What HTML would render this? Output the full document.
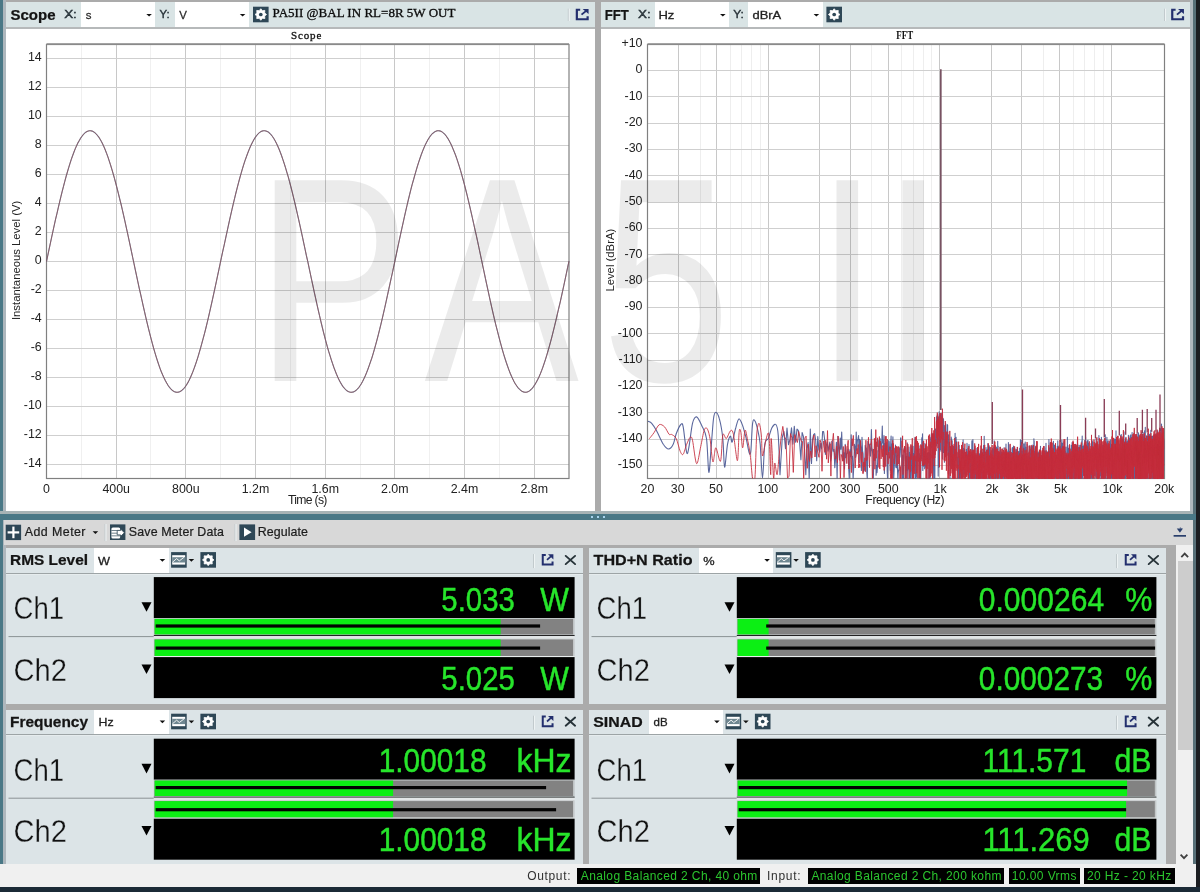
<!DOCTYPE html>
<html lang="en"><head><meta charset="utf-8"><title>Audio Analyzer - PA5II</title>
<style>
html,body{margin:0;padding:0}
body{width:1200px;height:892px;overflow:hidden;position:relative;background:#ababab;font-family:"Liberation Sans",sans-serif;color:#111}
.abs{position:absolute}
.hdr{background:#d9e4e5}
.mp{background:#dce4e7}
.ax{font-family:"Liberation Sans",sans-serif;font-size:12.4px;fill:#222}
.axl{font-family:"Liberation Sans",sans-serif;font-size:11.5px;fill:#222}
.axs{font-family:"Liberation Sans",sans-serif;font-size:11.3px;fill:#222}
svg text{white-space:pre}
</style></head>
<body>
<div class="abs" style="left:0;top:0;width:3px;height:887px;background:#4a7886"></div>
<div class="abs" style="left:3px;top:0;width:3px;height:865px;background:#aeb7bd"></div>
<div class="abs" style="left:1190px;top:0;width:3.3px;height:513px;background:#b0b8be"></div>
<div class="abs" style="left:1193.2px;top:0;width:3px;height:887px;background:#587078"></div>
<div class="abs" style="left:1195.6px;top:0;width:4.4px;height:892px;background:#1b1d21"></div>
<div class="abs" style="left:6px;top:2px;width:589px;height:509.5px;background:#fff"></div>
<div class="abs hdr" style="left:6px;top:2px;width:589px;height:25px"></div>
<div class="abs" style="left:6px;top:27px;width:589px;height:1.5px;background:#b6b9ba"></div>
<div class="abs" style="left:601px;top:2px;width:589px;height:509.5px;background:#fff"></div>
<div class="abs hdr" style="left:601px;top:2px;width:589px;height:25px"></div>
<div class="abs" style="left:601px;top:27px;width:589px;height:1.5px;background:#b6b9ba"></div>
<div class="abs" style="left:81px;top:2px;width:74px;height:25px;background:#fff"></div>
<div class="abs" style="left:175px;top:2px;width:74px;height:25px;background:#fff"></div>
<div class="abs" style="left:654.5px;top:2px;width:74.20000000000005px;height:25px;background:#fff"></div>
<div class="abs" style="left:748px;top:2px;width:74.5px;height:25px;background:#fff"></div>
<div class="abs" style="left:0;top:511.3px;width:1193px;height:2.4px;background:#a7b3b5"></div>
<div class="abs" style="left:0;top:513.6px;width:1196px;height:6.6px;background:#4a7886"></div>
<div class="abs" style="left:591.2px;top:515.6px;width:2.2px;height:2.2px;background:#a9d4ee"></div>
<div class="abs" style="left:597.2px;top:515.6px;width:2.2px;height:2.2px;background:#a9d4ee"></div>
<div class="abs" style="left:603.2px;top:515.6px;width:2.2px;height:2.2px;background:#a9d4ee"></div>
<div class="abs" style="left:3.5px;top:520.2px;width:1189.5px;height:24.8px;background:#d8d8d8"></div>
<div class="abs mp" style="left:6px;top:547.6px;width:577px;height:156.1px"></div>
<div class="abs" style="left:94px;top:547.6px;width:74.6px;height:25.2px;background:#fff"></div>
<div class="abs" style="left:6px;top:572.8000000000001px;width:577px;height:1px;background:#9da4a6"></div>
<div class="abs" style="left:6px;top:573.8000000000001px;width:577px;height:1px;background:#e6ecee"></div>
<div class="abs mp" style="left:589px;top:547.6px;width:577px;height:156.1px"></div>
<div class="abs" style="left:698.7px;top:547.6px;width:74.6px;height:25.2px;background:#fff"></div>
<div class="abs" style="left:589px;top:572.8000000000001px;width:577px;height:1px;background:#9da4a6"></div>
<div class="abs" style="left:589px;top:573.8000000000001px;width:577px;height:1px;background:#e6ecee"></div>
<div class="abs mp" style="left:6px;top:709.6px;width:577px;height:154.9px"></div>
<div class="abs" style="left:94px;top:709.6px;width:74.6px;height:24.8px;background:#fff"></div>
<div class="abs" style="left:6px;top:734.2px;width:577px;height:1px;background:#9da4a6"></div>
<div class="abs" style="left:6px;top:735.2px;width:577px;height:1px;background:#e6ecee"></div>
<div class="abs mp" style="left:589px;top:709.6px;width:577px;height:154.9px"></div>
<div class="abs" style="left:648.5px;top:709.6px;width:74.6px;height:24.8px;background:#fff"></div>
<div class="abs" style="left:589px;top:734.2px;width:577px;height:1px;background:#9da4a6"></div>
<div class="abs" style="left:589px;top:735.2px;width:577px;height:1px;background:#e6ecee"></div>
<div class="abs" style="left:1176.2px;top:545px;width:16.8px;height:320px;background:#f0f0f0"></div>
<div class="abs" style="left:1177.5px;top:561px;width:15px;height:188.5px;background:#cdcdcd"></div>
<div class="abs" style="left:0;top:864.4px;width:1195.5px;height:22.2px;background:#f0f0f0"></div>
<div class="abs" style="left:0;top:886.6px;width:1200px;height:5.4px;background:#1b2a36"></div>
<div class="abs" style="left:577.3px;top:867.6px;width:183.1px;height:16.6px;background:#000"></div>
<div class="abs" style="left:807.6px;top:867.6px;width:196.0px;height:16.6px;background:#000"></div>
<div class="abs" style="left:1008.9px;top:867.6px;width:71.4px;height:16.6px;background:#000"></div>
<div class="abs" style="left:1084.1px;top:867.6px;width:90.9px;height:16.6px;background:#000"></div>
<svg class="abs" style="left:0;top:0;will-change:transform" width="1200" height="892" viewBox="0 0 1200 892">
<line x1="81.5" y1="44.5" x2="81.5" y2="478.5" stroke="#f0f0f0" stroke-width="1"/>
<line x1="116.5" y1="44.5" x2="116.5" y2="478.5" stroke="#c8c8c8" stroke-width="1"/>
<line x1="150.5" y1="44.5" x2="150.5" y2="478.5" stroke="#f0f0f0" stroke-width="1"/>
<line x1="185.5" y1="44.5" x2="185.5" y2="478.5" stroke="#c8c8c8" stroke-width="1"/>
<line x1="220.5" y1="44.5" x2="220.5" y2="478.5" stroke="#f0f0f0" stroke-width="1"/>
<line x1="255.5" y1="44.5" x2="255.5" y2="478.5" stroke="#c8c8c8" stroke-width="1"/>
<line x1="290.5" y1="44.5" x2="290.5" y2="478.5" stroke="#f0f0f0" stroke-width="1"/>
<line x1="325.5" y1="44.5" x2="325.5" y2="478.5" stroke="#c8c8c8" stroke-width="1"/>
<line x1="360.5" y1="44.5" x2="360.5" y2="478.5" stroke="#f0f0f0" stroke-width="1"/>
<line x1="394.5" y1="44.5" x2="394.5" y2="478.5" stroke="#c8c8c8" stroke-width="1"/>
<line x1="429.5" y1="44.5" x2="429.5" y2="478.5" stroke="#f0f0f0" stroke-width="1"/>
<line x1="464.5" y1="44.5" x2="464.5" y2="478.5" stroke="#c8c8c8" stroke-width="1"/>
<line x1="499.5" y1="44.5" x2="499.5" y2="478.5" stroke="#f0f0f0" stroke-width="1"/>
<line x1="534.5" y1="44.5" x2="534.5" y2="478.5" stroke="#c8c8c8" stroke-width="1"/>
<line x1="46.5" y1="464.5" x2="569.0" y2="464.5" stroke="#cfcfcf" stroke-width="1"/>
<line x1="46.5" y1="435.5" x2="569.0" y2="435.5" stroke="#cfcfcf" stroke-width="1"/>
<line x1="46.5" y1="406.5" x2="569.0" y2="406.5" stroke="#cfcfcf" stroke-width="1"/>
<line x1="46.5" y1="377.5" x2="569.0" y2="377.5" stroke="#cfcfcf" stroke-width="1"/>
<line x1="46.5" y1="348.5" x2="569.0" y2="348.5" stroke="#cfcfcf" stroke-width="1"/>
<line x1="46.5" y1="319.5" x2="569.0" y2="319.5" stroke="#cfcfcf" stroke-width="1"/>
<line x1="46.5" y1="290.5" x2="569.0" y2="290.5" stroke="#cfcfcf" stroke-width="1"/>
<line x1="46.5" y1="261.5" x2="569.0" y2="261.5" stroke="#cfcfcf" stroke-width="1"/>
<line x1="46.5" y1="232.5" x2="569.0" y2="232.5" stroke="#cfcfcf" stroke-width="1"/>
<line x1="46.5" y1="203.5" x2="569.0" y2="203.5" stroke="#cfcfcf" stroke-width="1"/>
<line x1="46.5" y1="174.5" x2="569.0" y2="174.5" stroke="#cfcfcf" stroke-width="1"/>
<line x1="46.5" y1="145.5" x2="569.0" y2="145.5" stroke="#cfcfcf" stroke-width="1"/>
<line x1="46.5" y1="116.5" x2="569.0" y2="116.5" stroke="#cfcfcf" stroke-width="1"/>
<line x1="46.5" y1="87.5" x2="569.0" y2="87.5" stroke="#cfcfcf" stroke-width="1"/>
<line x1="46.5" y1="58.5" x2="569.0" y2="58.5" stroke="#cfcfcf" stroke-width="1"/>
<rect x="46.5" y="44.5" width="522.5" height="434.0" fill="none" stroke="#808080" stroke-width="1.2"/>
<line x1="46.5" y1="44.1" x2="569.0" y2="44.1" stroke="#8a8a8a" stroke-width="1.6"/>
<text x="41.7" y="467.4" text-anchor="end" class="ax">-14</text>
<text x="41.7" y="438.4" text-anchor="end" class="ax">-12</text>
<text x="41.7" y="409.4" text-anchor="end" class="ax">-10</text>
<text x="41.7" y="380.4" text-anchor="end" class="ax">-8</text>
<text x="41.7" y="351.4" text-anchor="end" class="ax">-6</text>
<text x="41.7" y="322.4" text-anchor="end" class="ax">-4</text>
<text x="41.7" y="293.4" text-anchor="end" class="ax">-2</text>
<text x="41.7" y="264.4" text-anchor="end" class="ax">0</text>
<text x="41.7" y="235.4" text-anchor="end" class="ax">2</text>
<text x="41.7" y="206.4" text-anchor="end" class="ax">4</text>
<text x="41.7" y="177.4" text-anchor="end" class="ax">6</text>
<text x="41.7" y="148.4" text-anchor="end" class="ax">8</text>
<text x="41.7" y="119.4" text-anchor="end" class="ax">10</text>
<text x="41.7" y="90.4" text-anchor="end" class="ax">12</text>
<text x="41.7" y="61.4" text-anchor="end" class="ax">14</text>
<text x="46.5" y="492.8" text-anchor="middle" class="ax">0</text>
<text x="116.2" y="492.8" text-anchor="middle" class="ax">400u</text>
<text x="185.8" y="492.8" text-anchor="middle" class="ax">800u</text>
<text x="255.5" y="492.8" text-anchor="middle" class="ax">1.2m</text>
<text x="325.2" y="492.8" text-anchor="middle" class="ax">1.6m</text>
<text x="394.8" y="492.8" text-anchor="middle" class="ax">2.0m</text>
<text x="464.5" y="492.8" text-anchor="middle" class="ax">2.4m</text>
<text x="534.2" y="492.8" text-anchor="middle" class="ax">2.8m</text>
<text x="288.06" y="504.3" font-family="Liberation Sans, sans-serif" font-size="12.2" fill="#222" letter-spacing="-0.707">Time (s)</text>
<text transform="translate(19.6,260.4) rotate(-90)" text-anchor="middle" class="axs">Instantaneous Level (V)</text>
<text x="290.99" y="38.7" font-family="Liberation Serif, serif" font-size="11" fill="#111" letter-spacing="0.876" stroke="#111" stroke-width="0.3">Scope</text>
<polyline points="46.5,261.5 47.8,255.3 49.1,249.2 50.4,243.1 51.7,237.0 53.0,231.0 54.3,225.0 55.6,219.1 57.0,213.3 58.3,207.7 59.6,202.1 60.9,196.7 62.2,191.4 63.5,186.3 64.8,181.3 66.1,176.5 67.4,172.0 68.7,167.6 70.0,163.4 71.3,159.4 72.6,155.7 73.9,152.2 75.2,148.9 76.5,145.9 77.8,143.1 79.2,140.7 80.5,138.4 81.8,136.5 83.1,134.8 84.4,133.4 85.7,132.3 87.0,131.5 88.3,131.0 89.6,130.7 90.9,130.8 92.2,131.1 93.5,131.7 94.8,132.7 96.1,133.9 97.4,135.4 98.8,137.1 100.1,139.2 101.4,141.5 102.7,144.1 104.0,146.9 105.3,150.0 106.6,153.4 107.9,156.9 109.2,160.8 110.5,164.8 111.8,169.1 113.1,173.5 114.4,178.2 115.7,183.0 117.0,188.0 118.3,193.2 119.6,198.5 121.0,204.0 122.3,209.6 123.6,215.3 124.9,221.1 126.2,227.1 127.5,233.0 128.8,239.1 130.1,245.2 131.4,251.3 132.7,257.5 134.0,263.6 135.3,269.8 136.6,275.9 137.9,282.0 139.2,288.1 140.6,294.1 141.9,300.0 143.2,305.9 144.5,311.6 145.8,317.3 147.1,322.8 148.4,328.2 149.7,333.4 151.0,338.4 152.3,343.3 153.6,348.1 154.9,352.6 156.2,356.9 157.5,361.0 158.8,364.9 160.1,368.6 161.4,372.0 162.8,375.2 164.1,378.1 165.4,380.7 166.7,383.1 168.0,385.3 169.3,387.1 170.6,388.7 171.9,390.0 173.2,391.0 174.5,391.7 175.8,392.1 177.1,392.3 178.4,392.1 179.7,391.7 181.0,391.0 182.3,390.0 183.7,388.6 185.0,387.1 186.3,385.2 187.6,383.1 188.9,380.7 190.2,378.0 191.5,375.0 192.8,371.9 194.1,368.4 195.4,364.8 196.7,360.9 198.0,356.8 199.3,352.4 200.6,347.9 201.9,343.2 203.2,338.3 204.6,333.2 205.9,328.0 207.2,322.6 208.5,317.1 209.8,311.4 211.1,305.7 212.4,299.8 213.7,293.9 215.0,287.9 216.3,281.8 217.6,275.7 218.9,269.6 220.2,263.4 221.5,257.2 222.8,251.1 224.2,245.0 225.5,238.9 226.8,232.8 228.1,226.8 229.4,220.9 230.7,215.1 232.0,209.4 233.3,203.8 234.6,198.4 235.9,193.0 237.2,187.9 238.5,182.8 239.8,178.0 241.1,173.4 242.4,168.9 243.7,164.7 245.0,160.6 246.4,156.8 247.7,153.2 249.0,149.9 250.3,146.8 251.6,144.0 252.9,141.4 254.2,139.1 255.5,137.1 256.8,135.3 258.1,133.8 259.4,132.6 260.7,131.7 262.0,131.1 263.3,130.8 264.6,130.7 265.9,131.0 267.3,131.5 268.6,132.3 269.9,133.5 271.2,134.9 272.5,136.5 273.8,138.5 275.1,140.7 276.4,143.2 277.7,146.0 279.0,149.0 280.3,152.3 281.6,155.8 282.9,159.6 284.2,163.5 285.5,167.7 286.8,172.1 288.2,176.7 289.5,181.5 290.8,186.5 292.1,191.6 293.4,196.9 294.7,202.3 296.0,207.9 297.3,213.6 298.6,219.3 299.9,225.2 301.2,231.2 302.5,237.2 303.8,243.3 305.1,249.4 306.4,255.6 307.8,261.7 309.1,267.9 310.4,274.0 311.7,280.2 313.0,286.2 314.3,292.3 315.6,298.2 316.9,304.1 318.2,309.9 319.5,315.5 320.8,321.1 322.1,326.5 323.4,331.8 324.7,336.9 326.0,341.8 327.3,346.6 328.6,351.2 330.0,355.6 331.3,359.8 332.6,363.7 333.9,367.5 335.2,370.9 336.5,374.2 337.8,377.2 339.1,379.9 340.4,382.4 341.7,384.6 343.0,386.6 344.3,388.2 345.6,389.6 346.9,390.7 348.2,391.5 349.5,392.0 350.9,392.3 352.2,392.2 353.5,391.9 354.8,391.2 356.1,390.3 357.4,389.1 358.7,387.6 360.0,385.8 361.3,383.8 362.6,381.4 363.9,378.8 365.2,376.0 366.5,372.9 367.8,369.5 369.1,365.9 370.4,362.1 371.8,358.1 373.1,353.8 374.4,349.3 375.7,344.7 377.0,339.8 378.3,334.8 379.6,329.6 380.9,324.3 382.2,318.8 383.5,313.2 384.8,307.5 386.1,301.6 387.4,295.7 388.7,289.7 390.0,283.7 391.3,277.6 392.7,271.5 394.0,265.3 395.3,259.1 396.6,253.0 397.9,246.9 399.2,240.7 400.5,234.7 401.8,228.7 403.1,222.8 404.4,216.9 405.7,211.2 407.0,205.5 408.3,200.0 409.6,194.7 410.9,189.4 412.2,184.4 413.6,179.5 414.9,174.8 416.2,170.3 417.5,165.9 418.8,161.8 420.1,158.0 421.4,154.3 422.7,150.9 424.0,147.7 425.3,144.8 426.6,142.2 427.9,139.8 429.2,137.7 430.5,135.8 431.8,134.2 433.2,133.0 434.5,132.0 435.8,131.3 437.1,130.8 438.4,130.7 439.7,130.9 441.0,131.3 442.3,132.1 443.6,133.1 444.9,134.4 446.2,136.0 447.5,137.9 448.8,140.0 450.1,142.4 451.4,145.1 452.7,148.1 454.0,151.3 455.4,154.7 456.7,158.4 458.0,162.3 459.3,166.4 460.6,170.7 461.9,175.3 463.2,180.0 464.5,184.9 465.8,190.0 467.1,195.2 468.4,200.6 469.7,206.1 471.0,211.8 472.3,217.5 473.6,223.4 474.9,229.3 476.3,235.3 477.6,241.4 478.9,247.5 480.2,253.7 481.5,259.8 482.8,266.0 484.1,272.1 485.4,278.3 486.7,284.4 488.0,290.4 489.3,296.4 490.6,302.3 491.9,308.1 493.2,313.8 494.5,319.4 495.8,324.8 497.2,330.2 498.5,335.3 499.8,340.3 501.1,345.2 502.4,349.8 503.7,354.3 505.0,358.5 506.3,362.5 507.6,366.3 508.9,369.9 510.2,373.2 511.5,376.3 512.8,379.1 514.1,381.7 515.4,384.0 516.8,386.0 518.1,387.8 519.4,389.2 520.7,390.4 522.0,391.3 523.3,391.9 524.6,392.2 525.9,392.3 527.2,392.0 528.5,391.5 529.8,390.6 531.1,389.5 532.4,388.1 533.7,386.4 535.0,384.4 536.3,382.2 537.6,379.7 539.0,376.9 540.3,373.9 541.6,370.6 542.9,367.1 544.2,363.3 545.5,359.3 546.8,355.1 548.1,350.7 549.4,346.1 550.7,341.3 552.0,336.4 553.3,331.2 554.6,325.9 555.9,320.5 557.2,314.9 558.5,309.2 559.9,303.5 561.2,297.6 562.5,291.6 563.8,285.6 565.1,279.5 566.4,273.4 567.7,267.2 569.0,261.1" fill="none" stroke="#66708f" stroke-width="1.1" opacity="0.8"/>
<polyline points="46.5,261.5 47.8,255.3 49.1,249.2 50.4,243.1 51.7,237.0 53.0,231.0 54.3,225.0 55.6,219.1 57.0,213.3 58.3,207.7 59.6,202.1 60.9,196.7 62.2,191.4 63.5,186.3 64.8,181.3 66.1,176.5 67.4,172.0 68.7,167.6 70.0,163.4 71.3,159.4 72.6,155.7 73.9,152.2 75.2,148.9 76.5,145.9 77.8,143.1 79.2,140.7 80.5,138.4 81.8,136.5 83.1,134.8 84.4,133.4 85.7,132.3 87.0,131.5 88.3,131.0 89.6,130.7 90.9,130.8 92.2,131.1 93.5,131.7 94.8,132.7 96.1,133.9 97.4,135.4 98.8,137.1 100.1,139.2 101.4,141.5 102.7,144.1 104.0,146.9 105.3,150.0 106.6,153.4 107.9,156.9 109.2,160.8 110.5,164.8 111.8,169.1 113.1,173.5 114.4,178.2 115.7,183.0 117.0,188.0 118.3,193.2 119.6,198.5 121.0,204.0 122.3,209.6 123.6,215.3 124.9,221.1 126.2,227.1 127.5,233.0 128.8,239.1 130.1,245.2 131.4,251.3 132.7,257.5 134.0,263.6 135.3,269.8 136.6,275.9 137.9,282.0 139.2,288.1 140.6,294.1 141.9,300.0 143.2,305.9 144.5,311.6 145.8,317.3 147.1,322.8 148.4,328.2 149.7,333.4 151.0,338.4 152.3,343.3 153.6,348.1 154.9,352.6 156.2,356.9 157.5,361.0 158.8,364.9 160.1,368.6 161.4,372.0 162.8,375.2 164.1,378.1 165.4,380.7 166.7,383.1 168.0,385.3 169.3,387.1 170.6,388.7 171.9,390.0 173.2,391.0 174.5,391.7 175.8,392.1 177.1,392.3 178.4,392.1 179.7,391.7 181.0,391.0 182.3,390.0 183.7,388.6 185.0,387.1 186.3,385.2 187.6,383.1 188.9,380.7 190.2,378.0 191.5,375.0 192.8,371.9 194.1,368.4 195.4,364.8 196.7,360.9 198.0,356.8 199.3,352.4 200.6,347.9 201.9,343.2 203.2,338.3 204.6,333.2 205.9,328.0 207.2,322.6 208.5,317.1 209.8,311.4 211.1,305.7 212.4,299.8 213.7,293.9 215.0,287.9 216.3,281.8 217.6,275.7 218.9,269.6 220.2,263.4 221.5,257.2 222.8,251.1 224.2,245.0 225.5,238.9 226.8,232.8 228.1,226.8 229.4,220.9 230.7,215.1 232.0,209.4 233.3,203.8 234.6,198.4 235.9,193.0 237.2,187.9 238.5,182.8 239.8,178.0 241.1,173.4 242.4,168.9 243.7,164.7 245.0,160.6 246.4,156.8 247.7,153.2 249.0,149.9 250.3,146.8 251.6,144.0 252.9,141.4 254.2,139.1 255.5,137.1 256.8,135.3 258.1,133.8 259.4,132.6 260.7,131.7 262.0,131.1 263.3,130.8 264.6,130.7 265.9,131.0 267.3,131.5 268.6,132.3 269.9,133.5 271.2,134.9 272.5,136.5 273.8,138.5 275.1,140.7 276.4,143.2 277.7,146.0 279.0,149.0 280.3,152.3 281.6,155.8 282.9,159.6 284.2,163.5 285.5,167.7 286.8,172.1 288.2,176.7 289.5,181.5 290.8,186.5 292.1,191.6 293.4,196.9 294.7,202.3 296.0,207.9 297.3,213.6 298.6,219.3 299.9,225.2 301.2,231.2 302.5,237.2 303.8,243.3 305.1,249.4 306.4,255.6 307.8,261.7 309.1,267.9 310.4,274.0 311.7,280.2 313.0,286.2 314.3,292.3 315.6,298.2 316.9,304.1 318.2,309.9 319.5,315.5 320.8,321.1 322.1,326.5 323.4,331.8 324.7,336.9 326.0,341.8 327.3,346.6 328.6,351.2 330.0,355.6 331.3,359.8 332.6,363.7 333.9,367.5 335.2,370.9 336.5,374.2 337.8,377.2 339.1,379.9 340.4,382.4 341.7,384.6 343.0,386.6 344.3,388.2 345.6,389.6 346.9,390.7 348.2,391.5 349.5,392.0 350.9,392.3 352.2,392.2 353.5,391.9 354.8,391.2 356.1,390.3 357.4,389.1 358.7,387.6 360.0,385.8 361.3,383.8 362.6,381.4 363.9,378.8 365.2,376.0 366.5,372.9 367.8,369.5 369.1,365.9 370.4,362.1 371.8,358.1 373.1,353.8 374.4,349.3 375.7,344.7 377.0,339.8 378.3,334.8 379.6,329.6 380.9,324.3 382.2,318.8 383.5,313.2 384.8,307.5 386.1,301.6 387.4,295.7 388.7,289.7 390.0,283.7 391.3,277.6 392.7,271.5 394.0,265.3 395.3,259.1 396.6,253.0 397.9,246.9 399.2,240.7 400.5,234.7 401.8,228.7 403.1,222.8 404.4,216.9 405.7,211.2 407.0,205.5 408.3,200.0 409.6,194.7 410.9,189.4 412.2,184.4 413.6,179.5 414.9,174.8 416.2,170.3 417.5,165.9 418.8,161.8 420.1,158.0 421.4,154.3 422.7,150.9 424.0,147.7 425.3,144.8 426.6,142.2 427.9,139.8 429.2,137.7 430.5,135.8 431.8,134.2 433.2,133.0 434.5,132.0 435.8,131.3 437.1,130.8 438.4,130.7 439.7,130.9 441.0,131.3 442.3,132.1 443.6,133.1 444.9,134.4 446.2,136.0 447.5,137.9 448.8,140.0 450.1,142.4 451.4,145.1 452.7,148.1 454.0,151.3 455.4,154.7 456.7,158.4 458.0,162.3 459.3,166.4 460.6,170.7 461.9,175.3 463.2,180.0 464.5,184.9 465.8,190.0 467.1,195.2 468.4,200.6 469.7,206.1 471.0,211.8 472.3,217.5 473.6,223.4 474.9,229.3 476.3,235.3 477.6,241.4 478.9,247.5 480.2,253.7 481.5,259.8 482.8,266.0 484.1,272.1 485.4,278.3 486.7,284.4 488.0,290.4 489.3,296.4 490.6,302.3 491.9,308.1 493.2,313.8 494.5,319.4 495.8,324.8 497.2,330.2 498.5,335.3 499.8,340.3 501.1,345.2 502.4,349.8 503.7,354.3 505.0,358.5 506.3,362.5 507.6,366.3 508.9,369.9 510.2,373.2 511.5,376.3 512.8,379.1 514.1,381.7 515.4,384.0 516.8,386.0 518.1,387.8 519.4,389.2 520.7,390.4 522.0,391.3 523.3,391.9 524.6,392.2 525.9,392.3 527.2,392.0 528.5,391.5 529.8,390.6 531.1,389.5 532.4,388.1 533.7,386.4 535.0,384.4 536.3,382.2 537.6,379.7 539.0,376.9 540.3,373.9 541.6,370.6 542.9,367.1 544.2,363.3 545.5,359.3 546.8,355.1 548.1,350.7 549.4,346.1 550.7,341.3 552.0,336.4 553.3,331.2 554.6,325.9 555.9,320.5 557.2,314.9 558.5,309.2 559.9,303.5 561.2,297.6 562.5,291.6 563.8,285.6 565.1,279.5 566.4,273.4 567.7,267.2 569.0,261.1" fill="none" stroke="#86525a" stroke-width="1.0" opacity="0.8"/>
<line x1="700.5" y1="44.5" x2="700.5" y2="478.5" stroke="#eeeeee" stroke-width="1"/>
<line x1="730.5" y1="44.5" x2="730.5" y2="478.5" stroke="#eeeeee" stroke-width="1"/>
<line x1="741.5" y1="44.5" x2="741.5" y2="478.5" stroke="#eeeeee" stroke-width="1"/>
<line x1="751.5" y1="44.5" x2="751.5" y2="478.5" stroke="#eeeeee" stroke-width="1"/>
<line x1="760.5" y1="44.5" x2="760.5" y2="478.5" stroke="#eeeeee" stroke-width="1"/>
<line x1="871.5" y1="44.5" x2="871.5" y2="478.5" stroke="#eeeeee" stroke-width="1"/>
<line x1="901.5" y1="44.5" x2="901.5" y2="478.5" stroke="#eeeeee" stroke-width="1"/>
<line x1="913.5" y1="44.5" x2="913.5" y2="478.5" stroke="#eeeeee" stroke-width="1"/>
<line x1="923.5" y1="44.5" x2="923.5" y2="478.5" stroke="#eeeeee" stroke-width="1"/>
<line x1="931.5" y1="44.5" x2="931.5" y2="478.5" stroke="#eeeeee" stroke-width="1"/>
<line x1="1043.5" y1="44.5" x2="1043.5" y2="478.5" stroke="#eeeeee" stroke-width="1"/>
<line x1="1073.5" y1="44.5" x2="1073.5" y2="478.5" stroke="#eeeeee" stroke-width="1"/>
<line x1="1084.5" y1="44.5" x2="1084.5" y2="478.5" stroke="#eeeeee" stroke-width="1"/>
<line x1="1094.5" y1="44.5" x2="1094.5" y2="478.5" stroke="#eeeeee" stroke-width="1"/>
<line x1="1103.5" y1="44.5" x2="1103.5" y2="478.5" stroke="#eeeeee" stroke-width="1"/>
<line x1="678.5" y1="44.5" x2="678.5" y2="478.5" stroke="#c8c8c8" stroke-width="1"/>
<line x1="716.5" y1="44.5" x2="716.5" y2="478.5" stroke="#c8c8c8" stroke-width="1"/>
<line x1="768.5" y1="44.5" x2="768.5" y2="478.5" stroke="#c8c8c8" stroke-width="1"/>
<line x1="819.5" y1="44.5" x2="819.5" y2="478.5" stroke="#c8c8c8" stroke-width="1"/>
<line x1="850.5" y1="44.5" x2="850.5" y2="478.5" stroke="#c8c8c8" stroke-width="1"/>
<line x1="888.5" y1="44.5" x2="888.5" y2="478.5" stroke="#c8c8c8" stroke-width="1"/>
<line x1="939.5" y1="44.5" x2="939.5" y2="478.5" stroke="#c8c8c8" stroke-width="1"/>
<line x1="991.5" y1="44.5" x2="991.5" y2="478.5" stroke="#c8c8c8" stroke-width="1"/>
<line x1="1021.5" y1="44.5" x2="1021.5" y2="478.5" stroke="#c8c8c8" stroke-width="1"/>
<line x1="1059.5" y1="44.5" x2="1059.5" y2="478.5" stroke="#c8c8c8" stroke-width="1"/>
<line x1="1111.5" y1="44.5" x2="1111.5" y2="478.5" stroke="#c8c8c8" stroke-width="1"/>
<line x1="647.5" y1="70.5" x2="1164.5" y2="70.5" stroke="#cfcfcf" stroke-width="1"/>
<line x1="647.5" y1="96.5" x2="1164.5" y2="96.5" stroke="#cfcfcf" stroke-width="1"/>
<line x1="647.5" y1="123.5" x2="1164.5" y2="123.5" stroke="#cfcfcf" stroke-width="1"/>
<line x1="647.5" y1="149.5" x2="1164.5" y2="149.5" stroke="#cfcfcf" stroke-width="1"/>
<line x1="647.5" y1="175.5" x2="1164.5" y2="175.5" stroke="#cfcfcf" stroke-width="1"/>
<line x1="647.5" y1="202.5" x2="1164.5" y2="202.5" stroke="#cfcfcf" stroke-width="1"/>
<line x1="647.5" y1="228.5" x2="1164.5" y2="228.5" stroke="#cfcfcf" stroke-width="1"/>
<line x1="647.5" y1="254.5" x2="1164.5" y2="254.5" stroke="#cfcfcf" stroke-width="1"/>
<line x1="647.5" y1="281.5" x2="1164.5" y2="281.5" stroke="#cfcfcf" stroke-width="1"/>
<line x1="647.5" y1="307.5" x2="1164.5" y2="307.5" stroke="#cfcfcf" stroke-width="1"/>
<line x1="647.5" y1="333.5" x2="1164.5" y2="333.5" stroke="#cfcfcf" stroke-width="1"/>
<line x1="647.5" y1="360.5" x2="1164.5" y2="360.5" stroke="#cfcfcf" stroke-width="1"/>
<line x1="647.5" y1="386.5" x2="1164.5" y2="386.5" stroke="#cfcfcf" stroke-width="1"/>
<line x1="647.5" y1="412.5" x2="1164.5" y2="412.5" stroke="#cfcfcf" stroke-width="1"/>
<line x1="647.5" y1="439.5" x2="1164.5" y2="439.5" stroke="#cfcfcf" stroke-width="1"/>
<line x1="647.5" y1="465.5" x2="1164.5" y2="465.5" stroke="#cfcfcf" stroke-width="1"/>
<rect x="647.5" y="44.5" width="517.0" height="434.0" fill="none" stroke="#808080" stroke-width="1.2"/>
<line x1="647.5" y1="44.1" x2="1164.5" y2="44.1" stroke="#8a8a8a" stroke-width="1.6"/>
<text x="642.5" y="47.0" text-anchor="end" class="ax">+10</text>
<text x="642.5" y="73.3" text-anchor="end" class="ax">0</text>
<text x="642.5" y="99.6" text-anchor="end" class="ax">-10</text>
<text x="642.5" y="126.0" text-anchor="end" class="ax">-20</text>
<text x="642.5" y="152.3" text-anchor="end" class="ax">-30</text>
<text x="642.5" y="178.6" text-anchor="end" class="ax">-40</text>
<text x="642.5" y="205.0" text-anchor="end" class="ax">-50</text>
<text x="642.5" y="231.3" text-anchor="end" class="ax">-60</text>
<text x="642.5" y="257.6" text-anchor="end" class="ax">-70</text>
<text x="642.5" y="284.0" text-anchor="end" class="ax">-80</text>
<text x="642.5" y="310.3" text-anchor="end" class="ax">-90</text>
<text x="642.5" y="336.6" text-anchor="end" class="ax">-100</text>
<text x="642.5" y="363.0" text-anchor="end" class="ax">-110</text>
<text x="642.5" y="389.3" text-anchor="end" class="ax">-120</text>
<text x="642.5" y="415.6" text-anchor="end" class="ax">-130</text>
<text x="642.5" y="442.0" text-anchor="end" class="ax">-140</text>
<text x="642.5" y="468.3" text-anchor="end" class="ax">-150</text>
<text x="647.4" y="492.8" text-anchor="middle" class="ax">20</text>
<text x="677.7" y="492.8" text-anchor="middle" class="ax">30</text>
<text x="716.0" y="492.8" text-anchor="middle" class="ax">50</text>
<text x="767.8" y="492.8" text-anchor="middle" class="ax">100</text>
<text x="819.7" y="492.8" text-anchor="middle" class="ax">200</text>
<text x="850.0" y="492.8" text-anchor="middle" class="ax">300</text>
<text x="888.3" y="492.8" text-anchor="middle" class="ax">500</text>
<text x="940.1" y="492.8" text-anchor="middle" class="ax">1k</text>
<text x="992.0" y="492.8" text-anchor="middle" class="ax">2k</text>
<text x="1022.3" y="492.8" text-anchor="middle" class="ax">3k</text>
<text x="1060.6" y="492.8" text-anchor="middle" class="ax">5k</text>
<text x="1112.4" y="492.8" text-anchor="middle" class="ax">10k</text>
<text x="1164.3" y="492.8" text-anchor="middle" class="ax">20k</text>
<text x="865.32" y="504.2" font-family="Liberation Sans, sans-serif" font-size="12.2" fill="#222" letter-spacing="-0.358">Frequency (Hz)</text>
<text transform="translate(614.3,260.2) rotate(-90)" text-anchor="middle" class="axs">Level (dBrA)</text>
<text transform="translate(896.27,38.5) scale(0.7714,1)" font-family="Liberation Serif, serif" font-size="11.6" font-weight="bold" fill="#111">FFT</text>
<clipPath id="fc"><rect x="647.5" y="44.5" width="518.0" height="434.0"/></clipPath>
<g clip-path="url(#fc)" fill="none" stroke-linejoin="round"><path d="M647.9 421.2C648.5 421.6 650.3 421.9 651.7 423.3C653.0 424.8 654.5 427.0 656.3 430.3C658.2 433.7 661.4 441.3 663.3 444.3C665.3 447.3 667.0 449.0 668.6 449.0C670.2 449.0 672.0 446.8 673.2 444.3C674.5 441.9 675.0 437.0 676.2 433.8C677.4 430.7 679.7 425.6 680.8 424.5C682.0 423.4 682.2 422.4 683.2 426.8C684.1 431.3 685.7 449.3 686.7 452.5C687.6 455.7 688.1 451.3 689.0 446.7C689.9 442.0 691.3 428.1 692.5 423.3C693.7 418.6 695.1 416.5 696.6 416.9C698.1 417.3 700.2 422.2 701.8 425.7C703.4 429.1 705.4 431.0 706.5 438.5C707.6 446.0 708.1 471.0 708.8 472.3C709.6 473.6 710.4 455.3 711.2 446.7C711.9 438.1 712.8 424.2 713.5 418.7C714.2 413.2 714.9 412.2 715.8 412.2C716.8 412.2 718.2 414.5 719.3 418.7C720.5 422.9 722.0 430.8 722.8 438.5C723.7 446.2 723.8 466.1 724.6 467.1C725.3 468.0 726.6 449.3 727.5 444.3C728.4 439.4 729.7 436.5 730.4 436.2C731.2 435.8 731.3 443.3 732.2 442.0C733.0 440.7 734.6 431.7 735.7 428.0C736.7 424.3 737.8 419.3 738.9 418.9C740.1 418.5 741.5 422.5 742.7 425.7C743.8 428.8 745.1 434.2 746.2 438.5C747.2 442.8 748.3 450.4 749.1 452.5C749.8 454.6 750.3 456.0 750.8 451.3C751.4 446.7 751.9 428.2 752.6 423.3C753.2 418.4 754.1 419.6 754.9 420.8C755.8 421.9 757.0 426.6 757.8 430.3C758.7 434.1 759.4 436.7 760.2 444.3C760.9 452.0 761.8 478.2 762.5 478.2C763.2 478.2 763.9 450.7 764.8 444.3C765.8 438.0 767.2 441.1 768.3 438.5C769.5 435.9 770.6 430.2 771.8 428.0C773.0 425.8 774.9 423.4 775.9 424.5C776.9 425.6 777.6 427.0 778.2 435.0C778.9 443.0 779.7 468.3 780.0 474.7L782.3 437.2 783.9 431.5 785.5 448.6 787 428.1 788.5 444.7 790 439.4 791.5 427.7 792.9 444.3 794.3 426.4 795.6 442.2 797 429.1 798.3 430.4 799.6 442.4 800.9 459.7 802.1 432.5 803.4 436.4 804.6 449.9 805.8 474.8 806.9 448.3 808.1 442.5 809.2 479.5 810.3 429 811.5 463.5 812.5 439.7 813.6 434.7 814.7 433.7 815.7 440.6 816.7 460.8 817.8 436.6 818.8 449.8 819.7 452.1 820.7 443.2 821.7 449 822.6 431.6 823.6 431.5 824.5 438.3 825.4 454.5 826.3 445.6 827.2 442.1 828.1 451.1 828.9 446.7 829.8 442 830.7 461 831.5 456.1 832.3 440.5 833.2 451.3 834 449.6 834.8 467.7 835.6 458 836.4 442.4 837.1 479.5 837.9 436.4 838.7 446.7 839.4 459.9 840.2 438.1 840.9 449.2 841.7 432.1 842.4 456 843.1 460.7 843.8 452.5 844.5 468.9 845.2 444.2 845.9 457.6 846.6 453.6 847.3 453.1 848 449 848.6 466.3 849.3 479.2 849.9 449.8 850.6 456.8 851.2 434.8 851.9 458.6 852.5 456.3 853.1 479.5 853.8 465.5 854.4 444.4 855 447.6 855.6 457.5 856.2 432 856.8 450.2 857.4 440.7 858 438.7 858.6 435.6 859.2 462.8 859.7 439.4 860.3 443.9 860.9 448.5 861.4 470.5 862 437.3 862.5 450.5 863.1 453.9 863.6 471.9 864.2 466.6 864.7 470.2 865.2 445.4 865.8 449.8 866.3 448.1 866.8 472.4 867.3 479.5 867.9 441.3 868.4 442.3 868.9 444.3 869.4 444.5 869.9 452.5 870.4 456.1 870.9 445.6 871.4 429.5 871.9 450.6 872.3 449.1 872.8 455.6 873.3 479.5 873.8 460.6 874.3 454 874.7 457.7 875.2 460.1 875.7 437.2 876.1 475.2 876.6 465.5 877 472.6 877.5 466.7 877.9 450.5 878.4 450.8 878.8 440.5 879.3 458.9 879.7 438.3 880.1 438.6 880.6 444.9 881 443.3 881.4 449.3 881.9 437.8 882.3 426 882.7 443 883.1 440.9 883.6 450.3 884 435.6 884.4 473.5 884.8 458.8 885.2 443.2 885.6 447 886 450 886.4 450.6 886.8 442.3 887.2 471.5 887.6 479.5 888 454 888.4 454.6 888.8 440.7 889.2 441.6 889.5 450.3 889.9 447.9 890.3 470.3 890.7 444.4 891.1 436.1 891.4 479.5 891.8 456.5 892.2 443.9 892.6 457.1 892.9 436.8 893.3 456.7 893.7 479.5 894 473.5 894.4 463.3 894.7 448.3 895.1 451.7 895.5 445.1 895.8 467.3 896.2 457.1 896.5 467.8 896.9 450.8 897.2 447.3 897.5 469.9 897.9 479.5 898.2 473.1 898.6 469.7 898.9 470.6 899.3 465.9 899.6 447.7 899.9 457.1 900.3 452 900.6 437.9 900.9 437.8 901.3 449.7 901.6 449.1 901.9 464 902.2 479.5 902.6 455.1 902.9 479.5 903.2 479.5 903.5 479.5 903.8 452.6 904.1 448.1 904.5 448.3 904.8 447.3 905.1 447.6 905.4 461.5 905.7 478.7 906 473 906.3 456.6 906.6 462.8 906.9 470.2 907.2 442.8 907.5 463.2 907.8 479.5 908.1 469.3 908.4 467.5 908.7 456.8 909 447.1 909.3 469.8 909.6 452.3 909.9 470.6 910.2 479.5 910.5 454.4 910.8 454.6 911.1 479.5 911.4 466.5 911.6 447.1 911.9 445.3 912.2 446.4 912.5 479.5 912.8 471.3 913.1 446.2 913.3 472.7 913.6 479.5 913.9 463.7 914.2 453.3 914.4 459.7 914.7 445.7 915 437.3 915.3 479.5 915.5 463.5 915.8 459 916.1 479.5 916.3 456 916.6 476.7 916.9 472.9 917.1 448.9 917.4 450.3 917.7 451.6 917.9 449.9 918.2 461.1 918.5 450.5 918.7 455.5 919 445.8 919.2 479.5 919.5 453.5 919.8 456.7 920 460.9 920.3 479.5 920.5 455.5 920.8 479.5 921 458 921.3 459 921.5 458.6 921.8 437.8 922 455.8 922.3 447.4 922.5 433.9 922.8 470.5 923 446.8 923.3 456.5 923.5 466.1 923.7 459.1 924 451.6 924.2 457.6 924.5 458.8 924.7 468.7 924.9 443.2 925.2 458.5 925.4 448.3 925.7 449.1 925.9 467.3 926.1 456.1 926.4 457.7 926.6 466 926.8 478.4 927.1 453.2 927.3 458.8 927.5 454.7 927.8 454.7 928 461.3 928.2 452.2 928.4 454.6 928.7 452.5 928.9 479.5 929.1 460.2 929.3 471.3 929.6 479.5 929.8 444 930 453.3 930.2 479.2 930.5 466.3 930.7 438.1 930.9 437.1 931.1 447.5 931.3 433.8 931.6 440.3 931.8 433 932 454 932.2 459.3 932.4 468 932.6 435.1 932.9 454.3 933.1 451.3 933.3 433.2 933.5 464.1 933.7 478.8 933.9 434.6 934.1 473.4 934.4 439.3 934.6 441.6 934.8 479.5 935 456.2 935.2 429.4 935.4 437.7 935.6 439.9 935.8 433.8 936 428.5 936.2 432.1 936.4 445.9 936.6 416.8 936.8 438 937 433.7 937.2 415 937.4 429.2 937.6 438.3 937.8 433.8 938 417.1 938.2 476.1 938.4 443.9 938.6 467.5 938.8 417.1 939 422.6 939.2 411.8 939.4 440.5 939.6 421 939.8 415.4 940 424.7 940.2 449.6 940.4 440.3 940.6 418.4 940.8 415.1 941 451.3 941.2 430.2 941.4 435.9 941.6 414.6 941.8 413.2 941.9 437.1 942.1 428.1 942.3 415.9 942.5 458.9 942.7 437 942.9 445.8 943.1 418.7 943.3 450.9 943.5 418.7 943.6 452.5 943.8 433.9 944 430.8 944.2 438.2 944.4 462.2 944.6 430.1 944.7 425.6 944.9 439.4 945.1 430.7 945.3 426.2 945.5 428.9 945.7 423.7 945.8 431.4 946 435.5 946.2 435.7 946.4 452.9 946.6 436.2 946.7 443.3 946.9 433.3 947.1 439.4 947.3 424.6 947.4 437.2 947.6 425 947.8 455.2 948 448.1 948.1 436.8 948.3 446.4 948.5 474.3 948.7 434.7 948.8 462.7 949 446.7 949.2 449.1 949.4 465 949.5 446.6 949.7 450.7 949.9 457.8 950 479.5 950.2 446.5 950.4 467.1 950.6 460.1 950.7 457.4 950.9 449.9 951.1 448.4 951.2 437.1 951.4 441.5 951.6 438.8 951.7 464.1 951.9 447 952.1 444.1 952.2 440.8 952.4 471.5 952.6 474.3 952.7 462.5 952.9 449.5 953.1 448.5 953.2 450.4 953.4 455.9 953.5 446.2 953.7 455.9 953.9 450.4 954 479.5 954.2 479.5 954.3 460.1 954.5 450.6 954.7 479.5 954.8 453.1 955 454.8 955.1 433.3 955.3 455.9 955.5 459 955.6 460.1 955.8 450.6 955.9 460.5 956.1 437.2 956.3 453.1 956.4 446.5 956.6 457.7 956.7 443.6 956.9 441.7 957 455.1 957.2 452.9 957.3 464.5 957.5 462.6 957.7 471.8 957.8 467.6 958 470.3 958.1 479.5 958.3 458.6 958.4 456.7 958.6 479.5 958.7 450.9 958.9 471.2 959 467.7 959.2 445.4 959.3 478.2 959.5 479.5 959.6 467.4 959.8 472.2 959.9 476.8 960.1 451.1 960.2 463.9 960.4 463.3 960.5 478.6 960.7 476.6 960.8 478.1 961 466.3 961.1 479.5 961.3 470.3 961.4 470.8 961.6 455 961.7 445.2 961.8 451.5 962 459.3 962.1 450.3 962.3 479.3 962.4 465.8 962.6 468.4 962.7 468.4 962.9 470.7 963 463.6 963.1 439.9 963.3 476.8 963.4 474 963.6 464.2 963.7 465.3 963.9 470 964 448.5 964.1 473.6 964.3 456.3 964.4 449.1 964.6 456.8 964.7 473.3 964.8 454.8 965 473.8 965.1 479.5 965.3 464.1 965.4 460.6 965.5 463.7 965.7 471.3 965.8 475.4 965.9 468.6 966.1 469.6 966.2 449.5 966.4 452.9 966.5 456.7 966.6 474.2 966.8 458.3 966.9 466.8 967 443.4 967.2 448.6 967.3 457.2 967.4 470.9 967.6 471.8 967.7 471.1 967.9 458 968 465.2 968.1 463.5 968.3 463.5 968.4 451.8 968.5 479.5 968.7 455 968.8 479.5 968.9 479.5 969 444.5 969.2 463.3 969.3 479 969.4 479.5 969.6 463.1 969.7 457.4 969.8 455.4 970 479.5 970.1 455.5 970.2 467.5 970.4 452.9 970.5 465.5 970.6 479.5 970.7 452.5 970.9 479.1 971 465.1 971.1 479.5 971.3 472.5 971.4 456.2 971.5 479.5 971.6 464.3 971.8 445.7 971.9 440.8 972 464.5 972.2 463.2 972.3 458.6 972.4 452.9 972.5 459.9 972.7 459 972.8 479.5 972.9 439.5 973 474.9 973.2 479.5 973.3 452.1 973.4 479.5 973.5 473.1 973.7 479.5 973.8 458.2 973.9 460.8 974 461.5 974.2 479.5 974.3 468 974.4 460.5 974.5 462.6 974.6 457.8 974.8 448 974.9 451.2 975 479.5 975.1 458.1 975.3 479.5 975.4 456.9 975.5 457.5 975.6 465.3 975.7 454.9 975.9 460.9 976 479.5 976.1 479.5 976.2 478.7 976.3 469.6 976.5 479.5 976.6 479.5 976.7 466.6 976.8 473.4 976.9 448.2 977.1 474.1 977.2 463.3 977.3 475.1 977.4 470.2 977.5 458.2 977.6 448.1 977.8 479.5 977.9 452.5 978 464 978.1 460 978.2 458.6 978.3 474.4 978.5 479.5 978.6 457.4 978.7 470.7 978.8 458.7 978.9 466.9 979 461.6 979.2 454.1 979.3 453.9 979.4 455.6 979.5 479.5 979.6 464.9 979.7 456.1 979.8 479.5 980 479.5 980.1 463.4 980.2 453.1 980.3 455.1 980.4 450.8 980.5 460 980.6 450.8 980.8 456.7 980.9 457.4 981 467.4 981.1 479.5 981.2 475 981.3 462.2 981.4 462.3 981.5 465.8 981.7 461.1 981.8 459.9 981.9 449.1 982 458 982.1 479.5 982.2 452.5 982.3 465.1 982.4 469.7 982.5 479.5 982.7 456 982.8 457.8 982.9 457.1 983 461.8 983.1 463.3 983.2 479.5 983.3 479.5 983.4 479.5 983.5 445.5 983.6 446.7 983.7 473.1 983.9 479.5 984 464.2 984.1 468.1 984.2 436.2 984.3 461.6 984.4 479.5 984.5 479.5 984.6 479.5 984.7 479.5 984.8 457.1 984.9 451.8 985 453.7 985.1 465.8 985.2 471.9 985.4 479.5 985.5 473.7 985.6 470.4 985.7 475.9 985.8 463.7 985.9 466.8 986 447.5 986.1 477 986.2 456.6 986.3 479.5 986.4 470.4 986.5 458.9 986.6 452.7 986.7 457.2 986.8 470 986.9 472.6 987 452 987.1 449.8 987.2 465.9 987.3 468 987.4 461.5 987.5 456.3 987.7 468.6 987.8 443.6 987.9 458.9 988 463.8 988.1 479.5 988.2 470.3 988.3 479.5 988.4 464.3 988.5 456.7 988.6 457.1 988.7 479.5 988.8 472.9 988.9 459.1 989 445.6 989.1 465.1 989.2 471.6 989.3 462.6 989.4 457.5 989.5 471.3 989.6 479.5 989.7 456.4 989.8 447 989.9 460 990 462.6 990.1 472 990.2 455.5 990.3 477.9 990.4 474.6 990.5 465.3 990.6 455.7 990.7 479.5 990.8 459.2 990.9 479.5 991 456.6 991.1 456.3 991.2 475.8 991.3 458.7 991.4 479.5 991.5 465 991.6 455.1 991.7 456.4 991.8 462.5 991.9 471.3 992 479.5 992 453.5 992.1 461.8 992.2 456 992.3 479.5 992.4 453.3 992.5 448.6 992.6 449.2 992.7 461.8 992.8 479.5 992.9 479.5 993 474.4 993.1 479.5 993.2 479.5 993.3 459.8 993.4 455 993.5 479.5 993.6 475.1 993.7 446.9 993.8 471.2 993.9 461.4 994 461.2 994.1 459.9 994.2 454.5 994.2 440.8 994.3 458.3 994.4 460.5 994.5 479.5 994.6 452.6 994.7 479.5 994.8 455.9 994.9 460.7 995 479.5 995.1 479.5 995.2 463.1 995.3 448.4 995.4 464.4 995.5 461.2 995.6 479.5 995.6 455.4 995.7 460.9 995.8 479.5 995.9 446.7 996 462.4 996.1 479 996.2 476.2 996.3 447.7 996.4 447.2 996.5 449.4 996.6 479.5 996.7 457.6 996.7 475.2 996.8 479.5 996.9 460.2 997 458.1 997.1 479.5 997.2 469.4 997.3 457.7 997.4 473.6 997.5 459.5 997.6 458.2 997.7 441.4 997.7 475.6 997.8 479.5 997.9 470.1 998 479.5 998.1 446.1 998.2 456.8 998.3 464.5 998.4 479.5 998.5 479.5 998.5 461.7 998.6 457.4 998.7 463 998.8 465.1 998.9 479.5 999 455 999.1 478.4 999.2 474.8 999.3 479.5 999.3 476.6 999.4 469.1 999.5 459.9 999.6 459.6 999.7 460.9 999.8 477.2 999.9 450.5 1000 455.6 1000 475.5 1000.1 457.3 1000.2 449.6 1000.3 447.2 1000.4 467.1 1000.5 459.8 1000.6 479.5 1000.6 479.5 1000.7 479.5 1000.8 457.9 1000.9 450.8 1001 451.4 1001.1 465.3 1001.2 473.4 1001.3 463.6 1001.3 456.9 1001.4 462.7 1001.5 469.6 1001.6 471.8 1001.7 475.3 1001.8 479.5 1001.8 471.4 1001.9 452.6 1002 479.5 1002.1 458.8 1002.2 467.6 1002.3 461.3 1002.4 474.8 1002.4 455.7 1002.5 457.3 1002.6 457.3 1002.7 454 1002.8 479.5 1002.9 468 1002.9 459.9 1003 462 1003.1 479.5 1003.2 465.6 1003.3 456.8 1003.4 478.9 1003.4 470.9 1003.5 479.5 1003.6 451.7 1003.7 464.5 1003.8 479.5 1003.9 479.5 1003.9 479.5 1004 447.8 1004.1 458.9 1004.2 452.5 1004.3 455.4 1004.4 479.5 1004.4 468.2 1004.5 479.5 1004.6 461.3 1004.7 479.5 1004.8 463.7 1004.8 457.8 1004.9 477 1005 479.5 1005.1 451.9 1005.2 468.7 1005.3 469.6 1005.3 456.4 1005.4 461.2 1005.5 453.5 1005.6 455.9 1005.7 457.6 1005.7 468.9 1005.8 470.9 1005.9 455.9 1006 444.1 1006.1 459.9 1006.1 472 1006.2 455.2 1006.3 459.5 1006.4 455.9 1006.5 478.1 1006.5 467 1006.6 449.6 1006.7 451.7 1006.8 462.1 1006.9 467.1 1006.9 470.4 1007 451.2 1007.1 454.4 1007.2 472.8 1007.3 462.5 1007.3 458.6 1007.4 459.3 1007.5 479.5 1007.6 459.5 1007.7 467.7 1007.7 460.9 1007.8 462.7 1007.9 479.5 1008 479.5 1008 461.1 1008.1 455.7 1008.2 474.4 1008.3 455.9 1008.4 442.5 1008.4 479.5 1008.5 463 1008.6 479.5 1008.7 462.4 1008.7 479.5 1008.8 464.2 1008.9 454.4 1009 444.8 1009.1 467.2 1009.1 470.5 1009.2 479.5 1009.3 451.1 1009.4 469.8 1009.4 461.3 1009.5 465.6 1009.6 453.7 1009.7 458.6 1009.8 466.1 1009.8 479.5 1009.9 452.1 1010 465.1 1010.1 478.7 1010.1 479.5 1010.2 455.7 1010.3 452.9 1010.4 479.5 1010.5 479.5 1010.5 464.8 1010.6 448.9 1010.7 479.5 1010.8 461.8 1010.8 479.5 1010.9 469.6 1011 479.5 1011.1 454.3 1011.1 477.5 1011.2 456.5 1011.3 462.3 1011.4 479.5 1011.5 479.5 1011.5 455.1 1011.6 456.4 1011.7 462.2 1011.8 465.9 1011.8 461.6 1011.9 452.7 1012 457.3 1012.1 474.1 1012.2 479.5 1012.2 447.9 1012.3 467.5 1012.4 475.8 1012.5 447.6 1012.5 479.5 1012.6 452.4 1012.7 468.8 1012.8 467 1012.9 469.8 1012.9 459.2 1013 462.7 1013.1 468.2 1013.2 462.9 1013.2 471.1 1013.3 463.6 1013.4 463.3 1013.5 446 1013.5 469.5 1013.6 464.9 1013.7 456.9 1013.8 476.1 1013.9 477 1013.9 463.9 1014 454.9 1014.1 464.4 1014.2 451.9 1014.2 452.9 1014.3 463 1014.4 451.1 1014.5 463.4 1014.6 465.6 1014.6 447.8 1014.7 470.1 1014.8 450.6 1014.9 474.4 1014.9 476.8 1015 465.6 1015.1 448.8 1015.2 465.4 1015.3 461.3 1015.3 479.5 1015.4 453.1 1015.5 479.5 1015.6 479.5 1015.6 474.3 1015.7 479.2 1015.8 455.3 1015.9 479.5 1016 464.9 1016 479.5 1016.1 479.5 1016.2 454.3 1016.3 477.4 1016.3 479.5 1016.4 449.5 1016.5 460.5 1016.6 475.6 1016.6 454 1016.7 479.5 1016.8 458.1 1016.9 479.2 1017 453.4 1017 465.2 1017.1 479.5 1017.2 455.8 1017.3 457.6 1017.3 465.4 1017.4 459.4 1017.5 447.3 1017.6 454.9 1017.7 454.1 1017.7 479.5 1017.8 471.8 1017.9 479.5 1018 454.3 1018 477.2 1018.1 452.1 1018.2 466.2 1018.3 470 1018.4 460.7 1018.4 479.5 1018.5 467 1018.6 467.9 1018.7 479.5 1018.7 451.6 1018.8 479.5 1018.9 469.7 1019 461.7 1019 477.9 1019.1 457.6 1019.2 479.5 1019.3 467.7 1019.4 460.7 1019.4 475.9 1019.5 463.2 1019.6 454.6 1019.7 474.8 1019.7 448.2 1019.8 479.4 1019.9 457.3 1020 470.1 1020.1 479.5 1020.1 468 1020.2 471.1 1020.3 459.1 1020.4 439.8 1020.4 446.9 1020.5 453.5 1020.6 469.1 1020.7 462.9 1020.8 465.5 1020.8 479.5 1020.9 452.8 1021 456.3 1021.1 470.6 1021.1 445.5 1021.2 440.4 1021.3 460.4 1021.4 451.6 1021.4 460.5 1021.5 456.2 1021.6 467.9 1021.7 468.1 1021.8 455.5 1021.8 469.4 1021.9 464.2 1022 452.8 1022.1 479.5 1022.1 456.8 1022.2 453.4 1022.3 451 1022.4 469.9 1022.5 479.5 1022.5 476.8 1022.6 461.8 1022.7 457.5 1022.8 443.7 1022.8 470.2 1022.9 467.1 1023 460.2 1023.1 470.2 1023.2 463.1 1023.2 479.5 1023.3 474.1 1023.4 457 1023.5 479.5 1023.5 447.7 1023.6 466 1023.7 461.9 1023.8 456.6 1023.8 448.8 1023.9 476.6 1024 443.8 1024.1 466.6 1024.2 479.5 1024.2 453.1 1024.3 455.3 1024.4 468.7 1024.5 465.1 1024.5 470 1024.6 478.7 1024.7 454.3 1024.8 458.9 1024.9 458.6 1024.9 448 1025 479.5 1025.1 476.8 1025.2 473.2 1025.2 442.1 1025.3 479.5 1025.4 474.7 1025.5 463.7 1025.6 474.5 1025.6 463.3 1025.7 456.1 1025.8 451.4 1025.9 456.3 1025.9 447.2 1026 459.6 1026.1 474.9 1026.2 472.2 1026.2 479.5 1026.3 473 1026.4 457.4 1026.5 466.6 1026.6 462.8 1026.6 477.1 1026.7 465.6 1026.8 457.4 1026.9 469.9 1026.9 479.5 1027 455.8 1027.1 479.5 1027.2 444.2 1027.3 457.2 1027.3 456.4 1027.4 474.5 1027.5 479.5 1027.6 474.6 1027.6 459.3 1027.7 479.5 1027.8 459.4 1027.9 456.5 1028 479.5 1028 469.4 1028.1 472 1028.2 470.8 1028.3 479.5 1028.3 463.8 1028.4 479.5 1028.5 472.2 1028.6 479.5 1028.6 462.7 1028.7 473.5 1028.8 467.2 1028.9 458.7 1029 455.5 1029 469.1 1029.1 449.8 1029.2 479.5 1029.3 453 1029.3 445.8 1029.4 451.3 1029.5 479.5 1029.6 459.8 1029.7 452.9 1029.7 446 1029.8 447.3 1029.9 472 1030 469.5 1030 472.2 1030.1 474.1 1030.2 449 1030.3 467.8 1030.4 460.4 1030.4 478.8 1030.5 479 1030.6 479.5 1030.7 449 1030.7 479.5 1030.8 479.5 1030.9 479.5 1031 451.3 1031.1 455.2 1031.1 451.5 1031.2 446.6 1031.3 479.5 1031.4 478.4 1031.4 469.5 1031.5 479.3 1031.6 469.3 1031.7 457.9 1031.7 450.9 1031.8 450.8 1031.9 475.1 1032 455.2 1032.1 458.9 1032.1 462.2 1032.2 445 1032.3 456.9 1032.4 457.7 1032.4 472.9 1032.5 460.4 1032.6 458.9 1032.7 479.5 1032.8 464.7 1032.8 479.5 1032.9 468.8 1033 446.2 1033.1 461.8 1033.1 462.5 1033.2 475.9 1033.3 459.7 1033.4 472.4 1033.5 465.8 1033.5 455.5 1033.6 479.5 1033.7 450.4 1033.8 478.9 1033.8 453.8 1033.9 438.7 1034 455 1034.1 475.3 1034.1 479.5 1034.2 441 1034.3 464.2 1034.4 464.3 1034.5 477.3 1034.5 454.3 1034.6 464.4 1034.7 459.7 1034.8 479.5 1034.8 456.9 1034.9 479.5 1035 457.7 1035.1 455.4 1035.2 472.1 1035.2 464.5 1035.3 451.3 1035.4 469.4 1035.5 449.8 1035.5 476.7 1035.6 472 1035.7 476.6 1035.8 469 1035.9 459.9 1035.9 461.3 1036 461.1 1036.1 479.5 1036.2 450 1036.2 479.5 1036.3 445.4 1036.4 455.1 1036.5 457 1036.5 479.5 1036.6 464.5 1036.7 460.6 1036.8 479.5 1036.9 456 1036.9 463.2 1037 465.5 1037.1 474.7 1037.2 474.7 1037.2 469.7 1037.3 459.6 1037.4 459 1037.5 453.1 1037.6 479.5 1037.6 470.4 1037.7 474.1 1037.8 453.7 1037.9 462.4 1037.9 475.8 1038 467.1 1038.1 451.9 1038.2 463.2 1038.3 479.5 1038.3 456.1 1038.4 454.5 1038.5 458.1 1038.6 472.1 1038.6 479.5 1038.7 453.1 1038.8 453.1 1038.9 456.4 1038.9 458.9 1039 465.1 1039.1 453.3 1039.2 458.9 1039.3 454.3 1039.3 479.5 1039.4 473.3 1039.5 450.7 1039.6 479.5 1039.6 450.7 1039.7 460.7 1039.8 479.5 1039.9 477 1040 473.5 1040 462.2 1040.1 454.6 1040.2 469.3 1040.3 450.9 1040.3 454.9 1040.4 460.8 1040.5 446.2 1040.6 461.1 1040.7 476.7 1040.7 471.6 1040.8 464.3 1040.9 469 1041 463.1 1041 452.5 1041.1 467.9 1041.2 461.3 1041.3 473.9 1041.3 479.5 1041.4 462 1041.5 466.8 1041.6 474.3 1041.7 461.8 1041.7 455.6 1041.8 472.9 1041.9 479.5 1042 475.7 1042 471.9 1042.1 479.5 1042.2 470.9 1042.3 469.4 1042.4 462.8 1042.4 458.3 1042.5 468.8 1042.6 450.4 1042.7 461.7 1042.7 476.1 1042.8 472.5 1042.9 468.9 1043 456.3 1043.1 461.8 1043.1 462.8 1043.2 468.5 1043.3 461.3 1043.4 470.7 1043.4 479.5 1043.5 454 1043.6 469.8 1043.7 475.8 1043.7 460.7 1043.8 463.9 1043.9 479.5 1044 446.5 1044.1 465.7 1044.1 453.1 1044.2 476 1044.3 479.5 1044.4 464.8 1044.4 450.5 1044.5 466.7 1044.6 465.6 1044.7 472.6 1044.8 464.6 1044.8 469.2 1044.9 479.1 1045 464.9 1045.1 461.3 1045.1 479.5 1045.2 454.9 1045.3 471 1045.4 460.7 1045.5 474.9 1045.5 451.5 1045.6 479.5 1045.7 459.6 1045.8 447.9 1045.8 457 1045.9 460.9 1046 443.2 1046.1 461.5 1046.1 461.6 1046.2 471.6 1046.3 459.4 1046.4 456.7 1046.5 455.3 1046.5 473.7 1046.6 479.5 1046.7 465 1046.8 455.1 1046.8 477.2 1046.9 460.7 1047 454.9 1047.1 451.7 1047.2 475.6 1047.2 477.7 1047.3 468.9 1047.4 463.1 1047.5 466.2 1047.5 455.3 1047.6 479.5 1047.7 459.4 1047.8 469 1047.9 478.3 1047.9 478.1 1048 463 1048.1 457.6 1048.2 465.7 1048.2 451.5 1048.3 479.3 1048.4 459.4 1048.5 479.5 1048.6 456.7 1048.6 460.1 1048.7 456.2 1048.8 461.7 1048.9 453.9 1048.9 439.5 1049 472.6 1049.1 457.1 1049.2 455.9 1049.2 457.8 1049.3 463.3 1049.4 461.7 1049.5 468.9 1049.6 469.8 1049.6 459.6 1049.7 479.5 1049.8 479.5 1049.9 447.8 1049.9 478.9 1050 479.5 1050.1 476 1050.2 452.1 1050.3 479.1 1050.3 468.7 1050.4 443.4 1050.5 442.7 1050.6 479.5 1050.6 469.6 1050.7 456 1050.8 450.3 1050.9 452.1 1051 455.5 1051 475.5 1051.1 459.1 1051.2 452.5 1051.3 479.5 1051.3 476.4 1051.4 453.1 1051.5 479.5 1051.6 467.7 1051.6 475.7 1051.7 470.1 1051.8 479.5 1051.9 476.1 1052 479.5 1052 454.2 1052.1 471.2 1052.2 464.9 1052.3 473.5 1052.3 461.9 1052.4 479.5 1052.5 465.8 1052.6 456.4 1052.7 455.4 1052.7 451.9 1052.8 463.7 1052.9 447.8 1053 462.8 1053 452.1 1053.1 463.6 1053.2 463.8 1053.3 465.2 1053.4 479.5 1053.4 441.2 1053.5 479.5 1053.6 462.8 1053.7 466 1053.7 469.9 1053.8 479.5 1053.9 459.9 1054 461.2 1054 479.5 1054.1 448.8 1054.2 468.7 1054.3 468.7 1054.4 445.1 1054.4 467.7 1054.5 470.6 1054.6 479.5 1054.7 458.5 1054.7 479.5 1054.8 464.2 1054.9 463.3 1055 479.5 1055.1 445.7 1055.1 472.3 1055.2 468.2 1055.3 458.7 1055.4 479.5 1055.4 459.5 1055.5 463 1055.6 464.6 1055.7 475 1055.8 454.5 1055.8 461.7 1055.9 461.3 1056 465.6 1056.1 478.5 1056.1 457.2 1056.2 478.6 1056.3 460.7 1056.4 463.9 1056.4 456.5 1056.5 464 1056.6 479.5 1056.7 469.4 1056.8 476.2 1056.8 458.4 1056.9 458 1057 457.4 1057.1 466.7 1057.1 468.6 1057.2 475.7 1057.3 446.2 1057.4 472.4 1057.5 479.5 1057.5 465.2 1057.6 446.9 1057.7 457.4 1057.8 440.9 1057.8 453.7 1057.9 479.5 1058 467.5 1058.1 469.5 1058.2 476 1058.2 479.5 1058.3 467.6 1058.4 467.8 1058.5 468.2 1058.5 471.1 1058.6 467 1058.7 470.4 1058.8 454.5 1058.8 469.8 1058.9 462.3 1059 474.4 1059.1 450 1059.2 453.3 1059.2 445.8 1059.3 475.1 1059.4 479.5 1059.5 469.3 1059.5 459.5 1059.6 478.1 1059.7 475.8 1059.8 465.7 1059.9 456 1059.9 457.4 1060 461.1 1060.1 457.9 1060.2 461.4 1060.2 468.7 1060.3 479.5 1060.4 447.2 1060.5 465.9 1060.6 446 1060.6 450.8 1060.7 477.2 1060.8 466.2 1060.9 479.5 1060.9 461.8 1061 442.8 1061.1 460 1061.2 466.7 1061.2 479.5 1061.3 479.5 1061.4 462.7 1061.5 460.7 1061.6 449.9 1061.6 468.7 1061.7 454.3 1061.8 452 1061.9 442.9 1061.9 440.1 1062 470.3 1062.1 450.7 1062.2 479.5 1062.3 449.1 1062.3 479.5 1062.4 451 1062.5 443.3 1062.6 471.9 1062.6 455.2 1062.7 472.6 1062.8 453.3 1062.9 446.6 1063 474.7 1063 471.6 1063.1 479.5 1063.2 472.3 1063.3 448.7 1063.3 467.9 1063.4 471.3 1063.5 462 1063.6 479.5 1063.7 455.5 1063.7 479.5 1063.8 471.6 1063.9 441.9 1064 442.6 1064 468.7 1064.1 477.3 1064.2 448.4 1064.3 457.2 1064.3 472.2 1064.4 452.3 1064.5 479.5 1064.6 462.7 1064.7 447.1 1064.7 458.9 1064.8 465.7 1064.9 461.1 1065 469.7 1065 451.4 1065.1 475.9 1065.2 458.7 1065.3 468.3 1065.4 467.7 1065.4 460.4 1065.5 459.4 1065.6 475.1 1065.7 479.5 1065.7 475 1065.8 465.3 1065.9 456.4 1066 447 1066.1 479.5 1066.1 470.7 1066.2 477.8 1066.3 457.6 1066.4 466.6 1066.4 479.5 1066.5 478 1066.6 466.4 1066.7 456.9 1066.7 460.6 1066.8 479.5 1066.9 459 1067 469.8 1067.1 466.4 1067.1 479.5 1067.2 476.3 1067.3 456 1067.4 437.4 1067.4 455.3 1067.5 460.3 1067.6 465.8 1067.7 476.8 1067.8 479.5 1067.8 445.4 1067.9 478 1068 476.5 1068.1 479.5 1068.1 465.2 1068.2 455.6 1068.3 479.4 1068.4 476.1 1068.5 469.6 1068.5 479.5 1068.6 457.8 1068.7 448.2 1068.8 464.5 1068.8 475.5 1068.9 453 1069 472.7 1069.1 479.5 1069.1 454.2 1069.2 466.4 1069.3 469.2 1069.4 461.5 1069.5 453.2 1069.5 454.8 1069.6 472.7 1069.7 475 1069.8 461.2 1069.8 448.2 1069.9 475.9 1070 473.8 1070.1 454 1070.2 465.2 1070.2 479.5 1070.3 479.5 1070.4 463.2 1070.5 461.7 1070.5 465.6 1070.6 452.4 1070.7 452.5 1070.8 452.1 1070.9 470.1 1070.9 458.1 1071 464.6 1071.1 459.3 1071.2 463 1071.2 450.8 1071.3 445.2 1071.4 479.5 1071.5 458.4 1071.5 448.9 1071.6 467.1 1071.7 474.5 1071.8 451 1071.9 465.7 1071.9 457.4 1072 462.9 1072.1 442.6 1072.2 444.1 1072.2 479.5 1072.3 479.5 1072.4 461.8 1072.5 464.5 1072.6 454.7 1072.6 473.9 1072.7 459.8 1072.8 479.5 1072.9 473.2 1072.9 476.4 1073 479.5 1073.1 454.4 1073.2 444.4 1073.3 452.5 1073.3 451.8 1073.4 447.5 1073.5 445.5 1073.6 464.1 1073.6 479.5 1073.7 460.7 1073.8 479.5 1073.9 479.5 1073.9 446.3 1074 465.5 1074.1 458.8 1074.2 449.2 1074.3 479.5 1074.3 454.3 1074.4 464.2 1074.5 467.1 1074.6 479.5 1074.6 468.2 1074.7 458.6 1074.8 460.3 1074.9 450.8 1075 479.5 1075 479.5 1075.1 453.1 1075.2 444.2 1075.3 454.2 1075.3 457.2 1075.4 479.5 1075.5 479.5 1075.6 477.4 1075.7 444.9 1075.7 474 1075.8 469.9 1075.9 467.1 1076 479.5 1076 445.5 1076.1 450.1 1076.2 472.1 1076.3 479.5 1076.3 468.4 1076.4 455.4 1076.5 464.9 1076.6 472.2 1076.7 448.3 1076.7 456.2 1076.8 454 1076.9 449.1 1077 461.1 1077 450.9 1077.1 453.4 1077.2 449.9 1077.3 468.3 1077.4 440.6 1077.4 470.1 1077.5 451.8 1077.6 443.7 1077.7 479.5 1077.7 452.7 1077.8 479.5 1077.9 479.5 1078 479.5 1078.1 449.7 1078.1 459.9 1078.2 447.7 1078.3 479.5 1078.4 477.5 1078.4 466.1 1078.5 460 1078.6 456.5 1078.7 476 1078.8 460.8 1078.8 466.1 1078.9 449.7 1079 452.6 1079.1 445.2 1079.1 469.7 1079.2 463.3 1079.3 449.7 1079.4 479.5 1079.4 454 1079.5 458.6 1079.6 450.1 1079.7 454.2 1079.8 477.1 1079.8 456.2 1079.9 450.6 1080 461.1 1080.1 455.6 1080.1 479.5 1080.2 448.3 1080.3 479.5 1080.4 445.1 1080.5 479.5 1080.5 467.5 1080.6 452.1 1080.7 460.6 1080.8 454.5 1080.8 453.6 1080.9 451.7 1081 457 1081.1 479.5 1081.2 479.5 1081.2 479.5 1081.3 447.4 1081.4 454.6 1081.5 479.5 1081.5 445 1081.6 470 1081.7 454.7 1081.8 479.5 1081.8 440.7 1081.9 474.6 1082 456.1 1082.1 449.2 1082.2 436 1082.2 476.3 1082.3 462 1082.4 450.9 1082.5 459 1082.5 479.5 1082.6 452.1 1082.7 463.5 1082.8 449 1082.9 450.7 1082.9 472.2 1083 469.2 1083.1 451.3 1083.2 446.2 1083.2 446.6 1083.3 464.8 1083.4 460.8 1083.5 453.8 1083.6 451.5 1083.6 464.9 1083.7 468.9 1083.8 474.7 1083.9 463.8 1083.9 451.4 1084 445.3 1084.1 470.1 1084.2 458 1084.2 469.5 1084.3 444.5 1084.4 474.5 1084.5 455.6 1084.6 476.8 1084.6 478.7 1084.7 460.6 1084.8 440.3 1084.9 479.5 1084.9 460 1085 479.3 1085.1 453.4 1085.2 450.6 1085.3 475.9 1085.3 456.5 1085.4 449.8 1085.5 456.6 1085.6 464 1085.6 437.3 1085.7 461.4 1085.8 458.9 1085.9 461.2 1086 447.9 1086 469 1086.1 474.7 1086.2 478.6 1086.3 455 1086.3 468.8 1086.4 456.9 1086.5 470.7 1086.6 444.7 1086.6 479.2 1086.7 479.5 1086.8 460.4 1086.9 461 1087 461.6 1087 461.8 1087.1 440.9 1087.2 479.5 1087.3 451.7 1087.3 450.3 1087.4 446.9 1087.5 452.6 1087.6 474.6 1087.7 442 1087.7 446.6 1087.8 468 1087.9 450.7 1088 440.3 1088 463.9 1088.1 463.1 1088.2 461.2 1088.3 468.1 1088.4 446.8 1088.4 478.7 1088.5 468.8 1088.6 443.3 1088.7 447.7 1088.7 460.2 1088.8 460.4 1088.9 453.4 1089 447.6 1089 457.3 1089.1 448.3 1089.2 463.5 1089.3 477.8 1089.4 448.7 1089.4 462.8 1089.5 470.2 1089.6 449.3 1089.7 475 1089.7 479.5 1089.8 456.7 1089.9 457.7 1090 476 1090.1 461.1 1090.1 456.9 1090.2 479.5 1090.3 471.7 1090.4 455.1 1090.4 451.9 1090.5 454.9 1090.6 458.1 1090.7 479.5 1090.8 473.4 1090.8 479.5 1090.9 474.1 1091 476.5 1091.1 443.6 1091.1 460.7 1091.2 479.5 1091.3 479.5 1091.4 452.1 1091.4 457.6 1091.5 464.8 1091.6 455.7 1091.7 461.1 1091.8 444.6 1091.8 457.9 1091.9 460.2 1092 440.3 1092.1 448 1092.1 479.5 1092.2 471.5 1092.3 479.5 1092.4 464.7 1092.4 473.5 1092.5 479.5 1092.6 479.5 1092.7 441.8 1092.7 465 1092.8 452.5 1092.9 466.5 1093 452.7 1093 461.3 1093.1 479.5 1093.2 464.1 1093.3 451.9 1093.3 460.5 1093.4 457.7 1093.5 479.5 1093.6 453.1 1093.6 453.7 1093.7 465.1 1093.8 447 1093.9 463.1 1093.9 479.5 1094 460.2 1094.1 452.4 1094.2 458.6 1094.2 460.9 1094.3 448.1 1094.4 447.1 1094.4 447.4 1094.5 453.2 1094.6 456.7 1094.7 453 1094.7 451.5 1094.8 445.3 1094.9 461.2 1095 475.4 1095 463.5 1095.1 462 1095.2 465.1 1095.3 450 1095.3 467.7 1095.4 458.3 1095.5 461.2 1095.5 463.6 1095.6 458.6 1095.7 453.6 1095.8 451.4 1095.8 450.7 1095.9 460 1096 455.8 1096.1 462.5 1096.1 438.3 1096.2 454.8 1096.3 477.1 1096.3 451.2 1096.4 461.4 1096.5 459.2 1096.6 452.7 1096.6 479.5 1096.7 453 1096.8 470.7 1096.8 448.3 1096.9 443.8 1097 477.9 1097.1 457.5 1097.1 443.5 1097.2 455.8 1097.3 457.4 1097.3 468.7 1097.4 446.1 1097.5 450.6 1097.5 479.5 1097.6 468.8 1097.7 448 1097.8 454.2 1097.8 454.6 1097.9 465.8 1098 463.4 1098 475.9 1098.1 473.7 1098.2 459.9 1098.3 468.7 1098.3 469 1098.4 469.8 1098.5 458.4 1098.5 471.3 1098.6 467.2 1098.7 479.5 1098.7 446.7 1098.8 477.6 1098.9 435.6 1098.9 470.1 1099 462.1 1099.1 459.1 1099.2 479.5 1099.2 461.6 1099.3 456.5 1099.4 471.1 1099.4 477.7 1099.5 462.9 1099.6 455.3 1099.6 457.6 1099.7 457.7 1099.8 467.8 1099.8 452.5 1099.9 455.6 1100 460.9 1100 455.4 1100.1 453.4 1100.2 471.2 1100.3 475.6 1100.3 459 1100.4 457.2 1100.5 448.8 1100.5 452.8 1100.6 447.3 1100.7 461.6 1100.7 461.8 1100.8 444.6 1100.9 479.5 1100.9 453.4 1101 475 1101.1 474.6 1101.1 479.5 1101.2 449.4 1101.3 456.6 1101.3 479.5 1101.4 437.4 1101.5 442 1101.5 461.1 1101.6 458.8 1101.7 479.5 1101.7 470.2 1101.8 460.2 1101.9 479.5 1101.9 459.4 1102 459.4 1102.1 465.8 1102.1 455.3 1102.2 454.3 1102.3 462.1 1102.3 454.1 1102.4 479.5 1102.5 465.3 1102.5 459.6 1102.6 445 1102.7 454.8 1102.7 455.6 1102.8 460.8 1102.9 461.3 1102.9 478 1103 479.5 1103.1 458.3 1103.1 456.8 1103.2 463.1 1103.3 479.5 1103.3 453.7 1103.4 459.7 1103.5 472.7 1103.5 448 1103.6 452.9 1103.6 479.5 1103.7 473.4 1103.8 459 1103.8 445.4 1103.9 479.5 1104 465.8 1104 472.9 1104.1 479.5 1104.2 478.8 1104.2 456 1104.3 447.3 1104.4 451.9 1104.4 458.9 1104.5 458.7 1104.6 448.5 1104.6 448.3 1104.7 463.2 1104.7 462.1 1104.8 453.9 1104.9 479.5 1104.9 463.4 1105 441.1 1105.1 455.6 1105.1 470.7 1105.2 452.4 1105.3 465.6 1105.3 434.7 1105.4 452.3 1105.4 474.4 1105.5 461.4 1105.6 464.6 1105.6 448.7 1105.7 458.3 1105.8 460.2 1105.8 451 1105.9 463.7 1106 459.4 1106 479.5 1106.1 460.9 1106.1 455.5 1106.2 445.6 1106.3 447.1 1106.3 468.9 1106.4 444.9 1106.5 444.6 1106.5 447.6 1106.6 459.1 1106.6 472.8 1106.7 462.3 1106.8 471.7 1106.8 442.4 1106.9 437.2 1107 469.5 1107 452.7 1107.1 466.6 1107.1 453.6 1107.2 447.5 1107.3 450.8 1107.3 444.5 1107.4 479.5 1107.5 461 1107.5 453.4 1107.6 456.6 1107.6 454.5 1107.7 441.8 1107.8 478.6 1107.8 461 1107.9 479.5 1107.9 456.2 1108 462.4 1108.1 450.2 1108.1 440.9 1108.2 479.5 1108.3 475.1 1108.3 452.3 1108.4 479.5 1108.4 472.1 1108.5 451.9 1108.6 461.7 1108.6 479.5 1108.7 457.9 1108.7 479.5 1108.8 449.9 1108.9 454.5 1108.9 466.5 1109 449.1 1109 452 1109.1 476.9 1109.2 457.5 1109.2 470.5 1109.3 449.9 1109.3 447.4 1109.4 453.5 1109.5 447.9 1109.5 479.5 1109.6 451.4 1109.6 460.1 1109.7 444.9 1109.8 459.1 1109.8 454.3 1109.9 454.8 1109.9 442.3 1110 445.3 1110.1 472.6 1110.1 453.2 1110.2 449.8 1110.2 447.9 1110.3 451 1110.4 449.5 1110.4 439.8 1110.5 463.9 1110.5 452.8 1110.6 446.6 1110.7 465.7 1110.7 443.7 1110.8 450.5 1110.8 473.2 1110.9 445.4 1111 456 1111 473.3 1111.1 471.1 1111.1 446.6 1111.2 453.1 1111.2 466.4 1111.3 453.9 1111.4 479.5 1111.4 448.4 1111.5 479.5 1111.5 457.9 1111.6 449 1111.7 456.2 1111.7 445.4 1111.8 465.6 1111.8 450.1 1111.9 479.2 1111.9 460.7 1112 453.5 1112.1 449.6 1112.1 461.5 1112.2 448.5 1112.2 476.2 1112.3 445 1112.4 458.1 1112.4 459.1 1112.5 450.4 1112.5 468.9 1112.6 454 1112.6 463.4 1112.7 459.9 1112.8 451.6 1112.8 454.1 1112.9 443.1 1112.9 447.1 1113 474.2 1113 451.9 1113.1 463.5 1113.2 444.3 1113.2 459.7 1113.3 453.1 1113.3 457.5 1113.4 451.1 1113.4 441.9 1113.5 451.6 1113.6 448.8 1113.6 445 1113.7 465.9 1113.7 450.6 1113.8 454.4 1113.8 479.5 1113.9 468.9 1114 477.1 1114 475 1114.1 445.2 1114.1 450.4 1114.2 438.8 1114.2 464.1 1114.3 463.4 1114.4 452.7 1114.4 454.6 1114.5 463.2 1114.5 465 1114.6 449.4 1114.6 473.7 1114.7 452.7 1114.7 462 1114.8 447.1 1114.9 444.4 1114.9 479.5 1115 466.6 1115 465.5 1115.1 439.8 1115.1 439.8 1115.2 446.3 1115.3 447.6 1115.3 451.1 1115.4 453.5 1115.4 439.7 1115.5 451.3 1115.5 462.2 1115.6 446.9 1115.6 473 1115.7 459.7 1115.8 465.6 1115.8 449.5 1115.9 455.1 1115.9 464.1 1116 452.5 1116 430.9 1116.1 472.6 1116.1 468.7 1116.2 450.5 1116.2 439.9 1116.3 474.1 1116.4 461 1116.4 440.2 1116.5 449.1 1116.5 444 1116.6 469.6 1116.6 447.9 1116.7 479.5 1116.7 467.2 1116.8 442.7 1116.8 464.5 1116.9 453.7 1117 467 1117 472 1117.1 450.2 1117.1 442.9 1117.2 479.5 1117.2 454.6 1117.3 479.5 1117.3 464.3 1117.4 466.5 1117.4 472.1 1117.5 461.6 1117.6 455.5 1117.6 440.6 1117.7 464.6 1117.7 454.7 1117.8 457.4 1117.8 479.5 1117.9 444.6 1117.9 467.7 1118 439.8 1118 464.7 1118.1 470.3 1118.1 449.4 1118.2 458.5 1118.3 479.5 1118.3 461.9 1118.4 458.4 1118.4 449 1118.5 440.9 1118.5 452.4 1118.6 454.1 1118.6 447.3 1118.7 450.9 1118.7 444.8 1118.8 464.8 1118.8 463.2 1118.9 448.6 1118.9 448.7 1119 457.4 1119 455.1 1119.1 479.5 1119.2 452.2 1119.2 450.5 1119.3 476.7 1119.3 445 1119.4 459 1119.4 451.6 1119.5 470.8 1119.5 458.5 1119.6 467.4 1119.6 446 1119.7 462.9 1119.7 460.2 1119.8 455.5 1119.8 467.7 1119.9 471.9 1119.9 443.7 1120 450.1 1120 452.3 1120.1 447.3 1120.2 440.7 1120.2 449.8 1120.3 447 1120.3 464.4 1120.4 455 1120.4 443.6 1120.5 451.2 1120.5 455.7 1120.6 452.4 1120.6 445.9 1120.7 441.4 1120.7 435.2 1120.8 479.5 1120.8 466.7 1120.9 442.1 1120.9 465.1 1121 479.5 1121 458.8 1121.1 443.3 1121.1 456.3 1121.2 454.5 1121.2 446.6 1121.3 458.1 1121.3 434.5 1121.4 479.5 1121.4 461.8 1121.5 461.1 1121.5 479.5 1121.6 462.1 1121.6 448.7 1121.7 448.5 1121.8 444.6 1121.8 437.8 1121.9 468 1121.9 472.3 1122 450.1 1122 446.4 1122.1 461.5 1122.1 472.8 1122.2 479.5 1122.2 445.7 1122.3 468.5 1122.3 471.6 1122.4 466.1 1122.4 451 1122.5 446.3 1122.5 471.2 1122.6 450.8 1122.6 452.3 1122.7 458.2 1122.7 452.3 1122.8 471.6 1122.8 448.2 1122.9 439 1122.9 458.7 1123 461 1123 470.7 1123.1 464.3 1123.1 478.6 1123.2 479.5 1123.2 456.2 1123.3 456.4 1123.3 445.2 1123.4 450 1123.4 459.2 1123.5 441.6 1123.5 463.4 1123.6 445.4 1123.6 454.5 1123.7 479.5 1123.7 442.1 1123.8 438.8 1123.8 454.4 1123.9 446.4 1123.9 465 1124 431.9 1124 472.2 1124.1 473.3 1124.1 468.4 1124.2 453.9 1124.2 449.4 1124.3 462.2 1124.3 456.8 1124.4 453.7 1124.4 451.2 1124.5 454.3 1124.5 462.4 1124.6 471 1124.6 478.3 1124.7 445.3 1124.7 449.8 1124.8 454.4 1124.8 458.4 1124.8 451.4 1124.9 446.4 1124.9 441.7 1125 450.6 1125 454.9 1125.1 479.5 1125.1 478.8 1125.2 474.1 1125.2 479.5 1125.3 479.5 1125.3 460.4 1125.4 469.8 1125.4 440.1 1125.5 462.7 1125.5 460 1125.6 449.7 1125.6 458.6 1125.7 479.5 1125.7 455.5 1125.8 461.4 1125.8 449.8 1125.9 451.1 1125.9 475.9 1126 437.3 1126 446 1126.1 462.7 1126.1 454.4 1126.2 441.6 1126.2 461.9 1126.3 452 1126.3 458.8 1126.4 453.4 1126.4 457 1126.4 458.2 1126.5 452.7 1126.5 443 1126.6 445.7 1126.6 476.4 1126.7 457.6 1126.7 442.8 1126.8 473.6 1126.8 448.2 1126.9 442 1126.9 457 1127 448.1 1127 455.6 1127.1 457.8 1127.1 447.2 1127.2 458.4 1127.2 442.8 1127.3 456.4 1127.3 459 1127.4 441.1 1127.4 453 1127.4 440.7 1127.5 454 1127.5 473.6 1127.6 457.6 1127.6 464.2 1127.7 466.3 1127.7 442.8 1127.8 479.5 1127.8 464.5 1127.9 442.2 1127.9 470.9 1128 452.4 1128 445.2 1128.1 479.5 1128.1 458 1128.2 467.3 1128.2 443.8 1128.2 467.3 1128.3 439.6 1128.3 447.4 1128.4 451.7 1128.4 435.2 1128.5 459.1 1128.5 446.6 1128.6 449.5 1128.6 463.7 1128.7 453.4 1128.7 476 1128.8 460.1 1128.8 474.3 1128.9 457.9 1128.9 479.5 1128.9 474.2 1129 444.9 1129 465.5 1129.1 450.7 1129.1 466.5 1129.2 462.4 1129.2 470.4 1129.3 443 1129.3 451.7 1129.4 465.1 1129.4 479.5 1129.5 464.3 1129.5 438.4 1129.5 459.3 1129.6 441.9 1129.6 457.3 1129.7 468.8 1129.7 442.5 1129.8 479.5 1129.8 462.1 1129.9 447.9 1129.9 445.7 1130 453.9 1130 471.3 1130 458.4 1130.1 442.5 1130.1 435.9 1130.2 442.4 1130.2 468.6 1130.3 445.4 1130.3 457.4 1130.4 448.9 1130.4 462.6 1130.5 451.8 1130.5 443.8 1130.5 474.4 1130.6 456.8 1130.6 462.7 1130.7 469 1130.7 479.5 1130.8 434.7 1130.8 450.5 1130.9 444 1130.9 455.6 1131 474.1 1131 468.5 1131 437.5 1131.1 445.2 1131.1 469.7 1131.2 462.2 1131.2 452 1131.3 454.7 1131.3 444.3 1131.4 471.6 1131.4 452.1 1131.4 474.1 1131.5 459.3 1131.5 440.4 1131.6 450 1131.6 446.4 1131.7 476.3 1131.7 458.5 1131.8 438.2 1131.8 444.7 1131.9 451 1131.9 454.3 1131.9 458 1132 451.8 1132 450.7 1132.1 432.5 1132.1 458.1 1132.2 450.1 1132.2 435.6 1132.3 454 1132.3 479.5 1132.3 438.2 1132.4 443.7 1132.4 461.6 1132.5 448.1 1132.5 448.2 1132.6 455.3 1132.6 447.8 1132.6 457.7 1132.7 456.2 1132.7 479.5 1132.8 479.5 1132.8 437.2 1132.9 457.3 1132.9 466.5 1133 473.9 1133 466.7 1133 460 1133.1 460.1 1133.1 450.9 1133.2 448.3 1133.2 467.9 1133.3 473.9 1133.3 479.5 1133.4 462 1133.4 449 1133.4 466 1133.5 464.7 1133.5 455.5 1133.6 460 1133.6 450.5 1133.7 456.9 1133.7 452.2 1133.7 439.2 1133.8 450 1133.8 449.6 1133.9 479.5 1133.9 454.6 1134 450.9 1134 447 1134 446.7 1134.1 450.4 1134.1 443 1134.2 432.7 1134.2 473.6 1134.3 453.6 1134.3 453.4 1134.3 457.5 1134.4 448.9 1134.4 444.3 1134.5 439.5 1134.5 448.8 1134.6 449 1134.6 463.9 1134.6 456.8 1134.7 479.5 1134.7 450 1134.8 479.5 1134.8 457.9 1134.9 440.3 1134.9 444.6 1134.9 457.8 1135 479.5 1135 450.5 1135.1 466.4 1135.1 452.7 1135.2 473.2 1135.2 439.5 1135.2 454.5 1135.3 476.4 1135.3 447.9 1135.4 447.3 1135.4 435.6 1135.5 444 1135.5 447.6 1135.5 462.8 1135.6 446 1135.6 451.8 1135.7 445.3 1135.7 458.6 1135.8 472.8 1135.8 460.3 1135.8 445.2 1135.9 464.2 1135.9 479.5 1136 458.5 1136 440.1 1136.1 468.5 1136.1 473.8 1136.1 449.9 1136.2 442.8 1136.2 444.8 1136.3 456.1 1136.3 473.8 1136.3 459.9 1136.4 479.5 1136.4 445.7 1136.5 449.4 1136.5 464.9 1136.6 460.3 1136.6 451.8 1136.6 461.5 1136.7 449.7 1136.7 438.6 1136.8 452.1 1136.8 437.7 1136.8 459.3 1136.9 449.6 1136.9 454.6 1137 458.2 1137 447.1 1137.1 453.6 1137.1 433.9 1137.1 479.5 1137.2 457 1137.2 479.5 1137.3 438.5 1137.3 458.8 1137.3 463.5 1137.4 449.4 1137.4 440.7 1137.5 443.5 1137.5 442.9 1137.6 465.7 1137.6 440.5 1137.6 468.6 1137.7 452.3 1137.7 456 1137.8 457.8 1137.8 456.6 1137.8 460.5 1137.9 458.3 1137.9 449.4 1138 464.3 1138 447 1138 462.8 1138.1 465.5 1138.1 466.2 1138.2 448.7 1138.2 466 1138.3 479.5 1138.3 453.1 1138.3 447.6 1138.4 455.4 1138.4 479.5 1138.5 442.4 1138.5 432.7 1138.5 453.8 1138.6 460.3 1138.6 466 1138.7 450.3 1138.7 479.5 1138.7 445.9 1138.8 465 1138.8 440.4 1138.9 435.8 1138.9 442.4 1138.9 438.6 1139 454.6 1139 456.4 1139.1 444.3 1139.1 479.5 1139.1 450.3 1139.2 443 1139.2 444.1 1139.3 464 1139.3 479 1139.3 443.5 1139.4 435.9 1139.4 466.1 1139.5 446.3 1139.5 479.5 1139.5 454.5 1139.6 459.4 1139.6 449.6 1139.7 467.5 1139.7 453.2 1139.7 448.9 1139.8 476.5 1139.8 441.1 1139.9 463.7 1139.9 438.8 1139.9 459.7 1140 451.3 1140 472.3 1140.1 438.4 1140.1 456.6 1140.1 451.6 1140.2 478.5 1140.2 479.5 1140.3 459 1140.3 445.6 1140.3 446.6 1140.4 446.9 1140.4 452.3 1140.5 445.9 1140.5 444.9 1140.5 464.9 1140.6 459.5 1140.6 448 1140.7 479.5 1140.7 445.3 1140.7 456.8 1140.8 443.1 1140.8 472.1 1140.9 472.6 1140.9 447 1140.9 464.5 1141 468.9 1141 447.5 1141.1 449 1141.1 453.9 1141.1 474.8 1141.2 443.3 1141.2 461.1 1141.3 457.7 1141.3 452.8 1141.3 457 1141.4 473.9 1141.4 445 1141.5 474 1141.5 449.9 1141.5 466 1141.6 472 1141.6 444 1141.6 472.1 1141.7 479.5 1141.7 447.9 1141.8 435.1 1141.8 441.1 1141.8 479.5 1141.9 432.4 1141.9 477.3 1142 442.8 1142 463.6 1142 440.4 1142.1 443.4 1142.1 461 1142.2 440 1142.2 449.1 1142.2 478.2 1142.3 462.6 1142.3 473.7 1142.3 479.5 1142.4 436 1142.4 445.7 1142.5 466.6 1142.5 461.3 1142.5 436.4 1142.6 454.3 1142.6 445.6 1142.7 451.9 1142.7 440.7 1142.7 434.3 1142.8 479.5 1142.8 448.3 1142.8 473.3 1142.9 441.4 1142.9 453.7 1143 442 1143 451.8 1143 443.7 1143.1 461 1143.1 442.5 1143.2 463.5 1143.2 454.1 1143.2 441 1143.3 449.4 1143.3 454 1143.3 478.1 1143.4 449.3 1143.4 445 1143.5 479.5 1143.5 473.7 1143.5 463.2 1143.6 446.9 1143.6 443.6 1143.7 446.6 1143.7 438.6 1143.7 436.7 1143.8 454.3 1143.8 451.1 1143.8 455.9 1143.9 449.7 1143.9 432.5 1144 461.1 1144 459.6 1144 455.5 1144.1 455.6 1144.1 461.1 1144.1 479.5 1144.2 472.7 1144.2 462.4 1144.3 450.8 1144.3 448.2 1144.3 451.4 1144.4 479.5 1144.4 450.4 1144.4 450.3 1144.5 451.1 1144.5 442.1 1144.6 479.5 1144.6 430.8 1144.6 457.7 1144.7 479.1 1144.7 446.1 1144.7 457.8 1144.8 450 1144.8 445.7 1144.9 444.2 1144.9 440.9 1144.9 469.9 1145 465.9 1145 476.5 1145 437.1 1145.1 461.2 1145.1 448.3 1145.2 459.2 1145.2 455.5 1145.2 448 1145.3 479.5 1145.3 427.4 1145.3 463.7 1145.4 470.7 1145.4 454.2 1145.5 457 1145.5 479.5 1145.5 445.4 1145.6 458.4 1145.6 463.5 1145.6 450 1145.7 462 1145.7 450.4 1145.8 454.7 1145.8 457.8 1145.8 460.4 1145.9 448.2 1145.9 458.4 1145.9 455.2 1146 444.9 1146 457.7 1146 446.3 1146.1 476.4 1146.1 452.9 1146.2 462.4 1146.2 454.5 1146.2 453 1146.3 444.8 1146.3 441.9 1146.3 479.1 1146.4 454.7 1146.4 454.5 1146.4 454.6 1146.5 467.6 1146.5 445.4 1146.6 443.1 1146.6 468.1 1146.6 452.4 1146.7 458.7 1146.7 468.5 1146.7 474.5 1146.8 471.8 1146.8 436.4 1146.9 449.9 1146.9 468.9 1146.9 467.8 1147 441 1147 442.3 1147 445.8 1147.1 440.1 1147.1 449.1 1147.1 466.8 1147.2 454.3 1147.2 452.1 1147.3 439.3 1147.3 450.3 1147.3 479.5 1147.4 461 1147.4 452 1147.4 452.9 1147.5 466.5 1147.5 464.1 1147.5 442.1 1147.6 460.3 1147.6 449.4 1147.6 454.3 1147.7 445.2 1147.7 449.5 1147.8 448.5 1147.8 449.8 1147.8 433.4 1147.9 444 1147.9 456 1147.9 437.4 1148 443.1 1148 462 1148 446.4 1148.1 448 1148.1 445.3 1148.2 468.9 1148.2 439.3 1148.2 458.4 1148.3 470.9 1148.3 443.9 1148.3 451 1148.4 466 1148.4 457.7 1148.4 449.4 1148.5 436.3 1148.5 451.6 1148.5 449.3 1148.6 461.7 1148.6 447 1148.7 450.5 1148.7 458.8 1148.7 467.1 1148.8 448.8 1148.8 449.8 1148.8 456.2 1148.9 478.4 1148.9 443.5 1148.9 479.5 1149 461.6 1149 449.4 1149 459.5 1149.1 448 1149.1 438.1 1149.1 463.8 1149.2 449.6 1149.2 454.3 1149.3 453.3 1149.3 475.1 1149.3 463.8 1149.4 434.3 1149.4 456.6 1149.4 452.2 1149.5 452.1 1149.5 469.1 1149.5 450.6 1149.6 452.5 1149.6 473.8 1149.6 451.4 1149.7 453.1 1149.7 453.7 1149.7 468 1149.8 459.6 1149.8 462.9 1149.9 450.2 1149.9 435.8 1149.9 460 1150 455.1 1150 464.4 1150 464.5 1150.1 440.4 1150.1 444.4 1150.1 438.3 1150.2 467.4 1150.2 439.6 1150.2 438.9 1150.3 463.5 1150.3 455.5 1150.3 436.9 1150.4 460 1150.4 461.4 1150.4 452.7 1150.5 436.9 1150.5 460.4 1150.5 450.6 1150.6 456.1 1150.6 479.5 1150.7 467.3 1150.7 471.8 1150.7 441.5 1150.8 448 1150.8 453.8 1150.8 430.4 1150.9 479.5 1150.9 446.1 1150.9 445.7 1151 447.3 1151 445.4 1151 470.5 1151.1 455.1 1151.1 453.5 1151.1 450.6 1151.2 436.5 1151.2 447 1151.2 471.2 1151.3 466.3 1151.3 470.3 1151.3 445.5 1151.4 443.6 1151.4 436.6 1151.4 454.4 1151.5 449.1 1151.5 452 1151.5 452.8 1151.6 456 1151.6 448.9 1151.6 466.2 1151.7 443.5 1151.7 477.2 1151.8 455 1151.8 436.5 1151.8 447.2 1151.9 454.2 1151.9 450.2 1151.9 455.3 1152 447.5 1152 445.9 1152 465.8 1152.1 446.5 1152.1 461.2 1152.1 466.2 1152.2 456.3 1152.2 451.6 1152.2 479.5 1152.3 451.3 1152.3 472.2 1152.3 436.9 1152.4 450.9 1152.4 458 1152.4 436.2 1152.5 470.7 1152.5 437.8 1152.5 456.4 1152.6 442.7 1152.6 477.6 1152.6 455.1 1152.7 466 1152.7 452.9 1152.7 459.4 1152.8 459.5 1152.8 446.5 1152.8 443.7 1152.9 468.6 1152.9 441.3 1152.9 476.9 1153 443.6 1153 439.3 1153 439 1153.1 464.9 1153.1 479.5 1153.1 450.2 1153.2 458.8 1153.2 445.3 1153.2 475.2 1153.3 459.9 1153.3 441.6 1153.3 436.7 1153.4 460.3 1153.4 435.5 1153.4 468.4 1153.5 446.4 1153.5 444.4 1153.5 455.7 1153.6 447.2 1153.6 455 1153.6 441.5 1153.7 476 1153.7 447.3 1153.7 468.8 1153.8 441.4 1153.8 465.8 1153.8 479.5 1153.9 449.4 1153.9 434.6 1153.9 449 1154 457.9 1154 444 1154 454.4 1154.1 438.8 1154.1 451.7 1154.1 461.8 1154.2 450.6 1154.2 459.5 1154.2 439.8 1154.3 467.7 1154.3 440.1 1154.3 477.5 1154.4 479.5 1154.4 479.5 1154.4 453.7 1154.5 446.2 1154.5 448 1154.5 462.9 1154.6 452.7 1154.6 478.6 1154.6 438.7 1154.7 452.3 1154.7 470.6 1154.7 456.2 1154.8 454.1 1154.8 438.4 1154.8 440.8 1154.9 445.5 1154.9 473.5 1154.9 469 1155 444 1155 477.7 1155 434.4 1155.1 456.2 1155.1 479.5 1155.1 447.8 1155.2 479.5 1155.2 458.4 1155.2 436 1155.2 447.4 1155.3 451.1 1155.3 444.7 1155.3 462.4 1155.4 442.3 1155.4 464.9 1155.4 446.3 1155.5 437.3 1155.5 454.7 1155.5 438.7 1155.6 454.4 1155.6 464.9 1155.6 456 1155.7 451.4 1155.7 434.5 1155.7 453.1 1155.8 438.8 1155.8 458 1155.8 440.4 1155.9 455.3 1155.9 448 1155.9 448.6 1156 458.6 1156 441.7 1156 441.9 1156.1 479.5 1156.1 447.3 1156.1 468.6 1156.2 471.3 1156.2 452 1156.2 441 1156.3 438.6 1156.3 471.8 1156.3 439.7 1156.3 452.5 1156.4 453.8 1156.4 439.7 1156.4 451.5 1156.5 441.6 1156.5 453.8 1156.5 452.8 1156.6 448.3 1156.6 442.8 1156.6 449.5 1156.7 443 1156.7 440.1 1156.7 444.3 1156.8 471 1156.8 452.6 1156.8 473 1156.9 431.9 1156.9 479.5 1156.9 452.1 1157 464.9 1157 454.9 1157 459.6 1157 443.9 1157.1 462.6 1157.1 441.1 1157.1 445 1157.2 434 1157.2 449.1 1157.2 453.1 1157.3 445.9 1157.3 472.9 1157.3 437.9 1157.4 455.2 1157.4 444 1157.4 455.8 1157.5 464.4 1157.5 460.5 1157.5 436.6 1157.6 444.4 1157.6 455.9 1157.6 479.5 1157.7 435 1157.7 456.6 1157.7 459.7 1157.7 466.4 1157.8 447.4 1157.8 466.1 1157.8 451.2 1157.9 476.8 1157.9 430.9 1157.9 479.5 1158 449.6 1158 449.4 1158 438 1158.1 444.3 1158.1 461.6 1158.1 459 1158.2 440.9 1158.2 447.4 1158.2 440.5 1158.2 442.7 1158.3 443.4 1158.3 447 1158.3 479.5 1158.4 479.5 1158.4 464.8 1158.4 451.7 1158.5 452.2 1158.5 464 1158.5 474.9 1158.6 462.5 1158.6 457.2 1158.6 442.6 1158.7 456.8 1158.7 468.5 1158.7 464.4 1158.7 438.2 1158.8 460.7 1158.8 447.5 1158.8 441.3 1158.9 479.5 1158.9 458.7 1158.9 462.1 1159 440.1 1159 467.2 1159 479.4 1159.1 474.4 1159.1 462.1 1159.1 467.5 1159.1 465.4 1159.2 455.4 1159.2 450.2 1159.2 466.9 1159.3 464.2 1159.3 470.7 1159.3 445.9 1159.4 479.5 1159.4 453.3 1159.4 479.5 1159.5 439.2 1159.5 479.5 1159.5 464.4 1159.5 444.3 1159.6 467.9 1159.6 443.7 1159.6 442.5 1159.7 450.8 1159.7 443.8 1159.7 451.9 1159.8 474.7 1159.8 459.1 1159.8 460.3 1159.9 448.7 1159.9 464.1 1159.9 464.7 1159.9 459 1160 479.5 1160 466.9 1160 449.2 1160.1 437.8 1160.1 457.7 1160.1 467.6 1160.2 447.1 1160.2 455.4 1160.2 467.6 1160.3 464.6 1160.3 428.6 1160.3 451.8 1160.3 431.8 1160.4 438.9 1160.4 465.9 1160.4 449.5 1160.5 455.8 1160.5 450.7 1160.5 446.9 1160.6 442.9 1160.6 447.5 1160.6 468.2 1160.6 456.3 1160.7 445.5 1160.7 437.7 1160.7 444.8 1160.8 459.7 1160.8 450.2 1160.8 458 1160.9 465.5 1160.9 439.3 1160.9 458.9 1160.9 434.6 1161 466.6 1161 441.8 1161 444.8 1161.1 479.5 1161.1 447.7 1161.1 443.2 1161.2 472.4 1161.2 455.9 1161.2 472.8 1161.2 448.6 1161.3 452 1161.3 479.5 1161.3 452.2 1161.4 479.5 1161.4 442 1161.4 467.1 1161.5 441 1161.5 452.9 1161.5 424.1 1161.5 441.4 1161.6 479.5 1161.6 450.5 1161.6 465.5 1161.7 444.1 1161.7 447.3 1161.7 438.3 1161.8 453.7 1161.8 469.6 1161.8 452.4 1161.8 448 1161.9 477.5 1161.9 472.8 1161.9 458.1 1162 436.9 1162 456.3 1162 450.1 1162.1 479.5 1162.1 447.5 1162.1 457.8 1162.1 456.6 1162.2 448 1162.2 452.6 1162.2 458.5 1162.3 474.3 1162.3 451.8 1162.3 447.6 1162.4 479.5 1162.4 435.7 1162.4 467.3 1162.4 458.7 1162.5 453.8 1162.5 450.2 1162.5 462 1162.6 472.4 1162.6 460.8 1162.6 461.9 1162.6 433.8 1162.7 446.3 1162.7 439.8 1162.7 479.5 1162.8 472.4 1162.8 440.1 1162.8 454.9 1162.9 454.5 1162.9 434.8 1162.9 448.4 1162.9 461.7 1163 456.9 1163 444.9 1163 462.5 1163.1 445.2 1163.1 453.3 1163.1 449.3 1163.1 479.5 1163.2 457.2 1163.2 465.1 1163.2 458.3 1163.3 448 1163.3 479.5 1163.3 459.8 1163.4 459 1163.4 444.7 1163.4 440.7 1163.4 454.3 1163.5 466.5 1163.5 464.3 1163.5 446.9 1163.6 439.8 1163.6 452.3 1163.6 470.8 1163.6 440.7 1163.7 461.2 1163.7 441" stroke="#43528f" stroke-width="1.1" opacity="0.88"/>
<path d="M649.3 438.7C650.1 437.8 652.4 434.9 654.0 432.7C655.6 430.4 657.6 425.7 659.2 424.7C660.9 423.8 662.9 425.3 664.5 426.8C666.1 428.4 668.0 433.2 669.2 434.4C670.3 435.6 670.4 433.8 671.5 434.4C672.6 435.1 674.8 435.8 676.2 438.5C677.6 441.2 679.1 448.8 680.2 451.3C681.4 453.9 682.1 455.4 683.2 454.2C684.2 453.1 685.5 447.0 686.7 444.3C687.8 441.6 689.2 438.0 690.2 437.3C691.1 436.7 691.5 436.1 692.5 440.2C693.5 444.4 695.3 462.6 696.6 463.6C697.9 464.6 699.5 452.0 700.7 446.7C701.9 441.3 703.1 433.2 704.2 430.3C705.2 427.4 706.1 427.3 707.1 428.6C708.0 429.9 709.1 433.2 710.0 438.5C710.9 443.8 712.0 460.3 712.9 461.8C713.9 463.3 714.6 447.9 715.8 447.8C717.0 447.7 719.4 463.3 720.5 461.2C721.6 459.2 721.9 438.6 722.8 435.0C723.8 431.4 725.1 439.2 726.3 438.5C727.5 437.8 729.3 431.7 730.4 430.9C731.5 430.2 732.2 429.1 733.3 433.8C734.5 438.6 736.5 461.0 737.4 460.7C738.3 460.3 738.6 436.0 739.2 431.5C739.7 427.0 740.4 430.1 740.9 432.7C741.5 435.3 742.0 448.2 742.7 447.8C743.3 447.5 744.3 431.8 745.0 430.3C745.7 428.8 746.5 434.6 747.3 438.5C748.2 442.4 749.4 448.5 750.2 454.8C751.1 461.2 751.8 474.4 752.6 478.2C753.3 481.9 754.3 485.1 754.9 478.2C755.6 471.3 756.0 443.8 756.7 435.0C757.3 426.2 758.3 423.3 759.0 423.3C759.7 423.3 760.8 429.8 761.3 435.0C761.9 440.2 761.8 455.3 762.5 456.0C763.2 456.7 765.0 443.0 766.0 439.7C767.0 436.3 768.2 429.4 768.9 435.0C769.7 440.6 770.3 474.1 770.7 474.7C771.0 475.2 770.8 437.9 771.2 438.5C771.7 439.1 773.0 474.2 773.6 478.2C774.1 482.1 774.2 463.6 774.8 463.0C775.3 462.4 776.4 475.4 777.1 474.7C777.7 473.9 778.6 460.9 778.8 458.3L781.2 436.7 782.8 426.4 784.4 436.6 786 439.5 787.5 478 789 476.6 790.5 433.6 791.9 437.9 793.3 472.4 794.7 434.5 796.1 438.7 797.4 442.5 798.7 431.4 800 437.2 801.3 441.6 802.5 441.5 803.7 478.8 804.9 438 806.1 436.1 807.3 468.3 808.4 444.2 809.6 461.5 810.7 451 811.8 457.9 812.9 440.5 813.9 435 815 457 816 445.7 817 448.8 818.1 453.2 819 457.3 820 440.1 821 442.9 822 471.3 822.9 448.5 823.8 440.9 824.8 452.4 825.7 440.2 826.6 459.2 827.5 430.6 828.3 462.9 829.2 450.5 830.1 443.7 830.9 476.1 831.8 441.1 832.6 440.5 833.4 433.3 834.2 450.5 835 459.2 835.8 455.6 836.6 446.3 837.4 462.7 838.1 436.1 838.9 443.3 839.7 454.7 840.4 479.5 841.1 454.4 841.9 457 842.6 461.2 843.3 446.5 844 477.7 844.7 459.7 845.4 445.1 846.1 446.8 846.8 463.6 847.5 445.6 848.2 440.3 848.8 469 849.5 451.7 850.1 451.4 850.8 457 851.4 472.6 852.1 438.7 852.7 445.9 853.3 435.4 853.9 448.4 854.6 451.3 855.2 468 855.8 457.5 856.4 454.1 857 448.4 857.6 454.1 858.2 444.5 858.7 467.9 859.3 464 859.9 467.5 860.5 440.4 861 458.3 861.6 462.3 862.2 452.1 862.7 473.5 863.3 473.6 863.8 462 864.3 466.7 864.9 457.8 865.4 471.7 865.9 440.2 866.5 460.4 867 460.4 867.5 456.7 868 445.7 868.5 437.3 869 456.5 869.5 467.6 870 445.8 870.5 443.9 871 444.3 871.5 439.1 872 459.8 872.5 479.5 873 466.4 873.5 449 873.9 461 874.4 438.3 874.9 469.2 875.3 448.1 875.8 429.6 876.3 458.3 876.7 441.8 877.2 446.7 877.6 437.8 878.1 452.2 878.5 455.9 879 467.5 879.4 436.5 879.8 469 880.3 441 880.7 445.5 881.1 458.9 881.6 449.3 882 449.1 882.4 456.8 882.8 445.5 883.3 467.1 883.7 445.3 884.1 470.4 884.5 468.2 884.9 456 885.3 436.3 885.7 466.5 886.1 436.2 886.5 455.1 886.9 452.5 887.3 439.2 887.7 459.7 888.1 463.9 888.5 458.1 888.9 452 889.3 455.7 889.7 458.4 890 446.6 890.4 473.5 890.8 479.5 891.2 468.7 891.6 479.5 891.9 450.2 892.3 479.5 892.7 440.4 893 455 893.4 443.5 893.8 454.3 894.1 462.6 894.5 463.8 894.8 454.4 895.2 450.9 895.6 446 895.9 452.9 896.3 449.2 896.6 446.3 897 465.5 897.3 456.7 897.7 454.2 898 446.6 898.3 464.1 898.7 446.6 899 449 899.4 458.5 899.7 464.1 900 479.5 900.4 466.5 900.7 479.5 901 479.5 901.3 465.3 901.7 465.2 902 440.9 902.3 447.3 902.6 435.8 903 474.6 903.3 465.5 903.6 461.6 903.9 449.5 904.2 452.4 904.6 446 904.9 461.8 905.2 479.5 905.5 451 905.8 440 906.1 446.7 906.4 452.7 906.7 478.7 907 470.6 907.3 455.9 907.6 443.7 907.9 444 908.2 446.1 908.5 469.1 908.8 456.6 909.1 479.5 909.4 479.5 909.7 470.2 910 456.8 910.3 472.1 910.6 445.3 910.9 444.4 911.2 459.9 911.4 458 911.7 448.5 912 450 912.3 438.2 912.6 479.5 912.9 466 913.1 479.5 913.4 479.5 913.7 455.9 914 467.1 914.3 454.3 914.5 471.8 914.8 473.9 915.1 445.9 915.4 437.1 915.6 449 915.9 461.1 916.2 454.3 916.4 436.2 916.7 473.2 917 470.2 917.2 457 917.5 440.9 917.8 478.4 918 459.3 918.3 442.8 918.5 452.6 918.8 462.6 919.1 478 919.3 457.6 919.6 463.1 919.8 448.6 920.1 449.9 920.3 479.5 920.6 454.3 920.8 444.4 921.1 461.1 921.3 445.4 921.6 448.2 921.8 456.4 922.1 460.7 922.3 462.6 922.6 465.5 922.8 455.6 923.1 441.9 923.3 466.1 923.6 440.8 923.8 456.2 924.1 453.9 924.3 463.4 924.5 465.1 924.8 448.4 925 462 925.3 463.7 925.5 455.4 925.7 444.3 926 478.6 926.2 459.2 926.4 439.7 926.7 447.1 926.9 479.5 927.1 446.3 927.4 451.3 927.6 466.7 927.8 468.8 928.1 458.8 928.3 463.3 928.5 435.7 928.7 439.1 929 479.5 929.2 465.7 929.4 434.5 929.6 435 929.9 443.3 930.1 477.1 930.3 441.9 930.5 456.8 930.8 475.9 931 454.7 931.2 473.4 931.4 441.4 931.6 437.1 931.8 428 932.1 458 932.3 433.6 932.5 479.5 932.7 454.3 932.9 435.7 933.1 458.7 933.4 433.8 933.6 444.8 933.8 430.4 934 455.5 934.2 463.2 934.4 466.1 934.6 417 934.8 458 935 442.7 935.3 454.7 935.5 439.9 935.7 443.5 935.9 442 936.1 451.1 936.3 422.7 936.5 420.7 936.7 438.1 936.9 429.4 937.1 432.1 937.3 412.6 937.5 444.1 937.7 414.5 937.9 448.2 938.1 446.4 938.3 430.7 938.5 418.8 938.7 436.4 938.9 421 939.1 427.5 939.3 416 939.5 467.2 939.7 429.7 939.9 422.9 940.1 413 940.3 435.5 940.5 442.4 940.7 442.7 940.9 413.1 941 423.1 941.2 421.7 941.4 439.2 941.6 417.4 941.8 433.3 942 469.8 942.2 441.8 942.4 408.7 942.6 416.7 942.8 419.3 942.9 440.1 943.1 436.9 943.3 434.6 943.5 433.1 943.7 432.1 943.9 439.4 944.1 441.4 944.2 460.3 944.4 446.3 944.6 450.4 944.8 461.3 945 454.2 945.2 447.5 945.3 421.1 945.5 446.9 945.7 457.2 945.9 438.9 946.1 460.7 946.2 431.7 946.4 470.7 946.6 441.1 946.8 451.3 947 436.1 947.1 438.1 947.3 440 947.5 439.7 947.7 431.7 947.8 444.3 948 479.5 948.2 452.6 948.4 473.6 948.5 458.5 948.7 463.7 948.9 479.5 949.1 459.2 949.2 442.3 949.4 441.9 949.6 447.4 949.8 430.9 949.9 442.3 950.1 471.3 950.3 476 950.4 446.6 950.6 463.5 950.8 464.1 950.9 473.4 951.1 465.9 951.3 454.7 951.4 440.5 951.6 469 951.8 448.7 951.9 459.4 952.1 450.9 952.3 456.7 952.4 479.5 952.6 444.9 952.8 457.3 952.9 462 953.1 458.1 953.3 479.5 953.4 454.3 953.6 479.5 953.8 464.9 953.9 479.5 954.1 443.9 954.2 449.2 954.4 451.9 954.6 479.5 954.7 438.1 954.9 451.6 955 467.7 955.2 479.5 955.4 449.2 955.5 457.9 955.7 467 955.8 467.4 956 470.2 956.1 470.7 956.3 452.7 956.5 453.1 956.6 442.1 956.8 468.3 956.9 451.9 957.1 453.7 957.2 479.5 957.4 466.7 957.5 464.8 957.7 467.5 957.9 465.3 958 469.3 958.2 455.9 958.3 446.4 958.5 446.7 958.6 441.7 958.8 458 958.9 450.7 959.1 449.5 959.2 462.5 959.4 479.5 959.5 469.9 959.7 455.7 959.8 474.1 960 452.6 960.1 449.4 960.3 456.9 960.4 460.3 960.6 470.4 960.7 461.5 960.9 472.3 961 449.4 961.2 479.5 961.3 458.5 961.4 478.8 961.6 445.1 961.7 478.6 961.9 455 962 479.5 962.2 476.9 962.3 470.1 962.5 456.8 962.6 442.2 962.8 453.9 962.9 479.5 963 452.8 963.2 469.8 963.3 467 963.5 470 963.6 453.8 963.8 452.3 963.9 450.3 964 479.5 964.2 460.5 964.3 469.7 964.5 466.6 964.6 455.4 964.7 448.6 964.9 443.7 965 479.5 965.2 452 965.3 479.5 965.4 460 965.6 473.1 965.7 452.4 965.9 476.6 966 456.6 966.1 460.2 966.3 465.2 966.4 451.3 966.5 456.5 966.7 477.2 966.8 457.7 966.9 460.7 967.1 475.4 967.2 455.7 967.4 454.7 967.5 455.6 967.6 460.9 967.8 460.3 967.9 469.7 968 463.7 968.2 479.5 968.3 447.9 968.4 470.6 968.6 479.5 968.7 456.2 968.8 446.1 969 462.7 969.1 451.7 969.2 463.4 969.4 472.8 969.5 450.7 969.6 451.8 969.7 464 969.9 454.1 970 456.2 970.1 462.8 970.3 451.9 970.4 449.2 970.5 460.3 970.7 463.7 970.8 479.5 970.9 466.6 971 449.5 971.2 455.9 971.3 474.5 971.4 466.9 971.6 479.5 971.7 479.5 971.8 479.5 971.9 451.6 972.1 479.5 972.2 465.6 972.3 456.5 972.4 454.1 972.6 479.5 972.7 455.6 972.8 450.2 972.9 457.4 973.1 479.5 973.2 463.6 973.3 473.9 973.4 449.7 973.6 463.3 973.7 459.1 973.8 455.4 973.9 470.8 974.1 460.5 974.2 452.1 974.3 479.5 974.4 464.3 974.6 454.5 974.7 443.4 974.8 470.4 974.9 465.4 975 445.7 975.2 463.9 975.3 474.5 975.4 466.1 975.5 456.4 975.7 464.9 975.8 468.6 975.9 470.4 976 453.2 976.1 478.1 976.3 479.5 976.4 474.5 976.5 479.5 976.6 460.7 976.7 479.5 976.9 454.6 977 456.2 977.1 468.4 977.2 479.5 977.3 450.3 977.4 455.9 977.6 447 977.7 463 977.8 453 977.9 455 978 475 978.2 467.8 978.3 479.5 978.4 461.8 978.5 471.6 978.6 443.9 978.7 479.5 978.8 456.5 979 464.2 979.1 465.4 979.2 479.5 979.3 464.7 979.4 479.5 979.5 469.3 979.7 455.9 979.8 479.5 979.9 455.4 980 479.5 980.1 463.6 980.2 456.3 980.3 479.5 980.5 459.4 980.6 462 980.7 460 980.8 471.2 980.9 445.6 981 461 981.1 454 981.2 479.5 981.4 436 981.5 468.8 981.6 457.3 981.7 463.5 981.8 467.1 981.9 473.2 982 453 982.1 456.8 982.2 452.3 982.4 479.5 982.5 453.5 982.6 453 982.7 465.8 982.8 467.8 982.9 479.5 983 448.8 983.1 456.6 983.2 454.2 983.3 468 983.5 463.5 983.6 462.1 983.7 479.5 983.8 471 983.9 479.5 984 479.5 984.1 457.8 984.2 479.5 984.3 462.1 984.4 448.4 984.5 479.5 984.6 451.5 984.7 444.9 984.9 458.4 985 458.4 985.1 479.5 985.2 479.5 985.3 462.5 985.4 466.1 985.5 479.5 985.6 478.5 985.7 470.7 985.8 465.5 985.9 452.1 986 457 986.1 470.9 986.2 468.1 986.3 478.1 986.4 479.5 986.5 479.5 986.6 455.2 986.8 450.1 986.9 479.5 987 467.5 987.1 454.8 987.2 472.3 987.3 457.4 987.4 456.7 987.5 460.9 987.6 465.9 987.7 471.7 987.8 449.9 987.9 474.7 988 469.5 988.1 464.2 988.2 471.5 988.3 478.1 988.4 443.4 988.5 464.3 988.6 471.7 988.7 473.2 988.8 470.5 988.9 454.8 989 479.5 989.1 477.2 989.2 456.6 989.3 462.9 989.4 479.5 989.5 455.8 989.6 462.2 989.7 479.5 989.8 479.5 989.9 456.6 990 474.4 990.1 460.7 990.2 471.1 990.3 476.1 990.4 452.7 990.5 456.3 990.6 456.1 990.7 457.8 990.8 447.2 990.9 453.1 991 462.2 991.1 462.6 991.2 450.3 991.3 468 991.4 479.5 991.5 467.8 991.6 460.6 991.7 473 991.8 463.2 991.9 454.7 992 464.6 992.1 445 992.2 471.7 992.3 454.1 992.4 461.1 992.5 479.5 992.6 476.2 992.7 479.5 992.8 470.3 992.8 470 992.9 473 993 479.5 993.1 455.4 993.2 476.1 993.3 458.9 993.4 457.5 993.5 479.5 993.6 468.7 993.7 479.5 993.8 479.5 993.9 468.3 994 455.5 994.1 444.6 994.2 466.4 994.3 474 994.4 458 994.5 449.8 994.6 441.9 994.6 454.6 994.7 472.6 994.8 441.5 994.9 456.6 995 457.8 995.1 473.3 995.2 479.5 995.3 445.3 995.4 452.2 995.5 479.5 995.6 479.5 995.7 453.7 995.8 460 995.9 466 995.9 459.6 996 462.6 996.1 464.6 996.2 457.6 996.3 448.9 996.4 450.7 996.5 454.2 996.6 451.1 996.7 469.7 996.8 472.7 996.9 457.8 997 477.7 997 474.2 997.1 460.3 997.2 465 997.3 455.2 997.4 479.5 997.5 467.3 997.6 448.6 997.7 453.9 997.8 472.5 997.9 461.6 997.9 473.7 998 456.7 998.1 478.1 998.2 478.4 998.3 451.3 998.4 468.3 998.5 455.3 998.6 473.2 998.7 478.5 998.8 477.7 998.8 456.7 998.9 451.2 999 471.3 999.1 467.5 999.2 453.3 999.3 455.4 999.4 468.1 999.5 452 999.5 470.1 999.6 457.1 999.7 457.7 999.8 462.8 999.9 466.4 1000 474.1 1000.1 446.9 1000.2 474.1 1000.2 456.4 1000.3 458.7 1000.4 470.3 1000.5 472.5 1000.6 469.4 1000.7 479.5 1000.8 455.8 1000.8 459.4 1000.9 471.3 1001 457.7 1001.1 454.1 1001.2 456.6 1001.3 476.6 1001.4 479.5 1001.4 473.7 1001.5 479.5 1001.6 477.9 1001.7 459.3 1001.8 459.5 1001.9 473.9 1002 449 1002 469.2 1002.1 451.1 1002.2 448.5 1002.3 465.8 1002.4 453.9 1002.5 479.5 1002.6 479.5 1002.6 464.1 1002.7 455.6 1002.8 452.5 1002.9 465.6 1003 466.1 1003.1 461 1003.1 473.7 1003.2 466.3 1003.3 476.8 1003.4 451.9 1003.5 450 1003.6 461.8 1003.6 464.8 1003.7 457.5 1003.8 471.6 1003.9 456.5 1004 459.6 1004.1 464.6 1004.1 473.5 1004.2 476.5 1004.3 461.3 1004.4 463.7 1004.5 479.5 1004.5 479.5 1004.6 469.6 1004.7 451.9 1004.8 463.9 1004.9 470.3 1005 458.4 1005 447.6 1005.1 479.5 1005.2 479.5 1005.3 453 1005.4 464.3 1005.4 469.6 1005.5 459.1 1005.6 449.9 1005.7 475.5 1005.8 476.6 1005.8 463.4 1005.9 450.9 1006 462 1006.1 451.4 1006.2 479.5 1006.2 448.8 1006.3 458.7 1006.4 476.4 1006.5 453.3 1006.6 452 1006.6 450.1 1006.7 454.4 1006.8 466.5 1006.9 479.5 1007 454.6 1007 454.8 1007.1 476.3 1007.2 463 1007.3 460.3 1007.4 452.8 1007.4 457.3 1007.5 479.5 1007.6 452.5 1007.7 457.8 1007.8 475 1007.8 479.5 1007.9 479.5 1008 464.5 1008.1 479.5 1008.1 469.1 1008.2 458.8 1008.3 464.3 1008.4 473.8 1008.5 474.7 1008.5 453.1 1008.6 455.6 1008.7 479.5 1008.8 452.1 1008.8 479.3 1008.9 460.3 1009 457.4 1009.1 457.7 1009.2 464.4 1009.2 479.5 1009.3 453.9 1009.4 479.5 1009.5 459.8 1009.5 454.8 1009.6 475.2 1009.7 460.4 1009.8 455.3 1009.9 462.8 1009.9 479.5 1010 479.5 1010.1 468 1010.2 443.9 1010.2 476.2 1010.3 469.1 1010.4 479.5 1010.5 479.5 1010.6 459.9 1010.6 479.5 1010.7 479.5 1010.8 458 1010.9 461.1 1010.9 461.4 1011 460.7 1011.1 461.5 1011.2 452.1 1011.2 456.7 1011.3 479.5 1011.4 462.5 1011.5 470.2 1011.6 479.5 1011.6 475.7 1011.7 457.2 1011.8 479.5 1011.9 478.6 1011.9 479.5 1012 474.3 1012.1 475.7 1012.2 479.2 1012.3 457.5 1012.3 471 1012.4 461.5 1012.5 479.5 1012.6 453.1 1012.6 466.6 1012.7 460.1 1012.8 479.5 1012.9 460.4 1013 479.5 1013 479.5 1013.1 479.5 1013.2 453.3 1013.3 479.5 1013.3 475.1 1013.4 471.9 1013.5 470.8 1013.6 448.4 1013.7 479.5 1013.7 466.9 1013.8 463.8 1013.9 460.2 1014 477.2 1014 477.1 1014.1 479.5 1014.2 456.1 1014.3 460.2 1014.3 457.3 1014.4 451.5 1014.5 459.8 1014.6 446.3 1014.7 478 1014.7 456.6 1014.8 449.9 1014.9 449.7 1015 474.8 1015 455.5 1015.1 464 1015.2 462.1 1015.3 478.3 1015.4 479.5 1015.4 459.2 1015.5 469.9 1015.6 479.5 1015.7 464.2 1015.7 479.5 1015.8 474.4 1015.9 459.3 1016 479.5 1016.1 467.7 1016.1 451.8 1016.2 468.2 1016.3 479.5 1016.4 465.8 1016.4 464.7 1016.5 462.5 1016.6 479.5 1016.7 471.3 1016.7 455.8 1016.8 460.8 1016.9 460.8 1017 479.5 1017.1 472.6 1017.1 452.6 1017.2 479.5 1017.3 447.1 1017.4 468.3 1017.4 463 1017.5 473.6 1017.6 462.9 1017.7 451 1017.8 465.9 1017.8 479.5 1017.9 477.4 1018 460.6 1018.1 456.3 1018.1 474.9 1018.2 478.2 1018.3 456.1 1018.4 479.5 1018.5 479.5 1018.5 463 1018.6 461.3 1018.7 473.2 1018.8 479.5 1018.8 455.5 1018.9 458.8 1019 459.7 1019.1 474.2 1019.1 455 1019.2 466.7 1019.3 465.1 1019.4 471.3 1019.5 453.3 1019.5 479.5 1019.6 479.5 1019.7 467.1 1019.8 477.7 1019.8 454.8 1019.9 479.5 1020 466.8 1020.1 475.6 1020.2 479.5 1020.2 460.7 1020.3 479.5 1020.4 455.7 1020.5 445.7 1020.5 465.1 1020.6 479.5 1020.7 479.5 1020.8 479.5 1020.9 465.4 1020.9 479.5 1021 467.1 1021.1 453.2 1021.2 469.7 1021.2 478.2 1021.3 462.6 1021.4 468.6 1021.5 457.4 1021.5 457.9 1021.6 462.4 1021.7 465.4 1021.8 464 1021.9 450.9 1021.9 442 1022 459.9 1022.1 473.4 1022.2 474.9 1022.2 456.6 1022.3 457.2 1022.4 465.5 1022.5 454.4 1022.6 468.6 1022.6 479.5 1022.7 455.4 1022.8 467.9 1022.9 473.5 1022.9 475 1023 473.1 1023.1 473 1023.2 457.8 1023.3 479.5 1023.3 479.5 1023.4 448.4 1023.5 479.5 1023.6 463.1 1023.6 450.5 1023.7 449.5 1023.8 477.7 1023.9 471.5 1023.9 453.1 1024 463.6 1024.1 469.9 1024.2 479.5 1024.3 459.7 1024.3 475.9 1024.4 456.8 1024.5 455.2 1024.6 453.8 1024.6 462 1024.7 469.1 1024.8 458.7 1024.9 453.8 1025 455.9 1025 450.4 1025.1 455 1025.2 459.1 1025.3 465 1025.3 454.6 1025.4 464.2 1025.5 462.9 1025.6 479.5 1025.7 464.4 1025.7 479.5 1025.8 463.9 1025.9 455.1 1026 468 1026 453.1 1026.1 454.1 1026.2 449.7 1026.3 472.5 1026.3 479.5 1026.4 461.7 1026.5 460.2 1026.6 462.4 1026.7 460.1 1026.7 472 1026.8 461.4 1026.9 453.4 1027 479.5 1027 467.3 1027.1 442.1 1027.2 479.5 1027.3 473.8 1027.4 460.2 1027.4 469.4 1027.5 479.5 1027.6 461.6 1027.7 462.6 1027.7 458.4 1027.8 466.6 1027.9 470.7 1028 474.1 1028.1 479.5 1028.1 453.1 1028.2 460.5 1028.3 479.5 1028.4 477.2 1028.4 467.9 1028.5 471.3 1028.6 459.7 1028.7 479.5 1028.8 466.4 1028.8 461.6 1028.9 454.5 1029 451.7 1029.1 479.5 1029.1 477.7 1029.2 445.8 1029.3 459.1 1029.4 464.1 1029.4 464.6 1029.5 460.4 1029.6 479.5 1029.7 460 1029.8 465.8 1029.8 479.5 1029.9 469.7 1030 463.9 1030.1 459.4 1030.1 461.1 1030.2 468.5 1030.3 476.8 1030.4 457.1 1030.5 460.6 1030.5 461.1 1030.6 460.3 1030.7 479.5 1030.8 466 1030.8 457.6 1030.9 459.4 1031 479.1 1031.1 453.6 1031.2 471.8 1031.2 445.1 1031.3 454.8 1031.4 448.6 1031.5 478 1031.5 453 1031.6 456 1031.7 448.5 1031.8 457.2 1031.8 473.8 1031.9 473.2 1032 479.5 1032.1 479.5 1032.2 466.3 1032.2 479.5 1032.3 450.4 1032.4 479.5 1032.5 462.5 1032.5 454.7 1032.6 474.6 1032.7 479.5 1032.8 461 1032.9 450.5 1032.9 479.5 1033 474.8 1033.1 468 1033.2 479.5 1033.2 446.9 1033.3 448.3 1033.4 452 1033.5 445 1033.6 472.6 1033.6 469.2 1033.7 451.4 1033.8 453.5 1033.9 454.2 1033.9 468.4 1034 470.9 1034.1 479.5 1034.2 460.1 1034.2 479.5 1034.3 462.4 1034.4 461.1 1034.5 456.7 1034.6 456 1034.6 479.5 1034.7 479.5 1034.8 472.4 1034.9 454 1034.9 454.2 1035 453.1 1035.1 459.8 1035.2 473.9 1035.3 448.4 1035.3 465.5 1035.4 471.2 1035.5 446.3 1035.6 462.6 1035.6 476.9 1035.7 467.1 1035.8 462.9 1035.9 479.5 1036 468 1036 459.3 1036.1 461.2 1036.2 479.5 1036.3 479.5 1036.3 479.5 1036.4 466.5 1036.5 452.6 1036.6 453.9 1036.6 460.7 1036.7 471.6 1036.8 441 1036.9 477.5 1037 476.5 1037 464.9 1037.1 441.4 1037.2 477.3 1037.3 461.7 1037.3 470.7 1037.4 466.8 1037.5 473.4 1037.6 461.5 1037.7 479.5 1037.7 479.5 1037.8 479.5 1037.9 468.5 1038 458.6 1038 460.5 1038.1 457.1 1038.2 479.5 1038.3 476.9 1038.4 476.6 1038.4 478.8 1038.5 479.5 1038.6 471.4 1038.7 458.7 1038.7 474.8 1038.8 456.9 1038.9 468.3 1039 453.2 1039 479.5 1039.1 464 1039.2 457.3 1039.3 479.5 1039.4 449.7 1039.4 479.5 1039.5 474.8 1039.6 452.8 1039.7 475 1039.7 466.9 1039.8 479.5 1039.9 467.3 1040 462 1040.1 479.5 1040.1 449.9 1040.2 475.9 1040.3 450.7 1040.4 457.3 1040.4 451.3 1040.5 479.5 1040.6 462.4 1040.7 473.2 1040.8 456.6 1040.8 473.4 1040.9 469.7 1041 450.5 1041.1 464.1 1041.1 472.9 1041.2 455.2 1041.3 469.9 1041.4 457.3 1041.4 460.2 1041.5 479.5 1041.6 479.5 1041.7 479.5 1041.8 461.9 1041.8 466.7 1041.9 477.8 1042 474.8 1042.1 462.8 1042.1 479.5 1042.2 461.1 1042.3 479.5 1042.4 463.4 1042.5 451.4 1042.5 474.3 1042.6 452.5 1042.7 470.9 1042.8 447.8 1042.8 479.5 1042.9 465.6 1043 473.8 1043.1 451.9 1043.2 469.1 1043.2 460.3 1043.3 456.3 1043.4 478.2 1043.5 446 1043.5 463.5 1043.6 449.8 1043.7 479.5 1043.8 479.5 1043.9 446.1 1043.9 463 1044 463.2 1044.1 472.7 1044.2 473.2 1044.2 459.2 1044.3 479.5 1044.4 454 1044.5 452.1 1044.5 478.1 1044.6 451.4 1044.7 454 1044.8 464.2 1044.9 459 1044.9 453.2 1045 479.5 1045.1 463.3 1045.2 476.2 1045.2 456.2 1045.3 479.5 1045.4 455.3 1045.5 479.5 1045.6 468.1 1045.6 479.5 1045.7 475.4 1045.8 468.8 1045.9 465.2 1045.9 479.5 1046 462.3 1046.1 450.3 1046.2 479.5 1046.3 477.4 1046.3 470.9 1046.4 473.9 1046.5 455.6 1046.6 462.9 1046.6 478.6 1046.7 479.5 1046.8 479.5 1046.9 453 1046.9 471 1047 465.9 1047.1 461.1 1047.2 453.3 1047.3 452 1047.3 463.1 1047.4 463.9 1047.5 456.7 1047.6 459.9 1047.6 465.9 1047.7 474.8 1047.8 467.2 1047.9 453 1048 479.5 1048 459.9 1048.1 479.5 1048.2 479.5 1048.3 452.1 1048.3 466.9 1048.4 479.5 1048.5 460.4 1048.6 465.6 1048.7 458.2 1048.7 445.3 1048.8 454.6 1048.9 451.4 1049 457.2 1049 468.6 1049.1 466.2 1049.2 479.5 1049.3 471 1049.3 459.6 1049.4 479.5 1049.5 468.8 1049.6 465.5 1049.7 479.5 1049.7 470.3 1049.8 459.6 1049.9 467.7 1050 457.7 1050 479.5 1050.1 455.9 1050.2 479.5 1050.3 448.2 1050.4 442.3 1050.4 465.8 1050.5 454.5 1050.6 464.2 1050.7 451.1 1050.7 479.5 1050.8 470.2 1050.9 470.8 1051 479.5 1051.1 479.5 1051.1 470.6 1051.2 472.2 1051.3 438.6 1051.4 447.1 1051.4 461.6 1051.5 479.5 1051.6 458 1051.7 466.3 1051.7 442 1051.8 461.2 1051.9 479.5 1052 467 1052.1 478.5 1052.1 442.9 1052.2 454.4 1052.3 453.5 1052.4 479.1 1052.4 450.2 1052.5 479.5 1052.6 456.5 1052.7 479.5 1052.8 464.4 1052.8 458.3 1052.9 479.5 1053 460.8 1053.1 471.4 1053.1 448.3 1053.2 478.9 1053.3 479.5 1053.4 450.6 1053.5 473.7 1053.5 456.6 1053.6 452.3 1053.7 459.5 1053.8 469.8 1053.8 479.5 1053.9 479.5 1054 479.5 1054.1 468.2 1054.1 469.4 1054.2 452.8 1054.3 472.7 1054.4 465.6 1054.5 459.4 1054.5 479.5 1054.6 456.1 1054.7 452 1054.8 452.6 1054.8 452.3 1054.9 466.9 1055 476.8 1055.1 452.7 1055.2 463.9 1055.2 466.4 1055.3 465.9 1055.4 461 1055.5 465.3 1055.5 443.2 1055.6 447.6 1055.7 461.3 1055.8 455.4 1055.9 474.2 1055.9 455.6 1056 478.4 1056.1 455.6 1056.2 449.7 1056.2 463 1056.3 460.2 1056.4 458.6 1056.5 474.6 1056.5 454.9 1056.6 470 1056.7 479.1 1056.8 462.2 1056.9 463.8 1056.9 479.5 1057 467.4 1057.1 453.4 1057.2 448.3 1057.2 449.1 1057.3 458.4 1057.4 449.4 1057.5 469.1 1057.6 461.3 1057.6 457.7 1057.7 464.1 1057.8 479.5 1057.9 455.6 1057.9 452.4 1058 457.5 1058.1 458.1 1058.2 479.5 1058.3 471.6 1058.3 461.4 1058.4 452.8 1058.5 446.6 1058.6 451 1058.6 479.5 1058.7 469 1058.8 452.4 1058.9 468.1 1059 447.5 1059 463.9 1059.1 458.5 1059.2 450 1059.3 473.3 1059.3 472 1059.4 464 1059.5 452.8 1059.6 469.9 1059.6 461.5 1059.7 469.5 1059.8 449.5 1059.9 479.5 1060 439.7 1060 454.8 1060.1 460.4 1060.2 453.9 1060.3 449.3 1060.3 470.6 1060.4 479.5 1060.5 458.4 1060.6 456.2 1060.7 469.9 1060.7 454.7 1060.8 460.4 1060.9 470.6 1061 461.3 1061 452.3 1061.1 448.2 1061.2 465 1061.3 479.5 1061.4 479.5 1061.4 449.8 1061.5 463.6 1061.6 463.1 1061.7 453.6 1061.7 469.7 1061.8 463.3 1061.9 477 1062 456.9 1062 479.5 1062.1 477.4 1062.2 462.6 1062.3 451.5 1062.4 462.9 1062.4 450.9 1062.5 470.3 1062.6 470.9 1062.7 466.1 1062.7 479.5 1062.8 446.2 1062.9 471.7 1063 476.3 1063.1 450.2 1063.1 457.7 1063.2 446.8 1063.3 466.2 1063.4 472 1063.4 458.5 1063.5 470.7 1063.6 459 1063.7 471.4 1063.8 456.2 1063.8 479.5 1063.9 461.2 1064 439.3 1064.1 449 1064.1 472 1064.2 479.5 1064.3 468.1 1064.4 451.9 1064.4 479.5 1064.5 471.5 1064.6 450.1 1064.7 459.3 1064.8 469.5 1064.8 439.2 1064.9 445.7 1065 458.5 1065.1 479.5 1065.1 479.5 1065.2 457.3 1065.3 479.5 1065.4 475.1 1065.5 479.5 1065.5 466.1 1065.6 479.5 1065.7 468.2 1065.8 479.5 1065.8 465.2 1065.9 453.2 1066 463.6 1066.1 462.4 1066.2 457.8 1066.2 458.9 1066.3 463.3 1066.4 466 1066.5 454.1 1066.5 455.9 1066.6 463 1066.7 463 1066.8 460.3 1066.8 468.9 1066.9 452.7 1067 463.9 1067.1 455.8 1067.2 474 1067.2 470.6 1067.3 474.6 1067.4 463.4 1067.5 454.9 1067.5 479.5 1067.6 463.2 1067.7 458.8 1067.8 456.2 1067.9 459.6 1067.9 470.8 1068 477 1068.1 462.2 1068.2 471.8 1068.2 453.5 1068.3 461.2 1068.4 458.2 1068.5 456.6 1068.6 458.2 1068.6 473 1068.7 471.9 1068.8 453.3 1068.9 454.2 1068.9 474.6 1069 468.3 1069.1 469.2 1069.2 467.5 1069.2 469.9 1069.3 455.4 1069.4 446.6 1069.5 458.2 1069.6 444.3 1069.6 479.5 1069.7 463.4 1069.8 468.8 1069.9 479.5 1069.9 475.8 1070 453.9 1070.1 457.4 1070.2 449.2 1070.3 475.2 1070.3 471.9 1070.4 462.1 1070.5 458.3 1070.6 455.2 1070.6 462 1070.7 470.6 1070.8 479.5 1070.9 478.9 1071 479.5 1071 460.4 1071.1 459.9 1071.2 456.5 1071.3 479.5 1071.3 452.1 1071.4 451.2 1071.5 455.4 1071.6 479.5 1071.6 479.1 1071.7 457 1071.8 479 1071.9 479.5 1072 460 1072 452.4 1072.1 473.6 1072.2 458.3 1072.3 449.4 1072.3 479.5 1072.4 460.3 1072.5 459 1072.6 465.5 1072.7 454.5 1072.7 442.5 1072.8 458.7 1072.9 458.4 1073 440.8 1073 458.1 1073.1 472.8 1073.2 456.9 1073.3 468.8 1073.4 466.6 1073.4 452.1 1073.5 442.4 1073.6 468.6 1073.7 466 1073.7 455.6 1073.8 452.5 1073.9 479.1 1074 479.5 1074.1 453.6 1074.1 465 1074.2 464.6 1074.3 456.4 1074.4 444.1 1074.4 456.5 1074.5 467.2 1074.6 465.6 1074.7 462.3 1074.7 449.3 1074.8 452.8 1074.9 456 1075 459.3 1075.1 457.6 1075.1 479.5 1075.2 449 1075.3 479.5 1075.4 453.7 1075.4 479 1075.5 453.7 1075.6 464.9 1075.7 458 1075.8 444.1 1075.8 474.6 1075.9 475.5 1076 454.5 1076.1 473.3 1076.1 461.1 1076.2 479.5 1076.3 445.4 1076.4 458 1076.5 453.1 1076.5 466.2 1076.6 473.4 1076.7 477.7 1076.8 463.4 1076.8 458.1 1076.9 474.7 1077 448.2 1077.1 454.1 1077.1 471.9 1077.2 459.8 1077.3 479.5 1077.4 447.5 1077.5 460.4 1077.5 452.5 1077.6 436.7 1077.7 447.6 1077.8 447.4 1077.8 457.5 1077.9 459.4 1078 461.9 1078.1 454.9 1078.2 469.3 1078.2 462.1 1078.3 479.5 1078.4 450.8 1078.5 461.9 1078.5 461.3 1078.6 457.5 1078.7 479.1 1078.8 452.2 1078.9 479.5 1078.9 457 1079 456.3 1079.1 465.5 1079.2 463.6 1079.2 454.6 1079.3 446.9 1079.4 479.5 1079.5 457.3 1079.5 448.4 1079.6 467.1 1079.7 462.5 1079.8 455.9 1079.9 456 1079.9 477.6 1080 456.3 1080.1 458.7 1080.2 479.5 1080.2 456.9 1080.3 458.2 1080.4 450.3 1080.5 467.3 1080.6 467.4 1080.6 459.6 1080.7 458.3 1080.8 452.8 1080.9 473.6 1080.9 459.9 1081 476.4 1081.1 457.3 1081.2 470.4 1081.3 442.5 1081.3 452.3 1081.4 479.5 1081.5 468 1081.6 467.7 1081.6 461.1 1081.7 460.3 1081.8 451.4 1081.9 450.5 1081.9 466.4 1082 468.5 1082.1 453.5 1082.2 466.3 1082.3 449 1082.3 465.1 1082.4 450.4 1082.5 461.4 1082.6 455.2 1082.6 462.8 1082.7 448.9 1082.8 460.5 1082.9 465.2 1083 448.9 1083 455 1083.1 467.7 1083.2 462.6 1083.3 465.1 1083.3 472.7 1083.4 463.4 1083.5 452.1 1083.6 459.1 1083.7 476 1083.7 463.2 1083.8 471.2 1083.9 456.6 1084 459.2 1084 479.5 1084.1 475.4 1084.2 466.4 1084.3 447.5 1084.3 464.8 1084.4 442.7 1084.5 479.5 1084.6 479.5 1084.7 469.8 1084.7 453.5 1084.8 477.1 1084.9 450.3 1085 475.7 1085 461.5 1085.1 440.3 1085.2 479.5 1085.3 458.8 1085.4 475.8 1085.4 467.8 1085.5 461.8 1085.6 478.4 1085.7 451.2 1085.7 479.5 1085.8 455.6 1085.9 441.7 1086 455.5 1086.1 445.1 1086.1 445.4 1086.2 465.1 1086.3 447.9 1086.4 449.5 1086.4 454.1 1086.5 453.6 1086.6 479.5 1086.7 479.5 1086.7 479 1086.8 479.5 1086.9 458.6 1087 473.3 1087.1 453.6 1087.1 479.5 1087.2 474.2 1087.3 469.7 1087.4 451.8 1087.4 446.3 1087.5 479.5 1087.6 462.3 1087.7 464.4 1087.8 478.1 1087.8 448.7 1087.9 468 1088 459.3 1088.1 472.5 1088.1 459 1088.2 450.7 1088.3 479.5 1088.4 453.5 1088.5 470.2 1088.5 475.5 1088.6 452.4 1088.7 467.7 1088.8 457 1088.8 451.6 1088.9 451.3 1089 479.5 1089.1 456.1 1089.2 460.6 1089.2 460.3 1089.3 441.4 1089.4 470.5 1089.5 470.1 1089.5 479.2 1089.6 455.7 1089.7 451 1089.8 455.4 1089.8 469.4 1089.9 466 1090 457.2 1090.1 461 1090.2 448.8 1090.2 479.5 1090.3 459.3 1090.4 460.4 1090.5 472.3 1090.5 450.4 1090.6 468.8 1090.7 455.5 1090.8 473.9 1090.9 446.1 1090.9 453 1091 465 1091.1 459.5 1091.2 456.2 1091.2 462.8 1091.3 451.1 1091.4 458 1091.5 434.9 1091.5 472.9 1091.6 452.2 1091.7 475.1 1091.8 461.8 1091.9 463.6 1091.9 464.5 1092 447.4 1092.1 471.5 1092.2 453.4 1092.2 477.6 1092.3 472.1 1092.4 466.6 1092.5 473.9 1092.5 457.9 1092.6 466.3 1092.7 479.5 1092.8 449.9 1092.8 446.2 1092.9 457.1 1093 460.2 1093.1 448.3 1093.1 451 1093.2 477.9 1093.3 456.3 1093.4 448.3 1093.4 449.6 1093.5 462.5 1093.6 449.8 1093.7 459 1093.7 461.1 1093.8 457.8 1093.9 459.9 1094 475.3 1094 439.5 1094.1 479.5 1094.2 450.1 1094.3 442 1094.3 470.7 1094.4 462.1 1094.5 461 1094.5 450.7 1094.6 471.5 1094.7 453.6 1094.8 468.5 1094.8 451 1094.9 462.2 1095 465 1095.1 455.6 1095.1 459 1095.2 443.9 1095.3 464.8 1095.3 466.8 1095.4 448.2 1095.5 461.3 1095.6 468.8 1095.6 445.9 1095.7 475.3 1095.8 477.9 1095.9 442.8 1095.9 451.6 1096 445 1096.1 451.7 1096.1 445.1 1096.2 459.2 1096.3 451.6 1096.4 453.2 1096.4 458.2 1096.5 455.4 1096.6 471.7 1096.6 468.1 1096.7 446.4 1096.8 450.6 1096.9 437.3 1096.9 454 1097 446.1 1097.1 466.9 1097.1 471.1 1097.2 479.5 1097.3 450.1 1097.4 441.5 1097.4 469.8 1097.5 456.5 1097.6 479.5 1097.6 455.9 1097.7 453.4 1097.8 444.1 1097.9 479.5 1097.9 459.7 1098 457.4 1098.1 457.3 1098.1 470.4 1098.2 474.4 1098.3 458.5 1098.3 448.8 1098.4 456.3 1098.5 479.5 1098.6 456.3 1098.6 465.1 1098.7 461.2 1098.8 458 1098.8 461.8 1098.9 451.1 1099 461.1 1099 477 1099.1 444.4 1099.2 455 1099.2 478.6 1099.3 479.5 1099.4 438.2 1099.5 463.7 1099.5 463.8 1099.6 475.1 1099.7 458.1 1099.7 446.8 1099.8 452.8 1099.9 467.3 1099.9 468 1100 449.6 1100.1 464.2 1100.1 464.8 1100.2 464.8 1100.3 439.5 1100.3 457.1 1100.4 453.5 1100.5 462.4 1100.5 453.8 1100.6 446.6 1100.7 465.3 1100.7 452.3 1100.8 471.3 1100.9 452.8 1101 460.5 1101 472.4 1101.1 446 1101.2 468 1101.2 443.4 1101.3 479.5 1101.4 439.8 1101.4 467.6 1101.5 454.7 1101.6 448.5 1101.6 455.5 1101.7 458.9 1101.8 456.1 1101.8 446.2 1101.9 459.6 1102 452.5 1102 479.5 1102.1 455.1 1102.2 456.7 1102.2 450.1 1102.3 479.5 1102.4 453.2 1102.4 464.1 1102.5 474 1102.6 455.4 1102.6 469.1 1102.7 451.8 1102.8 445.5 1102.8 441.4 1102.9 457.1 1102.9 477.5 1103 449.2 1103.1 456.8 1103.1 469.5 1103.2 451.6 1103.3 447.3 1103.3 459.3 1103.4 456.3 1103.5 479.5 1103.5 479.5 1103.6 450.3 1103.7 460.7 1103.7 456 1103.8 440.5 1103.9 456.8 1103.9 479.5 1104 452.4 1104.1 461.6 1104.1 466.7 1104.2 442.8 1104.2 479.5 1104.3 445.3 1104.4 452.3 1104.4 466.9 1104.5 438.7 1104.6 454.6 1104.6 446 1104.7 457.7 1104.8 438.1 1104.8 447 1104.9 449.7 1105 443.8 1105 444.3 1105.1 448.7 1105.1 459.1 1105.2 446.4 1105.3 472.8 1105.3 455.8 1105.4 450.6 1105.5 450.2 1105.5 474.2 1105.6 441.4 1105.7 468.1 1105.7 444.6 1105.8 479.5 1105.8 455.5 1105.9 461.8 1106 476.1 1106 444.7 1106.1 442.6 1106.2 465.7 1106.2 461.4 1106.3 466.9 1106.3 451.3 1106.4 458.2 1106.5 448.2 1106.5 456.3 1106.6 451.4 1106.7 461.3 1106.7 451.9 1106.8 451.2 1106.8 463.4 1106.9 443.8 1107 471.3 1107 458.1 1107.1 449.6 1107.2 445.2 1107.2 458.5 1107.3 458.4 1107.3 466.7 1107.4 454.2 1107.5 455.4 1107.5 478.9 1107.6 451 1107.7 479.5 1107.7 478.9 1107.8 479.5 1107.8 479.5 1107.9 450.5 1108 472.1 1108 462.1 1108.1 448.6 1108.1 479.5 1108.2 463.5 1108.3 471.7 1108.3 460.1 1108.4 443.3 1108.5 475.8 1108.5 447.6 1108.6 450.5 1108.6 462.2 1108.7 448.2 1108.8 456.8 1108.8 466.3 1108.9 444.1 1108.9 463.9 1109 444.5 1109.1 457.2 1109.1 463.4 1109.2 465 1109.2 440.7 1109.3 448 1109.4 479.5 1109.4 454.5 1109.5 455.6 1109.5 454 1109.6 465.4 1109.7 467.5 1109.7 463.4 1109.8 454.8 1109.8 460.3 1109.9 458.4 1110 447.9 1110 479.5 1110.1 479.5 1110.1 469.5 1110.2 479.5 1110.3 456.8 1110.3 473.6 1110.4 449.6 1110.4 467.5 1110.5 466.2 1110.6 479.5 1110.6 473.1 1110.7 477.1 1110.7 450.5 1110.8 470 1110.9 457 1110.9 451.9 1111 453.6 1111 470.7 1111.1 473.8 1111.1 473.9 1111.2 464 1111.3 447 1111.3 446.5 1111.4 460.1 1111.4 448.5 1111.5 452.6 1111.6 444.1 1111.6 446.4 1111.7 466.1 1111.7 448.9 1111.8 474.1 1111.9 452.3 1111.9 474.2 1112 451.5 1112 450.3 1112.1 454.3 1112.1 436.5 1112.2 455.6 1112.3 453.8 1112.3 436.6 1112.4 475.2 1112.4 453.7 1112.5 430 1112.5 479.5 1112.6 449 1112.7 449.8 1112.7 438.4 1112.8 443.8 1112.8 465.6 1112.9 460.4 1112.9 457.7 1113 449.5 1113.1 450.8 1113.1 479.5 1113.2 453.5 1113.2 479.5 1113.3 477.6 1113.4 444.9 1113.4 474 1113.5 437.9 1113.5 465.6 1113.6 471.1 1113.6 464.9 1113.7 459.2 1113.7 471.3 1113.8 446.1 1113.9 458.8 1113.9 450.1 1114 454.2 1114 447.5 1114.1 465.4 1114.1 459.9 1114.2 469.1 1114.3 462 1114.3 460.9 1114.4 479.5 1114.4 471.2 1114.5 459.7 1114.5 451.9 1114.6 479.5 1114.7 453.3 1114.7 443.7 1114.8 452.1 1114.8 465.3 1114.9 479.5 1114.9 462.6 1115 463.3 1115 479.5 1115.1 468.9 1115.2 455.6 1115.2 456.1 1115.3 467.9 1115.3 451.5 1115.4 444 1115.4 461.5 1115.5 470.8 1115.5 449.3 1115.6 464.1 1115.7 477.9 1115.7 444.8 1115.8 445.2 1115.8 457 1115.9 452 1115.9 479.5 1116 479.5 1116 455.5 1116.1 469.7 1116.2 461.9 1116.2 446.6 1116.3 479.5 1116.3 446.6 1116.4 442.2 1116.4 455.6 1116.5 437 1116.5 456.5 1116.6 454.3 1116.6 479.5 1116.7 454.4 1116.8 473.7 1116.8 468.9 1116.9 460.1 1116.9 448.8 1117 451 1117 456.8 1117.1 453.8 1117.1 462.4 1117.2 457.3 1117.2 451.5 1117.3 460.8 1117.4 479.5 1117.4 447.5 1117.5 451.9 1117.5 435.9 1117.6 443 1117.6 440.7 1117.7 454.6 1117.7 472.5 1117.8 464.5 1117.8 479.5 1117.9 472.6 1117.9 460 1118 459.8 1118.1 435.9 1118.1 453.3 1118.2 449.4 1118.2 461.2 1118.3 441.3 1118.3 458.4 1118.4 453 1118.4 456.7 1118.5 453.9 1118.5 443.3 1118.6 466 1118.6 469.9 1118.7 460.3 1118.7 443.9 1118.8 460.4 1118.9 475.3 1118.9 479.5 1119 467.4 1119 439.8 1119.1 476.1 1119.1 462.9 1119.2 449.8 1119.2 479.5 1119.3 471.6 1119.3 477.8 1119.4 448.8 1119.4 459.5 1119.5 453 1119.5 450.4 1119.6 467.5 1119.6 460.9 1119.7 451.5 1119.7 458.2 1119.8 479.5 1119.9 459.1 1119.9 479.5 1120 459 1120 479.5 1120.1 438.1 1120.1 455.5 1120.2 458.5 1120.2 465.6 1120.3 479.5 1120.3 461.1 1120.4 456 1120.4 461.5 1120.5 457.8 1120.5 464.5 1120.6 479.5 1120.6 435.9 1120.7 451 1120.7 475.6 1120.8 440.6 1120.8 469 1120.9 438.2 1120.9 462 1121 469.6 1121 448.3 1121.1 452.9 1121.2 447.9 1121.2 464.4 1121.3 457.6 1121.3 460.3 1121.4 451.1 1121.4 459.6 1121.5 479.5 1121.5 468.3 1121.6 479.5 1121.6 448.6 1121.7 457.1 1121.7 452.9 1121.8 451.7 1121.8 469.7 1121.9 446 1121.9 458.5 1122 467.9 1122 479.5 1122.1 436.5 1122.1 449.3 1122.2 456.3 1122.2 479.5 1122.3 445.5 1122.3 472.3 1122.4 453.2 1122.4 458.1 1122.5 479.5 1122.5 440.7 1122.6 451.1 1122.6 445.2 1122.7 444.3 1122.7 450.2 1122.8 464.1 1122.8 459.2 1122.9 443.7 1122.9 469.5 1123 456.7 1123 444.6 1123.1 470.7 1123.1 470.8 1123.2 447.4 1123.2 479.5 1123.3 470 1123.3 447.8 1123.4 430.1 1123.4 474.5 1123.5 471.1 1123.5 442.5 1123.6 467.3 1123.6 467.7 1123.7 461.1 1123.7 471.5 1123.8 479.5 1123.8 450.9 1123.9 471.6 1123.9 479.5 1124 450.4 1124 463.2 1124.1 463.2 1124.1 472.8 1124.2 458.6 1124.2 449.2 1124.3 448.4 1124.3 457.7 1124.4 444.1 1124.4 473.7 1124.5 476.6 1124.5 448.1 1124.6 463.7 1124.6 462.6 1124.7 443.5 1124.7 467.9 1124.8 467.2 1124.8 450.1 1124.9 442.4 1124.9 449.3 1125 467.4 1125 455.1 1125.1 470.2 1125.1 445 1125.2 442.8 1125.2 451.4 1125.3 475.5 1125.3 445.1 1125.4 441 1125.4 466.4 1125.4 442 1125.5 462.3 1125.5 441.5 1125.6 448.1 1125.6 462.1 1125.7 474.8 1125.7 453.2 1125.8 454.5 1125.8 437.7 1125.9 451 1125.9 447.9 1126 468.3 1126 464.3 1126.1 468.1 1126.1 457.1 1126.2 463.6 1126.2 443.6 1126.3 452.4 1126.3 449.5 1126.4 449.1 1126.4 465.5 1126.5 446.9 1126.5 450.5 1126.6 449.1 1126.6 473.8 1126.7 461 1126.7 455.4 1126.7 452.2 1126.8 479.5 1126.8 479.5 1126.9 454.3 1126.9 458.2 1127 473.6 1127 448.2 1127.1 448.3 1127.1 442.4 1127.2 456 1127.2 467 1127.3 444.7 1127.3 453.7 1127.4 479.5 1127.4 455.3 1127.5 452.2 1127.5 471.6 1127.6 476.5 1127.6 452 1127.6 443.3 1127.7 460.8 1127.7 465.4 1127.8 479.5 1127.8 461.7 1127.9 449.8 1127.9 456.3 1128 449.1 1128 454.1 1128.1 454.8 1128.1 478.9 1128.2 478.1 1128.2 479.5 1128.3 455.1 1128.3 479.5 1128.4 443.8 1128.4 479.5 1128.4 460.8 1128.5 474.4 1128.5 453 1128.6 479.5 1128.6 436.7 1128.7 472.2 1128.7 470 1128.8 451.8 1128.8 470.7 1128.9 446.6 1128.9 465.9 1129 454.7 1129 452.9 1129 446 1129.1 468.7 1129.1 464.8 1129.2 441.4 1129.2 479.5 1129.3 446.8 1129.3 451.7 1129.4 453 1129.4 458.3 1129.5 476.1 1129.5 479.5 1129.6 460.4 1129.6 451.4 1129.6 442.3 1129.7 440.2 1129.7 456.3 1129.8 458.5 1129.8 453.9 1129.9 479.5 1129.9 452.9 1130 450.9 1130 453 1130.1 444.9 1130.1 479.5 1130.2 458.8 1130.2 457 1130.2 453.2 1130.3 447.7 1130.3 449.7 1130.4 455.4 1130.4 453.8 1130.5 479.5 1130.5 457.7 1130.6 446.2 1130.6 439.1 1130.7 444.4 1130.7 450.7 1130.7 467.4 1130.8 475.8 1130.8 447.1 1130.9 467.3 1130.9 453.6 1131 456.8 1131 456.6 1131.1 438.2 1131.1 439.9 1131.1 461.6 1131.2 462.6 1131.2 451.7 1131.3 479.5 1131.3 469.8 1131.4 449.2 1131.4 439.9 1131.5 457.3 1131.5 461.1 1131.6 446.6 1131.6 438.2 1131.6 455 1131.7 437.3 1131.7 464.8 1131.8 459.9 1131.8 448.4 1131.9 453.6 1131.9 446.9 1132 445.2 1132 445.1 1132 469.4 1132.1 453.9 1132.1 463.7 1132.2 450.5 1132.2 468.8 1132.3 458.7 1132.3 461 1132.4 451.9 1132.4 457.4 1132.4 445.4 1132.5 479.5 1132.5 461.7 1132.6 456.4 1132.6 460.3 1132.7 441.6 1132.7 450.1 1132.7 446.7 1132.8 471.3 1132.8 434.3 1132.9 453.5 1132.9 473.5 1133 467.2 1133 463.7 1133.1 449 1133.1 446.7 1133.1 463 1133.2 448.9 1133.2 463.9 1133.3 450.5 1133.3 465.9 1133.4 457.7 1133.4 469.2 1133.5 479.5 1133.5 451.4 1133.5 479.5 1133.6 433.5 1133.6 474.3 1133.7 436.6 1133.7 456.7 1133.8 451.6 1133.8 466.3 1133.8 449.3 1133.9 445.8 1133.9 467.1 1134 456.9 1134 465.5 1134.1 454.8 1134.1 437.3 1134.1 466.4 1134.2 446.1 1134.2 454.2 1134.3 427.9 1134.3 447.5 1134.4 461.2 1134.4 465.9 1134.4 460 1134.5 453.3 1134.5 464.3 1134.6 461.3 1134.6 445.7 1134.7 456.3 1134.7 458.5 1134.7 464 1134.8 445.3 1134.8 449.1 1134.9 450.1 1134.9 441.1 1135 450.2 1135 464 1135 457.7 1135.1 444.4 1135.1 464.1 1135.2 442.1 1135.2 465.1 1135.3 443.4 1135.3 441.1 1135.3 447.1 1135.4 455.5 1135.4 447.7 1135.5 474.7 1135.5 479.5 1135.6 448.1 1135.6 465 1135.6 462.4 1135.7 457 1135.7 447.2 1135.8 479.5 1135.8 479.5 1135.9 434 1135.9 449.6 1135.9 449.3 1136 445.2 1136 452.7 1136.1 476.2 1136.1 435.6 1136.1 470.4 1136.2 448.9 1136.2 434 1136.3 476.4 1136.3 447.7 1136.4 445.7 1136.4 441.9 1136.4 450.7 1136.5 442.1 1136.5 444.5 1136.6 446.9 1136.6 457.5 1136.7 453.1 1136.7 448.7 1136.7 455.7 1136.8 466.2 1136.8 463.6 1136.9 449.9 1136.9 478.7 1136.9 467.2 1137 456.9 1137 454 1137.1 449.4 1137.1 442.6 1137.2 474.7 1137.2 458.6 1137.2 441 1137.3 479.5 1137.3 474.8 1137.4 436.6 1137.4 462.4 1137.4 446.4 1137.5 455.9 1137.5 470.1 1137.6 450 1137.6 454.7 1137.6 460.8 1137.7 444.8 1137.7 459.2 1137.8 452.3 1137.8 479.5 1137.9 444.6 1137.9 462.8 1137.9 437.2 1138 447.6 1138 441.8 1138.1 443.1 1138.1 455.6 1138.1 444.1 1138.2 467.3 1138.2 440.8 1138.3 459 1138.3 472.2 1138.3 442.2 1138.4 445.6 1138.4 465.5 1138.5 453.7 1138.5 479.5 1138.5 449.5 1138.6 451.4 1138.6 479.5 1138.7 449.7 1138.7 479.5 1138.8 475.1 1138.8 445 1138.8 456.1 1138.9 479.5 1138.9 441.7 1139 471.1 1139 466 1139 464.6 1139.1 458.1 1139.1 440.8 1139.2 479.5 1139.2 440.9 1139.2 466.5 1139.3 463.2 1139.3 448.8 1139.4 461.4 1139.4 451.7 1139.4 464.6 1139.5 437.3 1139.5 479.5 1139.6 450.8 1139.6 467.7 1139.6 453.6 1139.7 468.3 1139.7 448.2 1139.8 456 1139.8 435.4 1139.8 454.1 1139.9 439.6 1139.9 471.8 1140 461.1 1140 452.1 1140 479.5 1140.1 479.5 1140.1 479.5 1140.2 439.8 1140.2 462.2 1140.2 463.3 1140.3 458.1 1140.3 434 1140.4 479.2 1140.4 452.4 1140.4 457.7 1140.5 468.3 1140.5 447.3 1140.6 435.8 1140.6 479.1 1140.6 447.1 1140.7 436.9 1140.7 442.3 1140.8 479.5 1140.8 463.9 1140.8 445.1 1140.9 442.7 1140.9 475.6 1141 460.4 1141 457.2 1141 442 1141.1 451.6 1141.1 479.5 1141.1 430.2 1141.2 451.7 1141.2 438.1 1141.3 479.5 1141.3 440.8 1141.3 479.5 1141.4 470.2 1141.4 463.4 1141.5 436.9 1141.5 461.7 1141.5 454.1 1141.6 454 1141.6 442.6 1141.7 454.7 1141.7 467.4 1141.7 442 1141.8 473.2 1141.8 451.7 1141.9 446.8 1141.9 446 1141.9 452.9 1142 459.6 1142 456.6 1142 474.6 1142.1 454.6 1142.1 454.6 1142.2 479.5 1142.2 445.1 1142.2 433.9 1142.3 448.8 1142.3 448.3 1142.4 441.6 1142.4 451.6 1142.4 436.1 1142.5 478.5 1142.5 453.7 1142.6 473.4 1142.6 461.6 1142.6 463.2 1142.7 464.7 1142.7 447.9 1142.7 463.1 1142.8 444.7 1142.8 456 1142.9 457.4 1142.9 465.6 1142.9 443.3 1143 449.2 1143 468.7 1143.1 467.4 1143.1 479.5 1143.1 441.2 1143.2 444.8 1143.2 440.7 1143.2 462.8 1143.3 463.9 1143.3 459.4 1143.4 465.8 1143.4 454.6 1143.4 456.2 1143.5 478.4 1143.5 459.4 1143.5 459.7 1143.6 457.1 1143.6 453.8 1143.7 464.5 1143.7 456.5 1143.7 441.6 1143.8 451.6 1143.8 451.5 1143.9 451.8 1143.9 456.1 1143.9 449.6 1144 450.5 1144 451.6 1144 449.9 1144.1 479.5 1144.1 439.8 1144.2 433.7 1144.2 462.6 1144.2 450.6 1144.3 452.3 1144.3 457.2 1144.3 449.7 1144.4 445.7 1144.4 433.4 1144.5 472.7 1144.5 479.5 1144.5 447.2 1144.6 452.8 1144.6 448.4 1144.6 437.8 1144.7 474.6 1144.7 469.4 1144.8 445.7 1144.8 446.1 1144.8 461.4 1144.9 466.7 1144.9 452.9 1144.9 450.3 1145 445.4 1145 466.7 1145.1 471.6 1145.1 471.1 1145.1 440.8 1145.2 457.1 1145.2 479.5 1145.2 462.2 1145.3 452.5 1145.3 442.1 1145.4 437.9 1145.4 463 1145.4 438.4 1145.5 467.4 1145.5 459.9 1145.5 453 1145.6 474.4 1145.6 479.5 1145.7 457.9 1145.7 440.1 1145.7 456.9 1145.8 451.3 1145.8 445.9 1145.8 479.4 1145.9 462.8 1145.9 441.1 1145.9 445.1 1146 448.8 1146 456.3 1146.1 448.2 1146.1 451.8 1146.1 467.6 1146.2 443.5 1146.2 462.3 1146.2 448.4 1146.3 479.5 1146.3 479.5 1146.4 448.3 1146.4 457.4 1146.4 440.5 1146.5 450.9 1146.5 458.1 1146.5 458.7 1146.6 448.7 1146.6 435.6 1146.6 441.1 1146.7 455.8 1146.7 443 1146.8 447.6 1146.8 457.9 1146.8 475.3 1146.9 454.2 1146.9 445.9 1146.9 456.6 1147 446.6 1147 465.5 1147 442.4 1147.1 446.1 1147.1 451.7 1147.2 476.2 1147.2 442.7 1147.2 443.7 1147.3 441.4 1147.3 444.5 1147.3 448.3 1147.4 450.3 1147.4 464.2 1147.4 450.5 1147.5 452.8 1147.5 450.3 1147.6 465 1147.6 475.5 1147.6 451.2 1147.7 478 1147.7 445.7 1147.7 479.5 1147.8 454.4 1147.8 460.4 1147.8 449.8 1147.9 446.3 1147.9 441.4 1147.9 473.4 1148 449.1 1148 461.1 1148.1 452.3 1148.1 454.4 1148.1 444.1 1148.2 443.1 1148.2 448.3 1148.2 460.3 1148.3 455 1148.3 428.7 1148.3 461.6 1148.4 451.3 1148.4 438.1 1148.4 445.9 1148.5 444.3 1148.5 468 1148.6 455.2 1148.6 448 1148.6 445.5 1148.7 446.9 1148.7 446.5 1148.7 448.6 1148.8 465.8 1148.8 465.7 1148.8 461 1148.9 473.3 1148.9 459 1148.9 440.3 1149 436.3 1149 442.5 1149.1 445.8 1149.1 454.4 1149.1 467.9 1149.2 456.4 1149.2 451.1 1149.2 445.2 1149.3 479.5 1149.3 463.6 1149.3 448.4 1149.4 436.3 1149.4 479.5 1149.4 445.6 1149.5 469.8 1149.5 440.5 1149.5 458.9 1149.6 448.8 1149.6 473.6 1149.7 446.9 1149.7 439.7 1149.7 443.7 1149.8 466.7 1149.8 479.5 1149.8 458.5 1149.9 460.1 1149.9 446.4 1149.9 446.1 1150 438.9 1150 479.5 1150 436 1150.1 457.3 1150.1 448.5 1150.1 443.2 1150.2 451.2 1150.2 479.2 1150.2 445.3 1150.3 442.3 1150.3 457.9 1150.3 459 1150.4 453.6 1150.4 442.9 1150.5 472 1150.5 440 1150.5 442.7 1150.6 445 1150.6 453.7 1150.6 452.5 1150.7 455.1 1150.7 462.1 1150.7 474.1 1150.8 452.2 1150.8 435.8 1150.8 468.3 1150.9 433.2 1150.9 447.5 1150.9 441.4 1151 456.8 1151 465 1151 440.8 1151.1 446.7 1151.1 469.9 1151.1 460.3 1151.2 439.9 1151.2 460.2 1151.2 465.8 1151.3 450.2 1151.3 441.9 1151.4 459 1151.4 447.4 1151.4 441 1151.5 442.2 1151.5 450 1151.5 440.7 1151.6 449.5 1151.6 454.9 1151.6 454.9 1151.7 450 1151.7 466.1 1151.7 438.8 1151.8 447.7 1151.8 479.5 1151.8 470.9 1151.9 477.4 1151.9 464 1151.9 454.3 1152 465.3 1152 455.6 1152 440.2 1152.1 445.3 1152.1 439.2 1152.1 471.9 1152.2 447.4 1152.2 450.1 1152.2 454.3 1152.3 439.4 1152.3 460.9 1152.3 465.7 1152.4 465.8 1152.4 472.5 1152.4 447.3 1152.5 441.3 1152.5 463.7 1152.5 460.3 1152.6 448.9 1152.6 448.1 1152.6 441.6 1152.7 468.2 1152.7 451.7 1152.7 466.8 1152.8 447.9 1152.8 447.3 1152.8 453.4 1152.9 462.8 1152.9 472.6 1152.9 448.3 1153 460.3 1153 449.9 1153 470.5 1153.1 463.6 1153.1 454.8 1153.1 448.6 1153.2 445.8 1153.2 472.8 1153.2 466 1153.3 446.8 1153.3 438.4 1153.3 443.1 1153.4 479.5 1153.4 435.3 1153.4 466.5 1153.5 453.9 1153.5 454.7 1153.5 454.2 1153.6 450 1153.6 454.8 1153.6 438.6 1153.7 477.1 1153.7 439.3 1153.7 440.9 1153.8 459.3 1153.8 457.9 1153.8 466.3 1153.9 460.1 1153.9 478.8 1153.9 436.2 1154 431.4 1154 444.5 1154 464.5 1154.1 441.4 1154.1 453.9 1154.1 464 1154.2 441.6 1154.2 453.7 1154.2 474.5 1154.3 462.7 1154.3 449.6 1154.3 452.1 1154.4 445.8 1154.4 479.5 1154.4 464.7 1154.5 459.5 1154.5 446.6 1154.5 461.9 1154.6 452.3 1154.6 465.6 1154.6 448.5 1154.7 472.3 1154.7 459.7 1154.7 451.2 1154.8 454.9 1154.8 466 1154.8 453.7 1154.9 479.5 1154.9 430.3 1154.9 474 1155 461 1155 452.4 1155 469.3 1155.1 441.2 1155.1 447.6 1155.1 461 1155.2 467.3 1155.2 448.7 1155.2 479.5 1155.3 458.1 1155.3 435.6 1155.3 440.1 1155.4 437.7 1155.4 455.1 1155.4 447.1 1155.5 445.1 1155.5 451 1155.5 437.8 1155.6 475.3 1155.6 468.3 1155.6 454.7 1155.6 450.9 1155.7 446.6 1155.7 456.2 1155.7 447.8 1155.8 479.5 1155.8 479.5 1155.8 461.5 1155.9 467.4 1155.9 437.6 1155.9 440 1156 447.7 1156 440.1 1156 450.1 1156.1 479.5 1156.1 468 1156.1 479.5 1156.2 443.7 1156.2 443.7 1156.2 433.3 1156.3 445.4 1156.3 436.3 1156.3 453.5 1156.4 446.3 1156.4 459 1156.4 454.6 1156.5 456 1156.5 446.2 1156.5 461.8 1156.5 459.7 1156.6 460.8 1156.6 451.6 1156.6 451.4 1156.7 445.8 1156.7 435 1156.7 451.4 1156.8 456.6 1156.8 442.4 1156.8 470 1156.9 471.8 1156.9 469.4 1156.9 466.5 1157 452.1 1157 442 1157 445.3 1157.1 461.9 1157.1 479.5 1157.1 439.3 1157.2 429.7 1157.2 447.8 1157.2 447.7 1157.2 455.9 1157.3 439.3 1157.3 468.6 1157.3 447.3 1157.4 475.1 1157.4 447.1 1157.4 446.3 1157.5 441.9 1157.5 479.5 1157.5 455.5 1157.6 467.1 1157.6 436.6 1157.6 453.9 1157.7 461.6 1157.7 479.5 1157.7 479.4 1157.8 438.9 1157.8 448.4 1157.8 479.5 1157.8 453.6 1157.9 479.5 1157.9 444.6 1157.9 433.3 1158 479.5 1158 444.9 1158 454.4 1158.1 448 1158.1 455 1158.1 478.8 1158.2 479.5 1158.2 471.4 1158.2 444.7 1158.3 466.7 1158.3 432.3 1158.3 449.7 1158.3 479.5 1158.4 444.6 1158.4 448.1 1158.4 455.2 1158.5 444 1158.5 460.3 1158.5 457.9 1158.6 438.3 1158.6 476.6 1158.6 437 1158.7 459.8 1158.7 447.5 1158.7 440.5 1158.8 437.4 1158.8 479.5 1158.8 465.2 1158.8 451 1158.9 464.9 1158.9 479.5 1158.9 477.5 1159 453.4 1159 445.2 1159 452.9 1159.1 479.5 1159.1 461.3 1159.1 458.5 1159.2 468.3 1159.2 449.3 1159.2 454.3 1159.2 468.7 1159.3 442.6 1159.3 469.6 1159.3 433.1 1159.4 453.5 1159.4 454.8 1159.4 440.6 1159.5 476.7 1159.5 450.3 1159.5 442 1159.6 449.4 1159.6 455.4 1159.6 449.9 1159.6 427.8 1159.7 438.1 1159.7 460.4 1159.7 439.9 1159.8 444.4 1159.8 465.6 1159.8 469.8 1159.9 471.7 1159.9 441.6 1159.9 429 1160 462.4 1160 455.6 1160 447.9 1160 432.1 1160.1 449.9 1160.1 443.8 1160.1 455.2 1160.2 479.5 1160.2 442.8 1160.2 437.1 1160.3 459.5 1160.3 438.8 1160.3 443.3 1160.4 450.2 1160.4 479.5 1160.4 446.6 1160.4 446.3 1160.5 451.3 1160.5 441.1 1160.5 449 1160.6 459.7 1160.6 446.5 1160.6 464.8 1160.7 441.9 1160.7 438.4 1160.7 456.6 1160.7 450.5 1160.8 476 1160.8 438.6 1160.8 461.9 1160.9 458.3 1160.9 447.9 1160.9 439.6 1161 456 1161 462.5 1161 451.1 1161 451.1 1161.1 459 1161.1 455.9 1161.1 449.6 1161.2 441.9 1161.2 450.8 1161.2 453.7 1161.3 473.1 1161.3 479.5 1161.3 453.9 1161.3 446.6 1161.4 443.2 1161.4 456.7 1161.4 461.4 1161.5 444 1161.5 459.1 1161.5 479.5 1161.6 448.5 1161.6 479.4 1161.6 449.9 1161.6 457.5 1161.7 470 1161.7 442.4 1161.7 447.1 1161.8 479.5 1161.8 436.3 1161.8 445.8 1161.9 451.2 1161.9 461.7 1161.9 456.6 1161.9 477.7 1162 458.2 1162 426.3 1162 436.6 1162.1 434 1162.1 449.7 1162.1 433 1162.2 452.8 1162.2 456.6 1162.2 442.4 1162.2 469 1162.3 449.1 1162.3 479.5 1162.3 447.4 1162.4 456.1 1162.4 453.3 1162.4 444.4 1162.4 463.6 1162.5 428.2 1162.5 443.9 1162.5 446.2 1162.6 471.4 1162.6 451.9 1162.6 434 1162.7 445.5 1162.7 455.7 1162.7 465.4 1162.7 438.6 1162.8 463.5 1162.8 448.3 1162.8 452.6 1162.9 449.3 1162.9 449.8 1162.9 479.5 1162.9 475.9 1163 475.7 1163 461.1 1163 459.4 1163.1 439.9 1163.1 433.8 1163.1 466.9 1163.2 458.2 1163.2 456.5 1163.2 445.9 1163.2 444.4 1163.3 476.1 1163.3 452.9 1163.3 432 1163.4 446.7 1163.4 447 1163.4 436.2 1163.4 479.5 1163.5 473.7 1163.5 465.7 1163.5 428.1 1163.6 449.1 1163.6 438.6 1163.6 460.6 1163.7 465.3 1163.7 464" stroke="#c62e3e" stroke-width="1.0" opacity="0.87"/><path d="M992.3 402.0V443.9M1022.5 389.4V443.7M1060.5 404.9V442.3M1085.6 417.8V439.5M1095.5 428.4V438.3M1104.3 399.1V437.3M1119.3 410.7V435.6M1125.7 423.4V434.8M1137.2 418.1V433.5M1142.4 409.7V432.9M1147.2 408.9V432.4M1151.7 418.1V431.8M1156.0 409.7V431.4M1160.0 394.4V430.9" stroke="#8a3c56" stroke-width="1.3" fill="none"/><path d="M940.8 69.2V410" stroke="#785262" stroke-width="1.7" fill="none"/></g>
<text transform="translate(10.55,20) scale(0.9994,1)" font-family="Liberation Sans, sans-serif" font-size="15" font-weight="bold" fill="#141414" stroke="#141414" stroke-width="0.25">Scope</text>
<text transform="translate(64.16,18.2) scale(1.1402,1)" font-family="Liberation Sans, sans-serif" font-size="11.8" fill="#2a353b" stroke="#2a353b" stroke-width="0.45">X:</text>
<text transform="translate(85.66,18.5) scale(0.9909,1)" font-family="Liberation Sans, sans-serif" font-size="11.6" fill="#2a2a2a" stroke="#2a2a2a" stroke-width="0.25">s</text>
<path d="M146.3 13.9h5.6l-2.8 2.7z" fill="#111"/>
<text transform="translate(159.52,18.2) scale(0.9575,1)" font-family="Liberation Sans, sans-serif" font-size="11.8" fill="#2a353b" stroke="#2a353b" stroke-width="0.45">Y:</text>
<text transform="translate(179.34,18.6) scale(0.9871,1)" font-family="Liberation Sans, sans-serif" font-size="11.6" fill="#2a2a2a" stroke="#2a2a2a" stroke-width="0.25">V</text>
<path d="M239.8 13.9h5.6l-2.8 2.7z" fill="#111"/>
<g transform="translate(253,6.7) scale(0.9750)"><rect width="16" height="16" fill="#2e4756"/><polygon points="8.00,2.10 9.65,4.03 12.17,3.83 11.97,6.35 13.90,8.00 11.97,9.65 12.17,12.17 9.65,11.97 8.00,13.90 6.35,11.97 3.83,12.17 4.03,9.65 2.10,8.00 4.03,6.35 3.83,3.83 6.35,4.03" fill="#fff" stroke="#fff" stroke-width="0.8" stroke-linejoin="round"/><circle cx="8" cy="8" r="1.9" fill="#2e4756"/></g>
<text transform="translate(272.61,17.1) scale(1.0512,1)" font-family="Liberation Serif, serif" font-size="12.4" fill="#0c0c0c" stroke="#0c0c0c" stroke-width="0.3">PA5II @BAL IN RL=8R 5W OUT</text>
<line x1="568.3" y1="8.7" x2="568.3" y2="21" stroke="#c2cacd" stroke-width="1"/><line x1="569.3" y1="8.7" x2="569.3" y2="21" stroke="#eef3f4" stroke-width="1"/>
<g transform="translate(575.8,8.7) scale(1.1,1)" fill="none" stroke="#232f6e" stroke-width="2"><path d="M4 0.95H0.95V10.6H10.75V7.6"/><path d="M5.2 5.9L10 1.6" stroke-width="1.7"/><path d="M6.2 0.3H11.6V5.4Z" fill="#232f6e" stroke="none"/></g>
<text transform="translate(604.74,20) scale(0.8775,1)" font-family="Liberation Sans, sans-serif" font-size="15" font-weight="bold" fill="#141414" stroke="#141414" stroke-width="0.25">FFT</text>
<text transform="translate(638.06,18.2) scale(1.1402,1)" font-family="Liberation Sans, sans-serif" font-size="11.8" fill="#2a353b" stroke="#2a353b" stroke-width="0.45">X:</text>
<text transform="translate(658.46,18.5) scale(1.1231,1)" font-family="Liberation Sans, sans-serif" font-size="11.6" fill="#222" stroke="#222" stroke-width="0.3">Hz</text>
<path d="M720 13.9h5.6l-2.8 2.7z" fill="#111"/>
<text transform="translate(733.30,18.2) scale(1.0125,1)" font-family="Liberation Sans, sans-serif" font-size="11.8" fill="#2a353b" stroke="#2a353b" stroke-width="0.45">Y:</text>
<text transform="translate(752.48,18.5) scale(1.1152,1)" font-family="Liberation Sans, sans-serif" font-size="11.6" fill="#222" stroke="#222" stroke-width="0.3">dBrA</text>
<path d="M813.6 13.9h5.6l-2.8 2.7z" fill="#111"/>
<g transform="translate(826.4,6.7) scale(0.9750)"><rect width="16" height="16" fill="#2e4756"/><polygon points="8.00,2.10 9.65,4.03 12.17,3.83 11.97,6.35 13.90,8.00 11.97,9.65 12.17,12.17 9.65,11.97 8.00,13.90 6.35,11.97 3.83,12.17 4.03,9.65 2.10,8.00 4.03,6.35 3.83,3.83 6.35,4.03" fill="#fff" stroke="#fff" stroke-width="0.8" stroke-linejoin="round"/><circle cx="8" cy="8" r="1.9" fill="#2e4756"/></g>
<line x1="1164.5" y1="8.7" x2="1164.5" y2="21" stroke="#c2cacd" stroke-width="1"/><line x1="1165.5" y1="8.7" x2="1165.5" y2="21" stroke="#eef3f4" stroke-width="1"/>
<g transform="translate(1171.2,8.7) scale(1.1,1)" fill="none" stroke="#232f6e" stroke-width="2"><path d="M4 0.95H0.95V10.6H10.75V7.6"/><path d="M5.2 5.9L10 1.6" stroke-width="1.7"/><path d="M6.2 0.3H11.6V5.4Z" fill="#232f6e" stroke="none"/></g>
<g transform="translate(5.7,524.7)"><rect width="15.4" height="15.4" fill="#2e4756"/><rect x="6.6" y="1.9" width="2.2" height="11.6" fill="#fff"/><rect x="1.9" y="6.6" width="11.6" height="2.2" fill="#fff"/></g>
<text x="24.80" y="536.2" font-family="Liberation Sans, sans-serif" font-size="12.4" fill="#1c1c1c" letter-spacing="0.440" stroke="#1c1c1c" stroke-width="0.22">Add Meter</text>
<path d="M92.6 531.2h5.6l-2.8 2.7z" fill="#111"/>
<line x1="105" y1="524" x2="105" y2="541" stroke="#c2cacd" stroke-width="1"/><line x1="106" y1="524" x2="106" y2="541" stroke="#eef3f4" stroke-width="1"/>
<g transform="translate(110,524.4)"><rect width="15.4" height="15.6" fill="#2e4756"/><rect x="1.4" y="3" width="8.8" height="11" rx="1.5" fill="#fff"/><rect x="1.4" y="5.6" width="8.8" height="0.9" fill="#2e4756" opacity="0.75"/><rect x="1.4" y="8.3" width="8.8" height="0.9" fill="#2e4756" opacity="0.75"/><rect x="1.4" y="11" width="8.8" height="0.9" fill="#2e4756" opacity="0.75"/><path d="M7.2 6H10.6V4.6L14.4 8.3 10.6 12V10.5H7.2Z" fill="#fff" stroke="#2e4756" stroke-width="0.8"/></g>
<text x="128.84" y="536.2" font-family="Liberation Sans, sans-serif" font-size="12.4" fill="#1c1c1c" letter-spacing="0.154" stroke="#1c1c1c" stroke-width="0.22">Save Meter Data</text>
<line x1="235" y1="524" x2="235" y2="541" stroke="#c2cacd" stroke-width="1"/><line x1="236" y1="524" x2="236" y2="541" stroke="#eef3f4" stroke-width="1"/>
<g transform="translate(239.4,524.4)"><rect width="15.7" height="15.6" fill="#2e4756"/><path d="M4.6 3.2L12.2 7.8 4.6 12.4Z" fill="#fff"/></g>
<text x="257.81" y="536.2" font-family="Liberation Sans, sans-serif" font-size="12.4" fill="#1c1c1c" letter-spacing="0.064" stroke="#1c1c1c" stroke-width="0.22">Regulate</text>
<path d="M1176.8 528.4h6.2l-3.1 4.4z" fill="#2a3f6c"/><path d="M1179.9 527.2l2.2 1.4-2.2 0z" fill="#2a3f6c"/><rect x="1173.6" y="535" width="12.4" height="1.7" fill="#2a3f6c"/>
<text transform="translate(10.00,565.1) scale(1.0427,1)" font-family="Liberation Sans, sans-serif" font-size="14.8" font-weight="bold" fill="#141414" stroke="#141414" stroke-width="0.25">RMS Level</text>
<text transform="translate(98.04,564.6) scale(1.0972,1)" font-family="Liberation Sans, sans-serif" font-size="11.6" fill="#222" stroke="#222" stroke-width="0.3">W</text>
<path d="M159.6 559.0h5.6l-2.8 2.7z" fill="#111"/>
<g transform="translate(171.1,552.1)"><rect width="15.6" height="15.6" fill="#2e4756"/><rect x="1.1" y="3.1" width="13" height="9.4" fill="#fff"/><rect x="1.1" y="5.1" width="13" height="5.3" fill="#6f8791"/><path d="M1.3 10.2L5.5 6.5 8.2 8.8 12.8 5.3" fill="none" stroke="#fff" stroke-width="0.9"/></g>
<path d="M188.6 559.0h5.6l-2.8 2.7z" fill="#111"/>
<g transform="translate(200.4,552.1) scale(0.9750)"><rect width="16" height="16" fill="#2e4756"/><polygon points="8.00,2.10 9.65,4.03 12.17,3.83 11.97,6.35 13.90,8.00 11.97,9.65 12.17,12.17 9.65,11.97 8.00,13.90 6.35,11.97 3.83,12.17 4.03,9.65 2.10,8.00 4.03,6.35 3.83,3.83 6.35,4.03" fill="#fff" stroke="#fff" stroke-width="0.8" stroke-linejoin="round"/><circle cx="8" cy="8" r="1.9" fill="#2e4756"/></g>
<line x1="533.5" y1="554.1" x2="533.5" y2="568.1" stroke="#c2cacd" stroke-width="1"/><line x1="534.5" y1="554.1" x2="534.5" y2="568.1" stroke="#eef3f4" stroke-width="1"/>
<g transform="translate(541.8,554.0) scale(1.0,1)" fill="none" stroke="#232f6e" stroke-width="2"><path d="M4 0.95H0.95V10.6H10.75V7.6"/><path d="M5.2 5.9L10 1.6" stroke-width="1.7"/><path d="M6.2 0.3H11.6V5.4Z" fill="#232f6e" stroke="none"/></g>
<g transform="translate(564.8,555.0)" fill="none" stroke="#263238" stroke-width="1.9" stroke-linecap="round"><path d="M0.9 0.9L10.3 9.1M10.3 0.9L0.9 9.1"/></g>
<text transform="translate(13.62,618.9) scale(0.8880,1)" font-family="Liberation Sans, sans-serif" font-size="31" fill="#111" stroke="#dce4e7" stroke-width="0.3">Ch1</text>
<path d="M141.5 602.2h10l-5.0 9.6z" fill="#000"/>
<rect x="153.8" y="577.1" width="420.8" height="41" fill="#000"/>
<text transform="translate(441.32,610.6) scale(0.8903,1)" font-family="Liberation Sans, sans-serif" font-size="33" fill="#27e52b" stroke="#27e52b" stroke-width="0.45">5.033</text>
<text transform="translate(540.25,610.6) scale(0.9204,1)" font-family="Liberation Sans, sans-serif" font-size="33" fill="#27e52b" stroke="#27e52b" stroke-width="0.45">W</text>
<rect x="153.8" y="618.2" width="420.8" height="17" fill="#bfc4c5"/><rect x="154.60000000000002" y="619.0" width="418.40000000000003" height="15.4" fill="#828282"/><rect x="154.60000000000002" y="618.9000000000001" width="346" height="15.5" fill="#0cef14"/><rect x="155.70000000000002" y="624.4000000000001" width="384.4" height="3.2" fill="#030303"/><rect x="153.8" y="635.1" width="420.8" height="1.0" fill="#101010"/>
<line x1="8.5" y1="636.6" x2="153.8" y2="636.6" stroke="#8b9294" stroke-width="1"/>
<rect x="153.8" y="636.1" width="420.8" height="2.7" fill="#e2e6e7"/>
<rect x="153.8" y="638.7" width="420.8" height="18.2" fill="#c3c7c8"/><rect x="154.60000000000002" y="639.5" width="418.40000000000003" height="16.5" fill="#828282"/><rect x="154.60000000000002" y="639.5" width="346" height="16.5" fill="#0cef14"/><rect x="155.70000000000002" y="646.5" width="384.4" height="3.2" fill="#030303"/><rect x="153.8" y="656.0" width="420.8" height="1.0" fill="#e9eded"/>
<text transform="translate(13.54,680.8) scale(0.9389,1)" font-family="Liberation Sans, sans-serif" font-size="31" fill="#111" stroke="#dce4e7" stroke-width="0.3">Ch2</text>
<path d="M141.5 664.4h10l-5.0 9.6z" fill="#000"/>
<rect x="153.8" y="657.1" width="420.8" height="41" fill="#000"/>
<text transform="translate(441.32,689.6) scale(0.8903,1)" font-family="Liberation Sans, sans-serif" font-size="33" fill="#27e52b" stroke="#27e52b" stroke-width="0.45">5.025</text>
<text transform="translate(540.25,689.6) scale(0.9204,1)" font-family="Liberation Sans, sans-serif" font-size="33" fill="#27e52b" stroke="#27e52b" stroke-width="0.45">W</text>
<text transform="translate(593.54,565.1) scale(1.0906,1)" font-family="Liberation Sans, sans-serif" font-size="14.8" font-weight="bold" fill="#141414" stroke="#141414" stroke-width="0.25">THD+N Ratio</text>
<text transform="translate(703.25,564.6) scale(1.1039,1)" font-family="Liberation Sans, sans-serif" font-size="11.6" fill="#222" stroke="#222" stroke-width="0.3">%</text>
<path d="M764.3000000000001 559.0h5.6l-2.8 2.7z" fill="#111"/>
<g transform="translate(775.8000000000001,552.1)"><rect width="15.6" height="15.6" fill="#2e4756"/><rect x="1.1" y="3.1" width="13" height="9.4" fill="#fff"/><rect x="1.1" y="5.1" width="13" height="5.3" fill="#6f8791"/><path d="M1.3 10.2L5.5 6.5 8.2 8.8 12.8 5.3" fill="none" stroke="#fff" stroke-width="0.9"/></g>
<path d="M793.3000000000001 559.0h5.6l-2.8 2.7z" fill="#111"/>
<g transform="translate(805.1,552.1) scale(0.9750)"><rect width="16" height="16" fill="#2e4756"/><polygon points="8.00,2.10 9.65,4.03 12.17,3.83 11.97,6.35 13.90,8.00 11.97,9.65 12.17,12.17 9.65,11.97 8.00,13.90 6.35,11.97 3.83,12.17 4.03,9.65 2.10,8.00 4.03,6.35 3.83,3.83 6.35,4.03" fill="#fff" stroke="#fff" stroke-width="0.8" stroke-linejoin="round"/><circle cx="8" cy="8" r="1.9" fill="#2e4756"/></g>
<line x1="1116.5" y1="554.1" x2="1116.5" y2="568.1" stroke="#c2cacd" stroke-width="1"/><line x1="1117.5" y1="554.1" x2="1117.5" y2="568.1" stroke="#eef3f4" stroke-width="1"/>
<g transform="translate(1124.8,554.0) scale(1.0,1)" fill="none" stroke="#232f6e" stroke-width="2"><path d="M4 0.95H0.95V10.6H10.75V7.6"/><path d="M5.2 5.9L10 1.6" stroke-width="1.7"/><path d="M6.2 0.3H11.6V5.4Z" fill="#232f6e" stroke="none"/></g>
<g transform="translate(1147.8,555.0)" fill="none" stroke="#263238" stroke-width="1.9" stroke-linecap="round"><path d="M0.9 0.9L10.3 9.1M10.3 0.9L0.9 9.1"/></g>
<text transform="translate(596.62,618.9) scale(0.8880,1)" font-family="Liberation Sans, sans-serif" font-size="31" fill="#111" stroke="#dce4e7" stroke-width="0.3">Ch1</text>
<path d="M724.5 602.2h10l-5.0 9.6z" fill="#000"/>
<rect x="736.8" y="577.1" width="419.6" height="41" fill="#000"/>
<text transform="translate(978.80,610.6) scale(0.9106,1)" font-family="Liberation Sans, sans-serif" font-size="33" fill="#27e52b" stroke="#27e52b" stroke-width="0.45">0.000264</text>
<text transform="translate(1125.13,610.6) scale(0.9239,1)" font-family="Liberation Sans, sans-serif" font-size="33" fill="#27e52b" stroke="#27e52b" stroke-width="0.45">%</text>
<rect x="736.8" y="618.2" width="419.6" height="17" fill="#bfc4c5"/><rect x="737.5999999999999" y="619.0" width="417.20000000000005" height="15.4" fill="#828282"/><rect x="737.5999999999999" y="618.9000000000001" width="31" height="15.5" fill="#0cef14"/><rect x="766.1999999999999" y="624.4000000000001" width="388.9" height="3.2" fill="#030303"/><rect x="736.8" y="635.1" width="419.6" height="1.0" fill="#101010"/>
<line x1="591.5" y1="636.6" x2="736.8" y2="636.6" stroke="#8b9294" stroke-width="1"/>
<rect x="736.8" y="636.1" width="419.6" height="2.7" fill="#e2e6e7"/>
<rect x="736.8" y="638.7" width="419.6" height="18.2" fill="#c3c7c8"/><rect x="737.5999999999999" y="639.5" width="417.20000000000005" height="16.5" fill="#828282"/><rect x="737.5999999999999" y="639.5" width="31" height="16.5" fill="#0cef14"/><rect x="766.1999999999999" y="646.5" width="388.9" height="3.2" fill="#030303"/><rect x="736.8" y="656.0" width="419.6" height="1.0" fill="#e9eded"/>
<text transform="translate(596.54,680.8) scale(0.9389,1)" font-family="Liberation Sans, sans-serif" font-size="31" fill="#111" stroke="#dce4e7" stroke-width="0.3">Ch2</text>
<path d="M724.5 664.4h10l-5.0 9.6z" fill="#000"/>
<rect x="736.8" y="657.1" width="419.6" height="41" fill="#000"/>
<text transform="translate(978.81,689.6) scale(0.9039,1)" font-family="Liberation Sans, sans-serif" font-size="33" fill="#27e52b" stroke="#27e52b" stroke-width="0.45">0.000273</text>
<text transform="translate(1125.13,689.6) scale(0.9239,1)" font-family="Liberation Sans, sans-serif" font-size="33" fill="#27e52b" stroke="#27e52b" stroke-width="0.45">%</text>
<text transform="translate(10.00,726.7) scale(1.0437,1)" font-family="Liberation Sans, sans-serif" font-size="14.8" font-weight="bold" fill="#141414" stroke="#141414" stroke-width="0.25">Frequency</text>
<text transform="translate(98.51,726.2) scale(1.0677,1)" font-family="Liberation Sans, sans-serif" font-size="11.6" fill="#222" stroke="#222" stroke-width="0.3">Hz</text>
<path d="M159.6 720.6h5.6l-2.8 2.7z" fill="#111"/>
<g transform="translate(171.1,713.7)"><rect width="15.6" height="15.6" fill="#2e4756"/><rect x="1.1" y="3.1" width="13" height="9.4" fill="#fff"/><rect x="1.1" y="5.1" width="13" height="5.3" fill="#6f8791"/><path d="M1.3 10.2L5.5 6.5 8.2 8.8 12.8 5.3" fill="none" stroke="#fff" stroke-width="0.9"/></g>
<path d="M188.6 720.6h5.6l-2.8 2.7z" fill="#111"/>
<g transform="translate(200.4,713.7) scale(0.9750)"><rect width="16" height="16" fill="#2e4756"/><polygon points="8.00,2.10 9.65,4.03 12.17,3.83 11.97,6.35 13.90,8.00 11.97,9.65 12.17,12.17 9.65,11.97 8.00,13.90 6.35,11.97 3.83,12.17 4.03,9.65 2.10,8.00 4.03,6.35 3.83,3.83 6.35,4.03" fill="#fff" stroke="#fff" stroke-width="0.8" stroke-linejoin="round"/><circle cx="8" cy="8" r="1.9" fill="#2e4756"/></g>
<line x1="533.5" y1="715.7" x2="533.5" y2="729.7" stroke="#c2cacd" stroke-width="1"/><line x1="534.5" y1="715.7" x2="534.5" y2="729.7" stroke="#eef3f4" stroke-width="1"/>
<g transform="translate(541.8,715.6) scale(1.0,1)" fill="none" stroke="#232f6e" stroke-width="2"><path d="M4 0.95H0.95V10.6H10.75V7.6"/><path d="M5.2 5.9L10 1.6" stroke-width="1.7"/><path d="M6.2 0.3H11.6V5.4Z" fill="#232f6e" stroke="none"/></g>
<g transform="translate(564.8,716.6)" fill="none" stroke="#263238" stroke-width="1.9" stroke-linecap="round"><path d="M0.9 0.9L10.3 9.1M10.3 0.9L0.9 9.1"/></g>
<text transform="translate(13.62,780.5) scale(0.8880,1)" font-family="Liberation Sans, sans-serif" font-size="31" fill="#111" stroke="#dce4e7" stroke-width="0.3">Ch1</text>
<path d="M141.5 763.8000000000001h10l-5.0 9.6z" fill="#000"/>
<rect x="153.8" y="738.7" width="420.8" height="41" fill="#000"/>
<text transform="translate(378.76,772.2) scale(0.9030,1)" font-family="Liberation Sans, sans-serif" font-size="33" fill="#27e52b" stroke="#27e52b" stroke-width="0.45">1.00018</text>
<text transform="translate(516.42,772.2) scale(0.9686,1)" font-family="Liberation Sans, sans-serif" font-size="33" fill="#27e52b" stroke="#27e52b" stroke-width="0.45">kHz</text>
<rect x="153.8" y="779.8000000000001" width="420.8" height="17" fill="#bfc4c5"/><rect x="154.60000000000002" y="780.6" width="418.40000000000003" height="15.4" fill="#828282"/><rect x="154.60000000000002" y="780.5000000000001" width="238.5" height="15.5" fill="#0cef14"/><rect x="155.70000000000002" y="786.0000000000001" width="390.4" height="3.2" fill="#030303"/><rect x="153.8" y="796.7" width="420.8" height="1.0" fill="#101010"/>
<line x1="8.5" y1="798.2" x2="153.8" y2="798.2" stroke="#8b9294" stroke-width="1"/>
<rect x="153.8" y="797.7" width="420.8" height="2.7" fill="#e2e6e7"/>
<rect x="153.8" y="800.3000000000001" width="420.8" height="18.2" fill="#c3c7c8"/><rect x="154.60000000000002" y="801.1" width="418.40000000000003" height="16.5" fill="#828282"/><rect x="154.60000000000002" y="801.1" width="238.5" height="16.5" fill="#0cef14"/><rect x="155.70000000000002" y="808.1" width="400.4" height="3.2" fill="#030303"/><rect x="153.8" y="817.6" width="420.8" height="1.0" fill="#e9eded"/>
<text transform="translate(13.54,842.4000000000001) scale(0.9389,1)" font-family="Liberation Sans, sans-serif" font-size="31" fill="#111" stroke="#dce4e7" stroke-width="0.3">Ch2</text>
<path d="M141.5 826.0h10l-5.0 9.6z" fill="#000"/>
<rect x="153.8" y="818.7" width="420.8" height="41" fill="#000"/>
<text transform="translate(378.76,851.2) scale(0.9030,1)" font-family="Liberation Sans, sans-serif" font-size="33" fill="#27e52b" stroke="#27e52b" stroke-width="0.45">1.00018</text>
<text transform="translate(516.42,851.2) scale(0.9686,1)" font-family="Liberation Sans, sans-serif" font-size="33" fill="#27e52b" stroke="#27e52b" stroke-width="0.45">kHz</text>
<text transform="translate(593.22,726.7) scale(1.0735,1)" font-family="Liberation Sans, sans-serif" font-size="14.8" font-weight="bold" fill="#141414" stroke="#141414" stroke-width="0.25">SINAD</text>
<text transform="translate(653.54,726.2) scale(0.9918,1)" font-family="Liberation Sans, sans-serif" font-size="11.6" fill="#222" stroke="#222" stroke-width="0.3">dB</text>
<path d="M714.1 720.6h5.6l-2.8 2.7z" fill="#111"/>
<g transform="translate(725.6,713.7)"><rect width="15.6" height="15.6" fill="#2e4756"/><rect x="1.1" y="3.1" width="13" height="9.4" fill="#fff"/><rect x="1.1" y="5.1" width="13" height="5.3" fill="#6f8791"/><path d="M1.3 10.2L5.5 6.5 8.2 8.8 12.8 5.3" fill="none" stroke="#fff" stroke-width="0.9"/></g>
<path d="M743.1 720.6h5.6l-2.8 2.7z" fill="#111"/>
<g transform="translate(754.9,713.7) scale(0.9750)"><rect width="16" height="16" fill="#2e4756"/><polygon points="8.00,2.10 9.65,4.03 12.17,3.83 11.97,6.35 13.90,8.00 11.97,9.65 12.17,12.17 9.65,11.97 8.00,13.90 6.35,11.97 3.83,12.17 4.03,9.65 2.10,8.00 4.03,6.35 3.83,3.83 6.35,4.03" fill="#fff" stroke="#fff" stroke-width="0.8" stroke-linejoin="round"/><circle cx="8" cy="8" r="1.9" fill="#2e4756"/></g>
<line x1="1116.5" y1="715.7" x2="1116.5" y2="729.7" stroke="#c2cacd" stroke-width="1"/><line x1="1117.5" y1="715.7" x2="1117.5" y2="729.7" stroke="#eef3f4" stroke-width="1"/>
<g transform="translate(1124.8,715.6) scale(1.0,1)" fill="none" stroke="#232f6e" stroke-width="2"><path d="M4 0.95H0.95V10.6H10.75V7.6"/><path d="M5.2 5.9L10 1.6" stroke-width="1.7"/><path d="M6.2 0.3H11.6V5.4Z" fill="#232f6e" stroke="none"/></g>
<g transform="translate(1147.8,716.6)" fill="none" stroke="#263238" stroke-width="1.9" stroke-linecap="round"><path d="M0.9 0.9L10.3 9.1M10.3 0.9L0.9 9.1"/></g>
<text transform="translate(596.62,780.5) scale(0.8880,1)" font-family="Liberation Sans, sans-serif" font-size="31" fill="#111" stroke="#dce4e7" stroke-width="0.3">Ch1</text>
<path d="M724.5 763.8000000000001h10l-5.0 9.6z" fill="#000"/>
<rect x="736.8" y="738.7" width="419.6" height="41" fill="#000"/>
<text transform="translate(982.45,772.2) scale(0.9086,1)" font-family="Liberation Sans, sans-serif" font-size="33" fill="#27e52b" stroke="#27e52b" stroke-width="0.45">111.571</text>
<text transform="translate(1114.39,772.2) scale(0.9171,1)" font-family="Liberation Sans, sans-serif" font-size="33" fill="#27e52b" stroke="#27e52b" stroke-width="0.45">dB</text>
<rect x="736.8" y="779.8000000000001" width="419.6" height="17" fill="#bfc4c5"/><rect x="737.5999999999999" y="780.6" width="417.20000000000005" height="15.4" fill="#828282"/><rect x="737.5999999999999" y="780.5000000000001" width="389.5" height="15.5" fill="#0cef14"/><rect x="738.6999999999999" y="786.0000000000001" width="388.4" height="3.2" fill="#030303"/><rect x="736.8" y="796.7" width="419.6" height="1.0" fill="#101010"/>
<line x1="591.5" y1="798.2" x2="736.8" y2="798.2" stroke="#8b9294" stroke-width="1"/>
<rect x="736.8" y="797.7" width="419.6" height="2.7" fill="#e2e6e7"/>
<rect x="736.8" y="800.3000000000001" width="419.6" height="18.2" fill="#c3c7c8"/><rect x="737.5999999999999" y="801.1" width="417.20000000000005" height="16.5" fill="#828282"/><rect x="737.5999999999999" y="801.1" width="388.5" height="16.5" fill="#0cef14"/><rect x="738.6999999999999" y="808.1" width="387.4" height="3.2" fill="#030303"/><rect x="736.8" y="817.6" width="419.6" height="1.0" fill="#e9eded"/>
<text transform="translate(596.54,842.4000000000001) scale(0.9389,1)" font-family="Liberation Sans, sans-serif" font-size="31" fill="#111" stroke="#dce4e7" stroke-width="0.3">Ch2</text>
<path d="M724.5 826.0h10l-5.0 9.6z" fill="#000"/>
<rect x="736.8" y="818.7" width="419.6" height="41" fill="#000"/>
<text transform="translate(982.38,851.2) scale(0.9385,1)" font-family="Liberation Sans, sans-serif" font-size="33" fill="#27e52b" stroke="#27e52b" stroke-width="0.45">111.269</text>
<text transform="translate(1114.39,851.2) scale(0.9171,1)" font-family="Liberation Sans, sans-serif" font-size="33" fill="#27e52b" stroke="#27e52b" stroke-width="0.45">dB</text>
<path d="M1181.3 557.2l3.4-3.6 3.4 3.6" fill="none" stroke="#404040" stroke-width="1.8"/>
<path d="M1180.6 854.6l3.4 3.6 3.4-3.6" fill="none" stroke="#404040" stroke-width="1.8"/>
<text x="527.16" y="880.3" font-family="Liberation Sans, sans-serif" font-size="12" fill="#303030" letter-spacing="0.670">Output:</text>
<text x="580.80" y="880.3" font-family="Liberation Sans, sans-serif" font-size="12" fill="#2bc52e" letter-spacing="0.387">Analog Balanced 2 Ch, 40 ohm</text>
<text x="767.12" y="880.3" font-family="Liberation Sans, sans-serif" font-size="12" fill="#303030" letter-spacing="0.672">Input:</text>
<text x="811.40" y="880.3" font-family="Liberation Sans, sans-serif" font-size="12" fill="#2bc52e" letter-spacing="0.389">Analog Balanced 2 Ch, 200 kohm</text>
<text x="1011.80" y="880.3" font-family="Liberation Sans, sans-serif" font-size="12" fill="#2bc52e" letter-spacing="0.413">10.00 Vrms</text>
<text x="1087.00" y="880.3" font-family="Liberation Sans, sans-serif" font-size="12" fill="#2bc52e" letter-spacing="0.378">20 Hz - 20 kHz</text>
<text transform="scale(0.795,1)" x="321.6 533.8 756.9 956.0 1025.3 1108.2" y="381" font-family="Liberation Sans, sans-serif" font-size="291.6" fill="#000" fill-opacity="0.078">PA5 II</text>
</svg>
</body></html>
